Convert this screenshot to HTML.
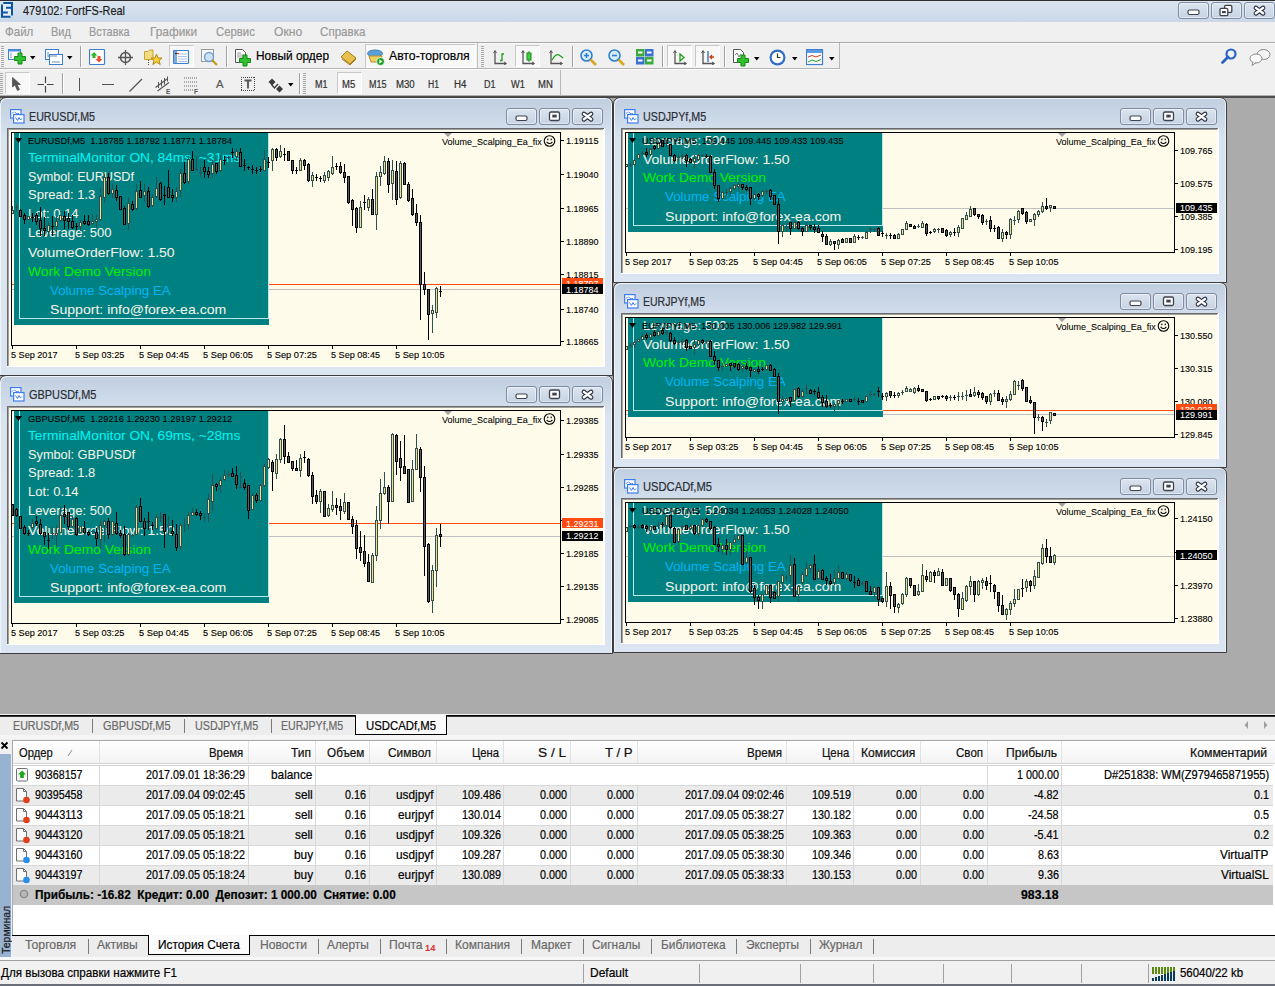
<!DOCTYPE html>
<html><head><meta charset="utf-8"><style>
html,body{margin:0;padding:0;}
body{width:1275px;height:986px;overflow:hidden;position:relative;background:#f0f0f0;font-family:"Liberation Sans",sans-serif;}
body div,body svg{position:absolute;}
.t{position:absolute;white-space:pre;-webkit-text-stroke:0.2px currentColor;}
</style></head><body>
<div style="left:0px;top:0px;width:1275px;height:1px;background:#2e2e2e;"></div>
<div style="left:0px;top:1px;width:1275px;height:21px;background:linear-gradient(#dbe5f0,#c9d7e7);"></div>
<svg style="left:0px;top:0px" width="16" height="20"><rect x="2" y="3" width="10" height="13.5" fill="#e4ecf6"/><path d="M2,4.5 V16.8 H10.5 M3.2,3 H12 V15.5 M6,7.8 H12 M3,12.5 H7.8" stroke="#0a56a4" stroke-width="2" fill="none"/></svg>
<span class="t" style="left:22.60px;top:4.13px;font-family:'Liberation Sans', sans-serif;font-size:13px;line-height:13px;color:#1c1c1c;font-weight:normal;transform:scaleX(0.8402);transform-origin:0 0;">479102: FortFS-Real</span>
<div style="left:1178px;top:2px;width:31px;height:17px;box-sizing:border-box;border:1px solid #7d8ba3;border-radius:3px;background:linear-gradient(#dbe4ef,#c7d3e2);box-shadow:inset 0 0 0 1px rgba(255,255,255,0.45);"></div>
<svg style="left:1178px;top:2px" width="31" height="17"><rect x="10.0" y="8.0" width="11" height="4.5" rx="1.5" fill="#fff" stroke="#3c4250" stroke-width="1.2"/></svg>
<div style="left:1211px;top:2px;width:31px;height:17px;box-sizing:border-box;border:1px solid #7d8ba3;border-radius:3px;background:linear-gradient(#dbe4ef,#c7d3e2);box-shadow:inset 0 0 0 1px rgba(255,255,255,0.45);"></div>
<svg style="left:1211px;top:2px" width="31" height="17"><rect x="13.6" y="3.4" width="7.2" height="7" rx="1.2" fill="#fff" stroke="#3c4250" stroke-width="1.3"/><rect x="9" y="6.4" width="7.8" height="7.2" rx="1.2" fill="#fff" stroke="#3c4250" stroke-width="1.3"/><rect x="11" y="9" width="3.8" height="2.2" fill="#3c4250"/></svg>
<div style="left:1244px;top:2px;width:31px;height:17px;box-sizing:border-box;border:1px solid #7d8ba3;border-radius:3px;background:linear-gradient(#dbe4ef,#c7d3e2);box-shadow:inset 0 0 0 1px rgba(255,255,255,0.45);"></div>
<svg style="left:1244px;top:2px" width="31" height="17"><path d="M11.9,5.9 L19.1,11.3 M19.1,5.9 L11.9,11.3" stroke="#2e3240" stroke-width="4.6" stroke-linecap="round"/><path d="M11.9,5.9 L19.1,11.3 M19.1,5.9 L11.9,11.3" stroke="#fff" stroke-width="2.4" stroke-linecap="round"/></svg>
<span class="t" style="left:4.70px;top:25.33px;font-family:'Liberation Sans', sans-serif;font-size:13px;line-height:13px;color:#9a9a9a;font-weight:normal;transform:scaleX(0.8852);transform-origin:0 0;">Файл</span>
<span class="t" style="left:51.00px;top:25.33px;font-family:'Liberation Sans', sans-serif;font-size:13px;line-height:13px;color:#9a9a9a;font-weight:normal;transform:scaleX(0.8499);transform-origin:0 0;">Вид</span>
<span class="t" style="left:89.40px;top:25.33px;font-family:'Liberation Sans', sans-serif;font-size:13px;line-height:13px;color:#9a9a9a;font-weight:normal;transform:scaleX(0.8401);transform-origin:0 0;">Вставка</span>
<span class="t" style="left:149.60px;top:25.33px;font-family:'Liberation Sans', sans-serif;font-size:13px;line-height:13px;color:#9a9a9a;font-weight:normal;transform:scaleX(0.9112);transform-origin:0 0;">Графики</span>
<span class="t" style="left:215.80px;top:25.33px;font-family:'Liberation Sans', sans-serif;font-size:13px;line-height:13px;color:#9a9a9a;font-weight:normal;transform:scaleX(0.8735);transform-origin:0 0;">Сервис</span>
<span class="t" style="left:273.60px;top:25.33px;font-family:'Liberation Sans', sans-serif;font-size:13px;line-height:13px;color:#9a9a9a;font-weight:normal;transform:scaleX(0.9332);transform-origin:0 0;">Окно</span>
<span class="t" style="left:320.00px;top:25.33px;font-family:'Liberation Sans', sans-serif;font-size:13px;line-height:13px;color:#9a9a9a;font-weight:normal;transform:scaleX(0.8922);transform-origin:0 0;">Справка</span>
<div style="left:0px;top:42px;width:1275px;height:1px;background:#a9a9a9;"></div>
<div style="left:0px;top:43px;width:1275px;height:1px;background:#fbfbfb;"></div>
<div style="left:0px;top:68px;width:840px;height:1px;background:#b4b4b4;"></div>
<div style="left:0px;top:69px;width:840px;height:1px;background:#fbfbfb;"></div>
<div style="left:0px;top:95px;width:1275px;height:1px;background:#b0b0b0;"></div>
<div style="left:0px;top:96px;width:1275px;height:2px;background:#4e4e4e;"></div>
<div style="left:839px;top:43px;width:1px;height:25px;background:#b8b8b8;"></div>
<div style="left:560px;top:70px;width:1px;height:25px;background:#b8b8b8;"></div>
<svg style="left:1px;top:46px" width="4" height="21"><rect x="0" y="0" width="3" height="1" fill="#a8a8a8"/><rect x="0" y="2" width="3" height="1" fill="#a8a8a8"/><rect x="0" y="4" width="3" height="1" fill="#a8a8a8"/><rect x="0" y="6" width="3" height="1" fill="#a8a8a8"/><rect x="0" y="8" width="3" height="1" fill="#a8a8a8"/><rect x="0" y="10" width="3" height="1" fill="#a8a8a8"/><rect x="0" y="12" width="3" height="1" fill="#a8a8a8"/><rect x="0" y="14" width="3" height="1" fill="#a8a8a8"/><rect x="0" y="16" width="3" height="1" fill="#a8a8a8"/><rect x="0" y="18" width="3" height="1" fill="#a8a8a8"/><rect x="0" y="20" width="3" height="1" fill="#a8a8a8"/></svg>
<svg style="left:8px;top:49px" width="18" height="16" viewBox="0 0 18 16"><rect x="0.5" y="0.5" width="12" height="10" fill="#fff" stroke="#3a7fd0"/><rect x="0.5" y="0.5" width="12" height="2" fill="#4d8fdc"/><path d="M3,3.5 V9" stroke="#7a9cc0"/><path d="M10,4 H14 V7.5 H17.5 V11.5 H14 V15 H10 V11.5 H6.5 V7.5 H10 Z" fill="#30c030" stroke="#138a13"/></svg>
<svg style="left:30px;top:56px" width="6" height="4" viewBox="0 0 6 4"><path d="M0,0 H5.5 L2.75,3.5 Z" fill="#000"/></svg>
<svg style="left:45px;top:49px" width="18" height="17" viewBox="0 0 18 17"><rect x="0.5" y="0.5" width="13" height="10" fill="#fff" stroke="#3a7fd0"/><rect x="4.5" y="5.5" width="13" height="10" fill="#fff" stroke="#3a7fd0"/><path d="M3,3 V8 M3,7 H12 M7,13 H15" stroke="#6a90b8"/></svg>
<svg style="left:67px;top:56px" width="6" height="4" viewBox="0 0 6 4"><path d="M0,0 H5.5 L2.75,3.5 Z" fill="#000"/></svg>
<div style="left:80px;top:46px;width:1px;height:21px;background:#a0a0a0;"></div>
<div style="left:81px;top:46px;width:1px;height:21px;background:#fff;"></div>
<svg style="left:89px;top:49px" width="17" height="17" viewBox="0 0 17 17"><rect x="0.5" y="0.5" width="15" height="15" rx="1" fill="#fff" stroke="#3a7fd0" stroke-width="1.2"/><path d="M5,3 L8.5,6.5 H6.5 V9 H3.5 V6.5 H1.5 Z" fill="#2fb52f"/><path d="M10,13.5 L13.5,10 H11.5 V7 H8.5 V10 H6.5 Z" fill="#e8502a"/></svg>
<svg style="left:117px;top:49px" width="17" height="17" viewBox="0 0 17 17"><circle cx="8.5" cy="8.5" r="5" fill="none" stroke="#555" stroke-width="1.5"/><path d="M8.5,1 V16 M1,8.5 H16" stroke="#555" stroke-width="1.3"/></svg>
<svg style="left:144px;top:49px" width="19" height="17" viewBox="0 0 19 17"><path d="M0.5,2.5 H4 L5.5,1 H9 V10.5 H0.5 Z" fill="#f2dc80" stroke="#c8a03a"/><path d="M12.5,5 L14,9 H18 L15,11.5 L16.2,15.5 L12.5,13 L8.8,15.5 L10,11.5 L7,9 H11 Z" fill="#f5d23a" stroke="#b8860b"/><path d="M4.5,11 V16" stroke="#555" stroke-dasharray="1,1"/></svg>
<div style="left:169px;top:45px;width:25px;height:22px;box-sizing:border-box;border:1px solid #c8c8c8;border-right-color:#fff;border-bottom-color:#fff;background:#f8f8f8;"></div>
<svg style="left:173px;top:50px" width="17" height="15" viewBox="0 0 17 15"><rect x="0.5" y="0.5" width="15" height="13" rx="1" fill="#fff" stroke="#3a7fd0" stroke-width="1.2"/><rect x="1" y="1" width="3" height="12" fill="#7fa8d8"/><path d="M5,4 H14 M5,6.5 H14 M5,9 H14 M5,11.5 H14" stroke="#a8c4e8"/><circle cx="3" cy="3.5" r="0.8" fill="#000"/><circle cx="5" cy="3.5" r="0.8" fill="#e00"/></svg>
<svg style="left:201px;top:49px" width="19" height="18" viewBox="0 0 19 18"><rect x="0.5" y="0.5" width="12" height="12" fill="#f8f8f8" stroke="#999"/><circle cx="8" cy="8" r="4.5" fill="#cfe2f5" stroke="#6a9ed6" stroke-width="1.4"/><path d="M11,11 L16,16" stroke="#c89a20" stroke-width="2.2"/></svg>
<div style="left:226px;top:46px;width:1px;height:21px;background:#a0a0a0;"></div>
<div style="left:227px;top:46px;width:1px;height:21px;background:#fff;"></div>
<svg style="left:235px;top:49px" width="19" height="18" viewBox="0 0 19 18"><path d="M0.5,0.5 H7.5 L10.5,3.5 V13.5 H0.5 Z" fill="#fff" stroke="#555"/><path d="M2,4 H6 M2,6 H8 M2,8 H8" stroke="#999"/><path d="M8,6 H12 V9.5 H15.5 V13.5 H12 V17 H8 V13.5 H4.5 V9.5 H8 Z" fill="#30c030" stroke="#138a13"/></svg>
<span class="t" style="left:255.60px;top:49.58px;font-family:'Liberation Sans', sans-serif;font-size:12.5px;line-height:12.5px;color:#000;font-weight:normal;transform:scaleX(0.9496);transform-origin:0 0;">Новый ордер</span>
<svg style="left:340px;top:50px" width="18" height="16" viewBox="0 0 18 16"><path d="M1,7 L7,1 L16,8 L10,14 Z" fill="#e8c050" stroke="#a87c18"/><path d="M2,9 L10,15 L16,9" fill="none" stroke="#a87c18"/></svg>
<div style="left:365px;top:44px;width:111px;height:24px;box-sizing:border-box;border:1px solid #c8c8c8;border-right-color:#fff;border-bottom-color:#fff;background:#f8f8f8;"></div>
<svg style="left:367px;top:49px" width="19" height="17" viewBox="0 0 19 17"><ellipse cx="8" cy="4.5" rx="7.5" ry="3.5" fill="#5aa0d8" stroke="#3f7fb8"/><path d="M2,7 L4,13 H13 L15,7 Z" fill="#f0d060" stroke="#b89028"/><circle cx="13.5" cy="12.5" r="4" fill="#20a020" stroke="#fff" stroke-width="0.8"/><path d="M12.3,10.5 V14.5 L15.5,12.5 Z" fill="#fff"/></svg>
<span class="t" style="left:389.20px;top:49.77px;font-family:'Liberation Sans', sans-serif;font-size:12.5px;line-height:12.5px;color:#000;font-weight:normal;transform:scaleX(0.9776);transform-origin:0 0;">Авто-торговля</span>
<div style="left:477px;top:43px;width:1px;height:25px;background:#c0c0c0;"></div>
<svg style="left:481px;top:46px" width="4" height="21"><rect x="0" y="0" width="3" height="1" fill="#a8a8a8"/><rect x="0" y="2" width="3" height="1" fill="#a8a8a8"/><rect x="0" y="4" width="3" height="1" fill="#a8a8a8"/><rect x="0" y="6" width="3" height="1" fill="#a8a8a8"/><rect x="0" y="8" width="3" height="1" fill="#a8a8a8"/><rect x="0" y="10" width="3" height="1" fill="#a8a8a8"/><rect x="0" y="12" width="3" height="1" fill="#a8a8a8"/><rect x="0" y="14" width="3" height="1" fill="#a8a8a8"/><rect x="0" y="16" width="3" height="1" fill="#a8a8a8"/><rect x="0" y="18" width="3" height="1" fill="#a8a8a8"/><rect x="0" y="20" width="3" height="1" fill="#a8a8a8"/></svg>
<svg style="left:492px;top:50px" width="16" height="15" viewBox="0 0 16 15"><path d="M3,1 V13.5 H14" fill="none" stroke="#555" stroke-width="1.3"/><path d="M1.5,3 L3,0.5 L4.5,3 M12,12 L14.5,13.5 L12,15" fill="none" stroke="#555"/><path d="M8,10.5 H10 V4 H12" fill="none" stroke="#1aa01a" stroke-width="1.3"/></svg>
<div style="left:515px;top:45px;width:25px;height:22px;box-sizing:border-box;border:1px solid #c8c8c8;border-right-color:#fff;border-bottom-color:#fff;background:#f8f8f8;"></div>
<svg style="left:520px;top:50px" width="16" height="15" viewBox="0 0 16 15"><path d="M3,1 V13.5 H14" fill="none" stroke="#555" stroke-width="1.3"/><path d="M1.5,3 L3,0.5 L4.5,3 M12,12 L14.5,13.5 L12,15" fill="none" stroke="#555"/><path d="M9,1 V12" stroke="#1a8a1a"/><rect x="7" y="3" width="4" height="7" fill="#3ad03a" stroke="#1a8a1a"/></svg>
<svg style="left:548px;top:50px" width="16" height="15" viewBox="0 0 16 15"><path d="M3,1 V13.5 H14" fill="none" stroke="#555" stroke-width="1.3"/><path d="M1.5,3 L3,0.5 L4.5,3 M12,12 L14.5,13.5 L12,15" fill="none" stroke="#555"/><path d="M4,10 Q8,3 11,5 T15,8" fill="none" stroke="#1aa01a" stroke-width="1.3"/></svg>
<div style="left:572px;top:46px;width:1px;height:21px;background:#a0a0a0;"></div>
<div style="left:573px;top:46px;width:1px;height:21px;background:#fff;"></div>
<svg style="left:580px;top:49px" width="18" height="17" viewBox="0 0 18 17"><circle cx="6.5" cy="6.5" r="5.5" fill="#d8ecfa" stroke="#2f7fd0" stroke-width="1.6"/><path d="M4,6.5 H9 M6.5,4 V9" stroke="#2f7fd0" stroke-width="1.6"/><path d="M10.5,10.5 L16,16" stroke="#d8a820" stroke-width="2.6"/></svg>
<svg style="left:608px;top:49px" width="18" height="17" viewBox="0 0 18 17"><circle cx="6.5" cy="6.5" r="5.5" fill="#d8ecfa" stroke="#2f7fd0" stroke-width="1.6"/><path d="M4,6.5 H9" stroke="#2f7fd0" stroke-width="1.6"/><path d="M10.5,10.5 L16,16" stroke="#d8a820" stroke-width="2.6"/></svg>
<svg style="left:636px;top:49px" width="18" height="16" viewBox="0 0 18 16"><rect x="0" y="0" width="8.5" height="7.5" fill="#3aaa3a"/><rect x="9" y="0" width="8.5" height="7.5" fill="#3a70d0"/><rect x="0" y="8" width="8.5" height="7.5" fill="#3a70d0"/><rect x="9" y="8" width="8.5" height="7.5" fill="#3aaa3a"/><path d="M2,3.5 H6.5 M11,3.5 H15.5 M2,11.5 H6.5 M11,11.5 H15.5" stroke="#fff" stroke-width="2"/></svg>
<div style="left:662px;top:46px;width:1px;height:21px;background:#a0a0a0;"></div>
<div style="left:663px;top:46px;width:1px;height:21px;background:#fff;"></div>
<div style="left:667px;top:45px;width:25px;height:22px;box-sizing:border-box;border:1px solid #c8c8c8;border-right-color:#fff;border-bottom-color:#fff;background:#f8f8f8;"></div>
<svg style="left:672px;top:50px" width="16" height="15" viewBox="0 0 16 15"><path d="M3,1 V13.5 H14" fill="none" stroke="#555" stroke-width="1.3"/><path d="M1.5,3 L3,0.5 L4.5,3 M12,12 L14.5,13.5 L12,15" fill="none" stroke="#555"/><path d="M8,4 V11 L12,7.5 Z" fill="none" stroke="#1aa01a" stroke-width="1.3"/></svg>
<div style="left:695px;top:45px;width:25px;height:22px;box-sizing:border-box;border:1px solid #c8c8c8;border-right-color:#fff;border-bottom-color:#fff;background:#f8f8f8;"></div>
<svg style="left:700px;top:50px" width="16" height="15" viewBox="0 0 16 15"><path d="M3,1 V13.5 H14" fill="none" stroke="#555" stroke-width="1.3"/><path d="M1.5,3 L3,0.5 L4.5,3 M12,12 L14.5,13.5 L12,15" fill="none" stroke="#555"/><path d="M8,1 V12" stroke="#2a6ab8" stroke-width="1.3"/><path d="M14,7 H10 M12,5 L10,7 L12,9" fill="none" stroke="#d04010" stroke-width="1.3"/></svg>
<div style="left:724px;top:46px;width:1px;height:21px;background:#a0a0a0;"></div>
<div style="left:725px;top:46px;width:1px;height:21px;background:#fff;"></div>
<svg style="left:733px;top:49px" width="18" height="18" viewBox="0 0 18 18"><path d="M0.5,0.5 H7.5 L10.5,3.5 V13.5 H0.5 Z" fill="#fff" stroke="#555"/><path d="M2,6 L4,4 L6,8 L8,5" fill="none" stroke="#777"/><path d="M8,6 H12 V9.5 H15.5 V13.5 H12 V17 H8 V13.5 H4.5 V9.5 H8 Z" fill="#30c030" stroke="#138a13"/></svg>
<svg style="left:754px;top:57px" width="6" height="4" viewBox="0 0 6 4"><path d="M0,0 H5.5 L2.75,3.5 Z" fill="#000"/></svg>
<svg style="left:769px;top:49px" width="18" height="18" viewBox="0 0 18 18"><circle cx="8.5" cy="8.5" r="8" fill="#2f6fc8"/><circle cx="8.5" cy="8.5" r="5.8" fill="#fff"/><path d="M8.5,4.5 V8.5 H11.5" stroke="#333" stroke-width="1.2" fill="none"/></svg>
<svg style="left:792px;top:57px" width="6" height="4" viewBox="0 0 6 4"><path d="M0,0 H5.5 L2.75,3.5 Z" fill="#000"/></svg>
<svg style="left:806px;top:49px" width="18" height="17" viewBox="0 0 18 17"><rect x="0.5" y="0.5" width="16" height="15" fill="#fff" stroke="#3a7fd0" stroke-width="1.2"/><rect x="1" y="1" width="15" height="3" fill="#5a9ae0"/><path d="M2,8 L6,6.5 L10,8 L15,6" stroke="#d04010" fill="none"/><path d="M2,13 L6,11 L10,12.5 L15,10.5" stroke="#1aa01a" fill="none"/></svg>
<svg style="left:829px;top:57px" width="6" height="4" viewBox="0 0 6 4"><path d="M0,0 H5.5 L2.75,3.5 Z" fill="#000"/></svg>
<svg style="left:1220px;top:48px" width="18" height="18" viewBox="0 0 18 18"><circle cx="11" cy="6" r="4.5" fill="none" stroke="#2a62c8" stroke-width="2.2"/><path d="M8,9 L2.5,14.5" stroke="#2a62c8" stroke-width="2.8" stroke-linecap="round"/></svg>
<svg style="left:1248px;top:47px" width="24" height="20" viewBox="0 0 24 20"><ellipse cx="15.5" cy="7.5" rx="6.5" ry="5" fill="#f4f4f4" stroke="#8a8a8a"/><ellipse cx="8" cy="11.5" rx="6" ry="4.5" fill="#fafafa" stroke="#8a8a8a"/><path d="M5,15 L4,18.5 L8,15.5" fill="#fafafa" stroke="#8a8a8a"/></svg>
<svg style="left:0px;top:73px" width="4" height="21"><rect x="0" y="0" width="3" height="1" fill="#a8a8a8"/><rect x="0" y="2" width="3" height="1" fill="#a8a8a8"/><rect x="0" y="4" width="3" height="1" fill="#a8a8a8"/><rect x="0" y="6" width="3" height="1" fill="#a8a8a8"/><rect x="0" y="8" width="3" height="1" fill="#a8a8a8"/><rect x="0" y="10" width="3" height="1" fill="#a8a8a8"/><rect x="0" y="12" width="3" height="1" fill="#a8a8a8"/><rect x="0" y="14" width="3" height="1" fill="#a8a8a8"/><rect x="0" y="16" width="3" height="1" fill="#a8a8a8"/><rect x="0" y="18" width="3" height="1" fill="#a8a8a8"/><rect x="0" y="20" width="3" height="1" fill="#a8a8a8"/></svg>
<div style="left:5px;top:72px;width:25px;height:22px;box-sizing:border-box;border:1px solid #c8c8c8;border-right-color:#fff;border-bottom-color:#fff;background:#f8f8f8;"></div>
<svg style="left:11px;top:76px" width="12" height="16" viewBox="0 0 12 16"><path d="M1.5,1.5 L1.5,11 L4,9 L6.5,14.5 L8.5,13.5 L6,8.5 L9.5,8.5 Z" fill="#555" stroke="#555" stroke-width="0.8"/></svg>
<svg style="left:37px;top:76px" width="17" height="17" viewBox="0 0 17 17"><path d="M8.5,0.5 V7 M8.5,10 V16.5 M0.5,8.5 H7 M10,8.5 H16.5" stroke="#444" stroke-width="1.2"/></svg>
<div style="left:62px;top:73px;width:1px;height:21px;background:#a0a0a0;"></div>
<div style="left:63px;top:73px;width:1px;height:21px;background:#fff;"></div>
<div style="left:79px;top:78px;width:1px;height:13px;background:#555;"></div>
<div style="left:102px;top:84px;width:12px;height:1px;background:#555;"></div>
<svg style="left:129px;top:78px" width="14" height="14" viewBox="0 0 14 14"><path d="M0.5,13.5 L13,1" stroke="#555" stroke-width="1.2"/></svg>
<svg style="left:155px;top:76px" width="18" height="18" viewBox="0 0 18 18"><path d="M0.5,11.5 L12,3 M2.5,15 L14,6.5" stroke="#555" stroke-width="1.1"/><path d="M3.5,6 V12 M6.5,4 V10.5 M9.5,2 V8.5 M12.5,0.5 V5.5" stroke="#555" stroke-width="1"/><text x="11" y="17.5" font-size="6.5" font-family="Liberation Sans" font-weight="bold" fill="#555">E</text></svg>
<svg style="left:184px;top:76px" width="16" height="18" viewBox="0 0 16 18"><path d="M0,2 H14 M0,6 H14 M0,10 H14 M0,14 H10" stroke="#666" stroke-dasharray="1,1"/><text x="10" y="17.5" font-size="6.5" font-family="Liberation Sans" font-weight="bold" fill="#555">F</text></svg>
<span class="t" style="left:215.80px;top:79.30px;font-family:'Liberation Sans', sans-serif;font-size:11px;line-height:11px;color:#5a5a5a;font-weight:normal;transform:scaleX(1.0349);transform-origin:0 0;">A</span>
<svg style="left:241px;top:77px" width="15" height="15" viewBox="0 0 15 15"><rect x="0" y="0" width="1" height="1" fill="#444"/><rect x="0" y="13" width="1" height="1" fill="#444"/><rect x="2" y="0" width="1" height="1" fill="#444"/><rect x="2" y="13" width="1" height="1" fill="#444"/><rect x="4" y="0" width="1" height="1" fill="#444"/><rect x="4" y="13" width="1" height="1" fill="#444"/><rect x="6" y="0" width="1" height="1" fill="#444"/><rect x="6" y="13" width="1" height="1" fill="#444"/><rect x="8" y="0" width="1" height="1" fill="#444"/><rect x="8" y="13" width="1" height="1" fill="#444"/><rect x="10" y="0" width="1" height="1" fill="#444"/><rect x="10" y="13" width="1" height="1" fill="#444"/><rect x="12" y="0" width="1" height="1" fill="#444"/><rect x="12" y="13" width="1" height="1" fill="#444"/><rect x="0" y="0" width="1" height="1" fill="#444"/><rect x="13" y="0" width="1" height="1" fill="#444"/><rect x="0" y="2" width="1" height="1" fill="#444"/><rect x="13" y="2" width="1" height="1" fill="#444"/><rect x="0" y="4" width="1" height="1" fill="#444"/><rect x="13" y="4" width="1" height="1" fill="#444"/><rect x="0" y="6" width="1" height="1" fill="#444"/><rect x="13" y="6" width="1" height="1" fill="#444"/><rect x="0" y="8" width="1" height="1" fill="#444"/><rect x="13" y="8" width="1" height="1" fill="#444"/><rect x="0" y="10" width="1" height="1" fill="#444"/><rect x="13" y="10" width="1" height="1" fill="#444"/><rect x="0" y="12" width="1" height="1" fill="#444"/><rect x="13" y="12" width="1" height="1" fill="#444"/><path d="M3.5,3.5 H10.5 M7,3.5 V11.5" stroke="#555" stroke-width="1.8"/></svg>
<svg style="left:268px;top:78px" width="16" height="15" viewBox="0 0 16 15"><path d="M4,0.5 L7.5,4 L4,7.5 L0.5,4 Z M11.5,7.5 L15,11 L11.5,14.5 L8,11 Z" fill="#3a3a3a"/><path d="M3.5,6.5 L6.5,10 L10,6" fill="none" stroke="#3a3a3a" stroke-width="1.4"/></svg>
<svg style="left:288px;top:83px" width="6" height="4" viewBox="0 0 6 4"><path d="M0,0 H5.5 L2.75,3.5 Z" fill="#000"/></svg>
<div style="left:299px;top:73px;width:1px;height:21px;background:#a0a0a0;"></div>
<div style="left:300px;top:73px;width:1px;height:21px;background:#fff;"></div>
<svg style="left:303px;top:73px" width="4" height="21"><rect x="0" y="0" width="3" height="1" fill="#a8a8a8"/><rect x="0" y="2" width="3" height="1" fill="#a8a8a8"/><rect x="0" y="4" width="3" height="1" fill="#a8a8a8"/><rect x="0" y="6" width="3" height="1" fill="#a8a8a8"/><rect x="0" y="8" width="3" height="1" fill="#a8a8a8"/><rect x="0" y="10" width="3" height="1" fill="#a8a8a8"/><rect x="0" y="12" width="3" height="1" fill="#a8a8a8"/><rect x="0" y="14" width="3" height="1" fill="#a8a8a8"/><rect x="0" y="16" width="3" height="1" fill="#a8a8a8"/><rect x="0" y="18" width="3" height="1" fill="#a8a8a8"/><rect x="0" y="20" width="3" height="1" fill="#a8a8a8"/></svg>
<div style="left:337px;top:72px;width:25px;height:22px;box-sizing:border-box;border:1px solid #c8c8c8;border-right-color:#fff;border-bottom-color:#fff;background:#f8f8f8;"></div>
<span class="t" style="left:314.80px;top:79.58px;font-family:'Liberation Sans', sans-serif;font-size:10px;line-height:10px;color:#303030;font-weight:normal;transform:scaleX(0.8989);transform-origin:0 0;">M1</span>
<span class="t" style="left:342.20px;top:79.58px;font-family:'Liberation Sans', sans-serif;font-size:10px;line-height:10px;color:#303030;font-weight:normal;transform:scaleX(0.9492);transform-origin:0 0;">M5</span>
<span class="t" style="left:368.60px;top:79.58px;font-family:'Liberation Sans', sans-serif;font-size:10px;line-height:10px;color:#303030;font-weight:normal;transform:scaleX(0.8996);transform-origin:0 0;">M15</span>
<span class="t" style="left:396.00px;top:79.58px;font-family:'Liberation Sans', sans-serif;font-size:10px;line-height:10px;color:#303030;font-weight:normal;transform:scaleX(0.9613);transform-origin:0 0;">M30</span>
<span class="t" style="left:427.80px;top:79.58px;font-family:'Liberation Sans', sans-serif;font-size:10px;line-height:10px;color:#303030;font-weight:normal;transform:scaleX(0.8596);transform-origin:0 0;">H1</span>
<span class="t" style="left:454.20px;top:79.58px;font-family:'Liberation Sans', sans-serif;font-size:10px;line-height:10px;color:#303030;font-weight:normal;transform:scaleX(0.9768);transform-origin:0 0;">H4</span>
<span class="t" style="left:483.80px;top:79.58px;font-family:'Liberation Sans', sans-serif;font-size:10px;line-height:10px;color:#303030;font-weight:normal;transform:scaleX(0.8987);transform-origin:0 0;">D1</span>
<span class="t" style="left:511.30px;top:79.58px;font-family:'Liberation Sans', sans-serif;font-size:10px;line-height:10px;color:#303030;font-weight:normal;transform:scaleX(0.9200);transform-origin:0 0;">W1</span>
<span class="t" style="left:537.60px;top:79.58px;font-family:'Liberation Sans', sans-serif;font-size:10px;line-height:10px;color:#303030;font-weight:normal;transform:scaleX(0.9510);transform-origin:0 0;">MN</span>
<div style="left:0px;top:98px;width:1275px;height:617px;background:#ababab;"></div>
<div style="left:-1px;top:97px;width:614px;height:279px;box-sizing:border-box;border:1px solid #3e3e3e;background:linear-gradient(#c0cee0 0px,#d0dcea 28px,#d9e4f0 40px,#dae5f1 100%);border-radius:7px 7px 0 0;box-shadow:inset 1px 1px 0 #eef4fa, inset -1px 0 0 #eef4fa;"></div>
<svg style="left:10px;top:109px" width="15" height="15"><rect x="0.6" y="0.6" width="10.4" height="8.4" fill="#fff" stroke="#3c7cf4" stroke-width="1.2"/><path d="M2.2,4.5 L3.5,3 M4.5,3 L7,5 L9,4.5" fill="none" stroke="#3c7cf4" stroke-width="1"/><rect x="3.6" y="5.6" width="10.4" height="8.4" fill="#fff" stroke="#3c7cf4" stroke-width="1.2"/><path d="M5.5,8.5 L7.5,11.5 L9,8.5 L10.5,11 L12,9.5" fill="none" stroke="#3c7cf4" stroke-width="1"/></svg>
<span class="t" style="left:29.20px;top:110.98px;font-family:'Liberation Sans', sans-serif;font-size:12.5px;line-height:12.5px;color:#2a2e36;font-weight:normal;transform:scaleX(0.8561);transform-origin:0 0;">EURUSDf,M5</span>
<div style="left:506px;top:108px;width:31px;height:17px;box-sizing:border-box;border:1px solid #7d8ba3;border-radius:3px;background:linear-gradient(#dbe4ef,#c7d3e2);box-shadow:inset 0 0 0 1px rgba(255,255,255,0.45);"></div>
<svg style="left:506px;top:108px" width="31" height="17"><rect x="10.0" y="8.0" width="11" height="4.5" rx="1.5" fill="#fff" stroke="#3c4250" stroke-width="1.2"/></svg>
<div style="left:539px;top:108px;width:31px;height:17px;box-sizing:border-box;border:1px solid #7d8ba3;border-radius:3px;background:linear-gradient(#dbe4ef,#c7d3e2);box-shadow:inset 0 0 0 1px rgba(255,255,255,0.45);"></div>
<svg style="left:539px;top:108px" width="31" height="17"><rect x="10.5" y="4.0" width="10" height="8.5" rx="1.5" fill="#fff" stroke="#3c4250" stroke-width="1.3"/><rect x="13.3" y="6.7" width="4.4" height="2.8" fill="#3c4250"/></svg>
<div style="left:572px;top:108px;width:31px;height:17px;box-sizing:border-box;border:1px solid #7d8ba3;border-radius:3px;background:linear-gradient(#dbe4ef,#c7d3e2);box-shadow:inset 0 0 0 1px rgba(255,255,255,0.45);"></div>
<svg style="left:572px;top:108px" width="31" height="17"><path d="M11.9,5.9 L19.1,11.3 M19.1,5.9 L11.9,11.3" stroke="#2e3240" stroke-width="4.6" stroke-linecap="round"/><path d="M11.9,5.9 L19.1,11.3 M19.1,5.9 L11.9,11.3" stroke="#fff" stroke-width="2.4" stroke-linecap="round"/></svg>
<div style="left:7px;top:128px;width:598px;height:239px;background:#fff;"></div>
<div style="left:7px;top:128px;width:597px;height:1px;background:#6a6a6a;"></div>
<div style="left:7px;top:129px;width:596px;height:1px;background:#a0a0a0;"></div>
<div style="left:7px;top:128px;width:1px;height:238px;background:#6a6a6a;"></div>
<div style="left:8px;top:129px;width:1px;height:237px;background:#a0a0a0;"></div>
<div style="left:9px;top:130px;width:594px;height:236px;background:#fffbea;"></div>
<div style="left:12px;top:284px;width:548px;height:1px;background:#ff4a10;"></div>
<div style="left:12px;top:289px;width:548px;height:1px;background:#c0c0c0;"></div>
<div style="left:14px;top:133px;width:255px;height:192px;background:#008080;"></div>
<div style="left:19px;top:133px;width:1px;height:185px;background:#b8e8e8;"></div>
<div style="left:19px;top:318px;width:250px;height:1px;background:#b8e8e8;"></div>
<div style="left:268px;top:133px;width:1px;height:185px;background:#b8e8e8;"></div>
<span class="t" style="left:28.40px;top:151.63px;font-family:'Liberation Sans', sans-serif;font-size:12.6px;line-height:12.6px;color:#00f4f4;font-weight:normal;transform:scaleX(1.0892);transform-origin:0 0;-webkit-text-stroke:0.05px currentColor;">TerminalMonitor ON, 84ms, ~31ms</span>
<span class="t" style="left:28.40px;top:170.53px;font-family:'Liberation Sans', sans-serif;font-size:12.6px;line-height:12.6px;color:#f2f2e8;font-weight:normal;transform:scaleX(1.0031);transform-origin:0 0;-webkit-text-stroke:0.05px currentColor;">Symbol: EURUSDf</span>
<span class="t" style="left:28.40px;top:189.33px;font-family:'Liberation Sans', sans-serif;font-size:12.6px;line-height:12.6px;color:#f2f2e8;font-weight:normal;transform:scaleX(1.0334);transform-origin:0 0;-webkit-text-stroke:0.05px currentColor;">Spread: 1.3</span>
<span class="t" style="left:28.40px;top:208.23px;font-family:'Liberation Sans', sans-serif;font-size:12.6px;line-height:12.6px;color:#f2f2e8;font-weight:normal;transform:scaleX(1.0320);transform-origin:0 0;-webkit-text-stroke:0.05px currentColor;">Lot: 0.14</span>
<span class="t" style="left:28.40px;top:227.33px;font-family:'Liberation Sans', sans-serif;font-size:12.6px;line-height:12.6px;color:#f2f2e8;font-weight:normal;transform:scaleX(1.0356);transform-origin:0 0;-webkit-text-stroke:0.05px currentColor;">Leverage: 500</span>
<span class="t" style="left:28.40px;top:246.93px;font-family:'Liberation Sans', sans-serif;font-size:12.6px;line-height:12.6px;color:#f2f2e8;font-weight:normal;transform:scaleX(1.1081);transform-origin:0 0;-webkit-text-stroke:0.05px currentColor;">VolumeOrderFlow: 1.50</span>
<span class="t" style="left:28.40px;top:266.33px;font-family:'Liberation Sans', sans-serif;font-size:12.6px;line-height:12.6px;color:#00f000;font-weight:normal;transform:scaleX(1.1005);transform-origin:0 0;-webkit-text-stroke:0.05px currentColor;">Work Demo Version</span>
<span class="t" style="left:50.30px;top:285.13px;font-family:'Liberation Sans', sans-serif;font-size:12.6px;line-height:12.6px;color:#00b4f4;font-weight:normal;transform:scaleX(1.0576);transform-origin:0 0;-webkit-text-stroke:0.05px currentColor;">Volume Scalping EA</span>
<span class="t" style="left:50.30px;top:303.93px;font-family:'Liberation Sans', sans-serif;font-size:12.6px;line-height:12.6px;color:#f2f2e8;font-weight:normal;transform:scaleX(1.1180);transform-origin:0 0;-webkit-text-stroke:0.05px currentColor;">Support: info@forex-ea.com</span>
<svg style="left:0px;top:0px" width="1275" height="986" shape-rendering="crispEdges"><rect x="12" y="206" width="1" height="8" fill="#2f4f4f"/><rect x="11" y="210" width="3" height="4" fill="#2f4f4f"/><rect x="12" y="211" width="1" height="2" fill="#f0e088"/><rect x="16" y="204" width="1" height="7" fill="#2f4f4f"/><rect x="15" y="207" width="3" height="1" fill="#2f4f4f"/><rect x="20" y="209" width="1" height="8" fill="#000000"/><rect x="19" y="210" width="3" height="7" fill="#000000"/><rect x="20" y="211" width="1" height="5" fill="#5a5a5a"/><rect x="24" y="213" width="1" height="11" fill="#000000"/><rect x="23" y="215" width="3" height="5" fill="#000000"/><rect x="24" y="216" width="1" height="3" fill="#5a5a5a"/><rect x="28" y="216" width="1" height="4" fill="#2f4f4f"/><rect x="27" y="216" width="3" height="4" fill="#2f4f4f"/><rect x="28" y="217" width="1" height="2" fill="#f0e088"/><rect x="32" y="213" width="1" height="9" fill="#000000"/><rect x="31" y="217" width="3" height="1" fill="#000000"/><rect x="36" y="213" width="1" height="12" fill="#000000"/><rect x="35" y="215" width="3" height="7" fill="#000000"/><rect x="36" y="216" width="1" height="5" fill="#5a5a5a"/><rect x="40" y="207" width="1" height="29" fill="#000000"/><rect x="39" y="220" width="3" height="9" fill="#000000"/><rect x="40" y="221" width="1" height="7" fill="#5a5a5a"/><rect x="44" y="217" width="1" height="19" fill="#000000"/><rect x="43" y="228" width="3" height="3" fill="#000000"/><rect x="44" y="229" width="1" height="1" fill="#5a5a5a"/><rect x="48" y="222" width="1" height="14" fill="#2f4f4f"/><rect x="47" y="225" width="3" height="7" fill="#2f4f4f"/><rect x="48" y="226" width="1" height="5" fill="#f0e088"/><rect x="52" y="216" width="1" height="20" fill="#000000"/><rect x="51" y="226" width="3" height="1" fill="#000000"/><rect x="56" y="216" width="1" height="16" fill="#2f4f4f"/><rect x="55" y="221" width="3" height="6" fill="#2f4f4f"/><rect x="56" y="222" width="1" height="4" fill="#f0e088"/><rect x="60" y="215" width="1" height="6" fill="#2f4f4f"/><rect x="59" y="215" width="3" height="6" fill="#2f4f4f"/><rect x="60" y="216" width="1" height="4" fill="#f0e088"/><rect x="64" y="211" width="1" height="18" fill="#000000"/><rect x="63" y="216" width="3" height="5" fill="#000000"/><rect x="64" y="217" width="1" height="3" fill="#5a5a5a"/><rect x="68" y="213" width="1" height="16" fill="#000000"/><rect x="67" y="218" width="3" height="4" fill="#000000"/><rect x="68" y="219" width="1" height="2" fill="#5a5a5a"/><rect x="72" y="215" width="1" height="14" fill="#000000"/><rect x="71" y="221" width="3" height="7" fill="#000000"/><rect x="72" y="222" width="1" height="5" fill="#5a5a5a"/><rect x="76" y="223" width="1" height="7" fill="#000000"/><rect x="75" y="226" width="3" height="1" fill="#000000"/><rect x="80" y="220" width="1" height="11" fill="#2f4f4f"/><rect x="79" y="222" width="3" height="5" fill="#2f4f4f"/><rect x="80" y="223" width="1" height="3" fill="#f0e088"/><rect x="84" y="215" width="1" height="10" fill="#000000"/><rect x="83" y="221" width="3" height="3" fill="#000000"/><rect x="84" y="222" width="1" height="1" fill="#5a5a5a"/><rect x="88" y="215" width="1" height="11" fill="#000000"/><rect x="87" y="221" width="3" height="4" fill="#000000"/><rect x="88" y="222" width="1" height="2" fill="#5a5a5a"/><rect x="92" y="214" width="1" height="11" fill="#2f4f4f"/><rect x="91" y="221" width="3" height="3" fill="#2f4f4f"/><rect x="92" y="222" width="1" height="1" fill="#f0e088"/><rect x="96" y="215" width="1" height="13" fill="#2f4f4f"/><rect x="95" y="219" width="3" height="3" fill="#2f4f4f"/><rect x="96" y="220" width="1" height="1" fill="#f0e088"/><rect x="100" y="188" width="1" height="33" fill="#2f4f4f"/><rect x="99" y="196" width="3" height="24" fill="#2f4f4f"/><rect x="100" y="197" width="1" height="22" fill="#f0e088"/><rect x="104" y="174" width="1" height="29" fill="#2f4f4f"/><rect x="103" y="177" width="3" height="21" fill="#2f4f4f"/><rect x="104" y="178" width="1" height="19" fill="#f0e088"/><rect x="108" y="173" width="1" height="22" fill="#000000"/><rect x="107" y="177" width="3" height="17" fill="#000000"/><rect x="108" y="178" width="1" height="15" fill="#5a5a5a"/><rect x="112" y="183" width="1" height="15" fill="#2f4f4f"/><rect x="111" y="189" width="3" height="5" fill="#2f4f4f"/><rect x="112" y="190" width="1" height="3" fill="#f0e088"/><rect x="116" y="185" width="1" height="16" fill="#000000"/><rect x="115" y="190" width="3" height="8" fill="#000000"/><rect x="116" y="191" width="1" height="6" fill="#5a5a5a"/><rect x="120" y="196" width="1" height="14" fill="#000000"/><rect x="119" y="196" width="3" height="14" fill="#000000"/><rect x="120" y="197" width="1" height="12" fill="#5a5a5a"/><rect x="124" y="206" width="1" height="19" fill="#000000"/><rect x="123" y="208" width="3" height="17" fill="#000000"/><rect x="124" y="209" width="1" height="15" fill="#5a5a5a"/><rect x="128" y="197" width="1" height="33" fill="#2f4f4f"/><rect x="127" y="203" width="3" height="21" fill="#2f4f4f"/><rect x="128" y="204" width="1" height="19" fill="#f0e088"/><rect x="132" y="201" width="1" height="10" fill="#000000"/><rect x="131" y="204" width="3" height="6" fill="#000000"/><rect x="132" y="205" width="1" height="4" fill="#5a5a5a"/><rect x="136" y="184" width="1" height="26" fill="#2f4f4f"/><rect x="135" y="191" width="3" height="18" fill="#2f4f4f"/><rect x="136" y="192" width="1" height="16" fill="#f0e088"/><rect x="140" y="181" width="1" height="17" fill="#000000"/><rect x="139" y="190" width="3" height="8" fill="#000000"/><rect x="140" y="191" width="1" height="6" fill="#5a5a5a"/><rect x="144" y="184" width="1" height="18" fill="#2f4f4f"/><rect x="143" y="191" width="3" height="5" fill="#2f4f4f"/><rect x="144" y="192" width="1" height="3" fill="#f0e088"/><rect x="148" y="187" width="1" height="21" fill="#000000"/><rect x="147" y="191" width="3" height="16" fill="#000000"/><rect x="148" y="192" width="1" height="14" fill="#5a5a5a"/><rect x="152" y="194" width="1" height="13" fill="#2f4f4f"/><rect x="151" y="197" width="3" height="9" fill="#2f4f4f"/><rect x="152" y="198" width="1" height="7" fill="#f0e088"/><rect x="156" y="177" width="1" height="21" fill="#2f4f4f"/><rect x="155" y="188" width="3" height="9" fill="#2f4f4f"/><rect x="156" y="189" width="1" height="7" fill="#f0e088"/><rect x="160" y="182" width="1" height="19" fill="#000000"/><rect x="159" y="183" width="3" height="17" fill="#000000"/><rect x="160" y="184" width="1" height="15" fill="#5a5a5a"/><rect x="164" y="186" width="1" height="19" fill="#000000"/><rect x="163" y="195" width="3" height="1" fill="#000000"/><rect x="168" y="170" width="1" height="28" fill="#000000"/><rect x="167" y="187" width="3" height="11" fill="#000000"/><rect x="168" y="188" width="1" height="9" fill="#5a5a5a"/><rect x="172" y="189" width="1" height="13" fill="#000000"/><rect x="171" y="195" width="3" height="3" fill="#000000"/><rect x="172" y="196" width="1" height="1" fill="#5a5a5a"/><rect x="176" y="187" width="1" height="15" fill="#2f4f4f"/><rect x="175" y="191" width="3" height="7" fill="#2f4f4f"/><rect x="176" y="192" width="1" height="5" fill="#f0e088"/><rect x="180" y="169" width="1" height="28" fill="#2f4f4f"/><rect x="179" y="173" width="3" height="18" fill="#2f4f4f"/><rect x="180" y="174" width="1" height="16" fill="#f0e088"/><rect x="184" y="162" width="1" height="22" fill="#000000"/><rect x="183" y="173" width="3" height="10" fill="#000000"/><rect x="184" y="174" width="1" height="8" fill="#5a5a5a"/><rect x="188" y="158" width="1" height="26" fill="#2f4f4f"/><rect x="187" y="159" width="3" height="23" fill="#2f4f4f"/><rect x="188" y="160" width="1" height="21" fill="#f0e088"/><rect x="192" y="151" width="1" height="20" fill="#000000"/><rect x="191" y="159" width="3" height="12" fill="#000000"/><rect x="192" y="160" width="1" height="10" fill="#5a5a5a"/><rect x="196" y="156" width="1" height="15" fill="#2f4f4f"/><rect x="195" y="169" width="3" height="1" fill="#2f4f4f"/><rect x="200" y="167" width="1" height="10" fill="#2f4f4f"/><rect x="199" y="172" width="3" height="1" fill="#2f4f4f"/><rect x="204" y="160" width="1" height="18" fill="#000000"/><rect x="203" y="167" width="3" height="5" fill="#000000"/><rect x="204" y="168" width="1" height="3" fill="#5a5a5a"/><rect x="208" y="167" width="1" height="11" fill="#000000"/><rect x="207" y="171" width="3" height="4" fill="#000000"/><rect x="208" y="172" width="1" height="2" fill="#5a5a5a"/><rect x="212" y="160" width="1" height="18" fill="#2f4f4f"/><rect x="211" y="164" width="3" height="10" fill="#2f4f4f"/><rect x="212" y="165" width="1" height="8" fill="#f0e088"/><rect x="216" y="163" width="1" height="11" fill="#000000"/><rect x="215" y="163" width="3" height="9" fill="#000000"/><rect x="216" y="164" width="1" height="7" fill="#5a5a5a"/><rect x="220" y="155" width="1" height="17" fill="#2f4f4f"/><rect x="219" y="159" width="3" height="12" fill="#2f4f4f"/><rect x="220" y="160" width="1" height="10" fill="#f0e088"/><rect x="224" y="156" width="1" height="9" fill="#000000"/><rect x="223" y="160" width="3" height="1" fill="#000000"/><rect x="228" y="156" width="1" height="3" fill="#2f4f4f"/><rect x="227" y="157" width="3" height="1" fill="#2f4f4f"/><rect x="232" y="148" width="1" height="10" fill="#000000"/><rect x="231" y="152" width="3" height="1" fill="#000000"/><rect x="236" y="149" width="1" height="12" fill="#2f4f4f"/><rect x="235" y="151" width="3" height="6" fill="#2f4f4f"/><rect x="236" y="152" width="1" height="4" fill="#f0e088"/><rect x="240" y="148" width="1" height="19" fill="#000000"/><rect x="239" y="152" width="3" height="15" fill="#000000"/><rect x="240" y="153" width="1" height="13" fill="#5a5a5a"/><rect x="244" y="159" width="1" height="12" fill="#000000"/><rect x="243" y="165" width="3" height="1" fill="#000000"/><rect x="248" y="166" width="1" height="4" fill="#000000"/><rect x="247" y="167" width="3" height="1" fill="#000000"/><rect x="252" y="165" width="1" height="9" fill="#000000"/><rect x="251" y="169" width="3" height="1" fill="#000000"/><rect x="256" y="167" width="1" height="7" fill="#000000"/><rect x="255" y="170" width="3" height="1" fill="#000000"/><rect x="260" y="166" width="1" height="6" fill="#000000"/><rect x="259" y="169" width="3" height="1" fill="#000000"/><rect x="264" y="150" width="1" height="21" fill="#2f4f4f"/><rect x="263" y="159" width="3" height="12" fill="#2f4f4f"/><rect x="264" y="160" width="1" height="10" fill="#f0e088"/><rect x="268" y="157" width="1" height="11" fill="#000000"/><rect x="267" y="162" width="3" height="1" fill="#000000"/><rect x="272" y="148" width="1" height="23" fill="#2f4f4f"/><rect x="271" y="149" width="3" height="12" fill="#2f4f4f"/><rect x="272" y="150" width="1" height="10" fill="#f0e088"/><rect x="276" y="148" width="1" height="13" fill="#000000"/><rect x="275" y="149" width="3" height="9" fill="#000000"/><rect x="276" y="150" width="1" height="7" fill="#5a5a5a"/><rect x="280" y="145" width="1" height="13" fill="#2f4f4f"/><rect x="279" y="151" width="3" height="6" fill="#2f4f4f"/><rect x="280" y="152" width="1" height="4" fill="#f0e088"/><rect x="284" y="148" width="1" height="13" fill="#000000"/><rect x="283" y="154" width="3" height="1" fill="#000000"/><rect x="288" y="151" width="1" height="10" fill="#000000"/><rect x="287" y="151" width="3" height="10" fill="#000000"/><rect x="288" y="152" width="1" height="8" fill="#5a5a5a"/><rect x="292" y="160" width="1" height="14" fill="#000000"/><rect x="291" y="160" width="3" height="11" fill="#000000"/><rect x="292" y="161" width="1" height="9" fill="#5a5a5a"/><rect x="296" y="167" width="1" height="7" fill="#000000"/><rect x="295" y="170" width="3" height="1" fill="#000000"/><rect x="300" y="158" width="1" height="13" fill="#2f4f4f"/><rect x="299" y="160" width="3" height="11" fill="#2f4f4f"/><rect x="300" y="161" width="1" height="9" fill="#f0e088"/><rect x="304" y="159" width="1" height="11" fill="#000000"/><rect x="303" y="160" width="3" height="6" fill="#000000"/><rect x="304" y="161" width="1" height="4" fill="#5a5a5a"/><rect x="308" y="163" width="1" height="19" fill="#000000"/><rect x="307" y="164" width="3" height="17" fill="#000000"/><rect x="308" y="165" width="1" height="15" fill="#5a5a5a"/><rect x="312" y="172" width="1" height="15" fill="#2f4f4f"/><rect x="311" y="175" width="3" height="6" fill="#2f4f4f"/><rect x="312" y="176" width="1" height="4" fill="#f0e088"/><rect x="316" y="174" width="1" height="7" fill="#000000"/><rect x="315" y="177" width="3" height="1" fill="#000000"/><rect x="320" y="176" width="1" height="6" fill="#000000"/><rect x="319" y="178" width="3" height="1" fill="#000000"/><rect x="324" y="172" width="1" height="11" fill="#2f4f4f"/><rect x="323" y="175" width="3" height="6" fill="#2f4f4f"/><rect x="324" y="176" width="1" height="4" fill="#f0e088"/><rect x="328" y="170" width="1" height="11" fill="#2f4f4f"/><rect x="327" y="171" width="3" height="7" fill="#2f4f4f"/><rect x="328" y="172" width="1" height="5" fill="#f0e088"/><rect x="332" y="156" width="1" height="19" fill="#2f4f4f"/><rect x="331" y="167" width="3" height="7" fill="#2f4f4f"/><rect x="332" y="168" width="1" height="5" fill="#f0e088"/><rect x="336" y="163" width="1" height="7" fill="#000000"/><rect x="335" y="166" width="3" height="1" fill="#000000"/><rect x="340" y="162" width="1" height="12" fill="#000000"/><rect x="339" y="166" width="3" height="7" fill="#000000"/><rect x="340" y="167" width="1" height="5" fill="#5a5a5a"/><rect x="344" y="164" width="1" height="19" fill="#000000"/><rect x="343" y="172" width="3" height="6" fill="#000000"/><rect x="344" y="173" width="1" height="4" fill="#5a5a5a"/><rect x="348" y="176" width="1" height="28" fill="#000000"/><rect x="347" y="176" width="3" height="27" fill="#000000"/><rect x="348" y="177" width="1" height="25" fill="#5a5a5a"/><rect x="352" y="199" width="1" height="27" fill="#000000"/><rect x="351" y="200" width="3" height="10" fill="#000000"/><rect x="352" y="201" width="1" height="8" fill="#5a5a5a"/><rect x="356" y="207" width="1" height="26" fill="#000000"/><rect x="355" y="208" width="3" height="20" fill="#000000"/><rect x="356" y="209" width="1" height="18" fill="#5a5a5a"/><rect x="360" y="201" width="1" height="27" fill="#2f4f4f"/><rect x="359" y="207" width="3" height="21" fill="#2f4f4f"/><rect x="360" y="208" width="1" height="19" fill="#f0e088"/><rect x="364" y="195" width="1" height="15" fill="#000000"/><rect x="363" y="202" width="3" height="1" fill="#000000"/><rect x="368" y="197" width="1" height="14" fill="#2f4f4f"/><rect x="367" y="199" width="3" height="9" fill="#2f4f4f"/><rect x="368" y="200" width="1" height="7" fill="#f0e088"/><rect x="372" y="189" width="1" height="26" fill="#000000"/><rect x="371" y="199" width="3" height="16" fill="#000000"/><rect x="372" y="200" width="1" height="14" fill="#5a5a5a"/><rect x="376" y="172" width="1" height="58" fill="#2f4f4f"/><rect x="375" y="176" width="3" height="39" fill="#2f4f4f"/><rect x="376" y="177" width="1" height="37" fill="#f0e088"/><rect x="380" y="166" width="1" height="20" fill="#2f4f4f"/><rect x="379" y="172" width="3" height="5" fill="#2f4f4f"/><rect x="380" y="173" width="1" height="3" fill="#f0e088"/><rect x="384" y="156" width="1" height="19" fill="#2f4f4f"/><rect x="383" y="161" width="3" height="13" fill="#2f4f4f"/><rect x="384" y="162" width="1" height="11" fill="#f0e088"/><rect x="388" y="158" width="1" height="35" fill="#000000"/><rect x="387" y="161" width="3" height="24" fill="#000000"/><rect x="388" y="162" width="1" height="22" fill="#5a5a5a"/><rect x="392" y="160" width="1" height="40" fill="#2f4f4f"/><rect x="391" y="170" width="3" height="14" fill="#2f4f4f"/><rect x="392" y="171" width="1" height="12" fill="#f0e088"/><rect x="396" y="161" width="1" height="44" fill="#000000"/><rect x="395" y="171" width="3" height="29" fill="#000000"/><rect x="396" y="172" width="1" height="27" fill="#5a5a5a"/><rect x="400" y="161" width="1" height="38" fill="#2f4f4f"/><rect x="399" y="163" width="3" height="35" fill="#2f4f4f"/><rect x="400" y="164" width="1" height="33" fill="#f0e088"/><rect x="404" y="162" width="1" height="23" fill="#000000"/><rect x="403" y="163" width="3" height="22" fill="#000000"/><rect x="404" y="164" width="1" height="20" fill="#5a5a5a"/><rect x="408" y="182" width="1" height="20" fill="#000000"/><rect x="407" y="184" width="3" height="17" fill="#000000"/><rect x="408" y="185" width="1" height="15" fill="#5a5a5a"/><rect x="412" y="189" width="1" height="27" fill="#000000"/><rect x="411" y="198" width="3" height="17" fill="#000000"/><rect x="412" y="199" width="1" height="15" fill="#5a5a5a"/><rect x="416" y="204" width="1" height="22" fill="#000000"/><rect x="415" y="213" width="3" height="10" fill="#000000"/><rect x="416" y="214" width="1" height="8" fill="#5a5a5a"/><rect x="420" y="215" width="1" height="105" fill="#000000"/><rect x="419" y="222" width="3" height="63" fill="#000000"/><rect x="420" y="223" width="1" height="61" fill="#5a5a5a"/><rect x="424" y="272" width="1" height="23" fill="#000000"/><rect x="423" y="284" width="3" height="6" fill="#000000"/><rect x="424" y="285" width="1" height="4" fill="#5a5a5a"/><rect x="428" y="289" width="1" height="51" fill="#000000"/><rect x="427" y="289" width="3" height="26" fill="#000000"/><rect x="428" y="290" width="1" height="24" fill="#5a5a5a"/><rect x="432" y="305" width="1" height="28" fill="#2f4f4f"/><rect x="431" y="310" width="3" height="4" fill="#2f4f4f"/><rect x="432" y="311" width="1" height="2" fill="#f0e088"/><rect x="436" y="287" width="1" height="31" fill="#2f4f4f"/><rect x="435" y="288" width="3" height="25" fill="#2f4f4f"/><rect x="436" y="289" width="1" height="23" fill="#f0e088"/><rect x="440" y="286" width="1" height="11" fill="#000000"/><rect x="439" y="291" width="3" height="1" fill="#000000"/></svg>
<div style="left:11px;top:132px;width:550px;height:1px;background:#000;"></div>
<div style="left:11px;top:345px;width:550px;height:1px;background:#000;"></div>
<div style="left:11px;top:132px;width:1px;height:213px;background:#000;"></div>
<div style="left:560px;top:132px;width:1px;height:213px;background:#000;"></div>
<svg style="left:15px;top:138px" width="8" height="6"><path d="M0,0 H7 L3.5,5 Z" fill="#000"/></svg>
<span class="t" style="left:27.50px;top:136.08px;font-family:'Liberation Sans', sans-serif;font-size:9.8px;line-height:9.8px;color:#000;font-weight:normal;transform:scaleX(0.9467);transform-origin:0 0;-webkit-text-stroke:0.08px currentColor;">EURUSDf,M5  1.18785 1.18792 1.18771 1.18784</span>
<svg style="left:444px;top:133px" width="9" height="5"><path d="M0,0 H8 L4,4 Z" fill="#a0a0a0"/></svg>
<span class="t" style="left:441.80px;top:137.08px;font-family:'Liberation Sans', sans-serif;font-size:9.8px;line-height:9.8px;color:#000;font-weight:normal;transform:scaleX(0.9207);transform-origin:0 0;-webkit-text-stroke:0.08px currentColor;">Volume_Scalping_Ea_fix</span>
<svg style="left:542px;top:134px" width="14" height="14"><circle cx="7.5" cy="7" r="5.3" fill="none" stroke="#000" stroke-width="1.1"/><rect x="5.2" y="4.6" width="1.2" height="1.6" fill="#000"/><rect x="8.6" y="4.6" width="1.2" height="1.6" fill="#000"/><path d="M4.6,7.8 Q7.5,11.2 10.4,7.8" fill="none" stroke="#000" stroke-width="1.1"/></svg>
<div style="left:561px;top:140px;width:3px;height:1px;background:#000;"></div>
<span class="t" style="left:566.40px;top:136.28px;font-family:'Liberation Sans', sans-serif;font-size:9.8px;line-height:9.8px;color:#000;font-weight:normal;transform:scaleX(0.9398);transform-origin:0 0;-webkit-text-stroke:0.12px currentColor;">1.19115</span>
<div style="left:561px;top:174px;width:3px;height:1px;background:#000;"></div>
<span class="t" style="left:566.40px;top:170.18px;font-family:'Liberation Sans', sans-serif;font-size:9.8px;line-height:9.8px;color:#000;font-weight:normal;transform:scaleX(0.9203);transform-origin:0 0;-webkit-text-stroke:0.12px currentColor;">1.19040</span>
<div style="left:561px;top:208px;width:3px;height:1px;background:#000;"></div>
<span class="t" style="left:566.40px;top:204.28px;font-family:'Liberation Sans', sans-serif;font-size:9.8px;line-height:9.8px;color:#000;font-weight:normal;transform:scaleX(0.9203);transform-origin:0 0;-webkit-text-stroke:0.12px currentColor;">1.18965</span>
<div style="left:561px;top:241px;width:3px;height:1px;background:#000;"></div>
<span class="t" style="left:566.40px;top:237.08px;font-family:'Liberation Sans', sans-serif;font-size:9.8px;line-height:9.8px;color:#000;font-weight:normal;transform:scaleX(0.9203);transform-origin:0 0;-webkit-text-stroke:0.12px currentColor;">1.18890</span>
<div style="left:561px;top:274px;width:3px;height:1px;background:#000;"></div>
<span class="t" style="left:566.40px;top:270.48px;font-family:'Liberation Sans', sans-serif;font-size:9.8px;line-height:9.8px;color:#000;font-weight:normal;transform:scaleX(0.9203);transform-origin:0 0;-webkit-text-stroke:0.12px currentColor;">1.18815</span>
<div style="left:561px;top:309px;width:3px;height:1px;background:#000;"></div>
<span class="t" style="left:566.40px;top:304.98px;font-family:'Liberation Sans', sans-serif;font-size:9.8px;line-height:9.8px;color:#000;font-weight:normal;transform:scaleX(0.9203);transform-origin:0 0;-webkit-text-stroke:0.12px currentColor;">1.18740</span>
<div style="left:561px;top:341px;width:3px;height:1px;background:#000;"></div>
<span class="t" style="left:566.40px;top:337.38px;font-family:'Liberation Sans', sans-serif;font-size:9.8px;line-height:9.8px;color:#000;font-weight:normal;transform:scaleX(0.9203);transform-origin:0 0;-webkit-text-stroke:0.12px currentColor;">1.18665</span>
<div style="left:562px;top:278px;width:41px;height:10px;background:#ff4a10;"></div>
<span class="t" style="left:566.40px;top:279.08px;font-family:'Liberation Sans', sans-serif;font-size:9.8px;line-height:9.8px;color:#fff;font-weight:normal;transform:scaleX(0.9203);transform-origin:0 0;-webkit-text-stroke:0.05px currentColor;">1.18797</span>
<div style="left:562px;top:284px;width:41px;height:10px;background:#000;"></div>
<span class="t" style="left:566.40px;top:284.98px;font-family:'Liberation Sans', sans-serif;font-size:9.8px;line-height:9.8px;color:#fff;font-weight:normal;transform:scaleX(0.9203);transform-origin:0 0;-webkit-text-stroke:0.05px currentColor;">1.18784</span>
<div style="left:12px;top:345px;width:1px;height:4px;background:#000;"></div>
<span class="t" style="left:11.20px;top:350.22px;font-family:'Liberation Sans', sans-serif;font-size:9.5px;line-height:9.5px;color:#000;font-weight:normal;transform:scaleX(0.9566);transform-origin:0 0;-webkit-text-stroke:0.12px currentColor;">5 Sep 2017</span>
<div style="left:76px;top:345px;width:1px;height:4px;background:#000;"></div>
<span class="t" style="left:75.20px;top:350.22px;font-family:'Liberation Sans', sans-serif;font-size:9.5px;line-height:9.5px;color:#000;font-weight:normal;transform:scaleX(0.9620);transform-origin:0 0;-webkit-text-stroke:0.12px currentColor;">5 Sep 03:25</span>
<div style="left:140px;top:345px;width:1px;height:4px;background:#000;"></div>
<span class="t" style="left:139.20px;top:350.22px;font-family:'Liberation Sans', sans-serif;font-size:9.5px;line-height:9.5px;color:#000;font-weight:normal;transform:scaleX(0.9756);transform-origin:0 0;-webkit-text-stroke:0.12px currentColor;">5 Sep 04:45</span>
<div style="left:204px;top:345px;width:1px;height:4px;background:#000;"></div>
<span class="t" style="left:203.20px;top:350.22px;font-family:'Liberation Sans', sans-serif;font-size:9.5px;line-height:9.5px;color:#000;font-weight:normal;transform:scaleX(0.9756);transform-origin:0 0;-webkit-text-stroke:0.12px currentColor;">5 Sep 06:05</span>
<div style="left:268px;top:345px;width:1px;height:4px;background:#000;"></div>
<span class="t" style="left:267.20px;top:350.22px;font-family:'Liberation Sans', sans-serif;font-size:9.5px;line-height:9.5px;color:#000;font-weight:normal;transform:scaleX(0.9756);transform-origin:0 0;-webkit-text-stroke:0.12px currentColor;">5 Sep 07:25</span>
<div style="left:332px;top:345px;width:1px;height:4px;background:#000;"></div>
<span class="t" style="left:331.20px;top:350.22px;font-family:'Liberation Sans', sans-serif;font-size:9.5px;line-height:9.5px;color:#000;font-weight:normal;transform:scaleX(0.9561);transform-origin:0 0;-webkit-text-stroke:0.12px currentColor;">5 Sep 08:45</span>
<div style="left:396px;top:345px;width:1px;height:4px;background:#000;"></div>
<span class="t" style="left:395.20px;top:350.22px;font-family:'Liberation Sans', sans-serif;font-size:9.5px;line-height:9.5px;color:#000;font-weight:normal;transform:scaleX(0.9659);transform-origin:0 0;-webkit-text-stroke:0.12px currentColor;">5 Sep 10:05</span>
<div style="left:-1px;top:375px;width:614px;height:279px;box-sizing:border-box;border:1px solid #3e3e3e;background:linear-gradient(#c0cee0 0px,#d0dcea 28px,#d9e4f0 40px,#dae5f1 100%);border-radius:7px 7px 0 0;box-shadow:inset 1px 1px 0 #eef4fa, inset -1px 0 0 #eef4fa;"></div>
<svg style="left:10px;top:387px" width="15" height="15"><rect x="0.6" y="0.6" width="10.4" height="8.4" fill="#fff" stroke="#3c7cf4" stroke-width="1.2"/><path d="M2.2,4.5 L3.5,3 M4.5,3 L7,5 L9,4.5" fill="none" stroke="#3c7cf4" stroke-width="1"/><rect x="3.6" y="5.6" width="10.4" height="8.4" fill="#fff" stroke="#3c7cf4" stroke-width="1.2"/><path d="M5.5,8.5 L7.5,11.5 L9,8.5 L10.5,11 L12,9.5" fill="none" stroke="#3c7cf4" stroke-width="1"/></svg>
<span class="t" style="left:29.20px;top:388.97px;font-family:'Liberation Sans', sans-serif;font-size:12.5px;line-height:12.5px;color:#2a2e36;font-weight:normal;transform:scaleX(0.8728);transform-origin:0 0;">GBPUSDf,M5</span>
<div style="left:506px;top:386px;width:31px;height:17px;box-sizing:border-box;border:1px solid #7d8ba3;border-radius:3px;background:linear-gradient(#dbe4ef,#c7d3e2);box-shadow:inset 0 0 0 1px rgba(255,255,255,0.45);"></div>
<svg style="left:506px;top:386px" width="31" height="17"><rect x="10.0" y="8.0" width="11" height="4.5" rx="1.5" fill="#fff" stroke="#3c4250" stroke-width="1.2"/></svg>
<div style="left:539px;top:386px;width:31px;height:17px;box-sizing:border-box;border:1px solid #7d8ba3;border-radius:3px;background:linear-gradient(#dbe4ef,#c7d3e2);box-shadow:inset 0 0 0 1px rgba(255,255,255,0.45);"></div>
<svg style="left:539px;top:386px" width="31" height="17"><rect x="10.5" y="4.0" width="10" height="8.5" rx="1.5" fill="#fff" stroke="#3c4250" stroke-width="1.3"/><rect x="13.3" y="6.7" width="4.4" height="2.8" fill="#3c4250"/></svg>
<div style="left:572px;top:386px;width:31px;height:17px;box-sizing:border-box;border:1px solid #7d8ba3;border-radius:3px;background:linear-gradient(#dbe4ef,#c7d3e2);box-shadow:inset 0 0 0 1px rgba(255,255,255,0.45);"></div>
<svg style="left:572px;top:386px" width="31" height="17"><path d="M11.9,5.9 L19.1,11.3 M19.1,5.9 L11.9,11.3" stroke="#2e3240" stroke-width="4.6" stroke-linecap="round"/><path d="M11.9,5.9 L19.1,11.3 M19.1,5.9 L11.9,11.3" stroke="#fff" stroke-width="2.4" stroke-linecap="round"/></svg>
<div style="left:7px;top:406px;width:598px;height:239px;background:#fff;"></div>
<div style="left:7px;top:406px;width:597px;height:1px;background:#6a6a6a;"></div>
<div style="left:7px;top:407px;width:596px;height:1px;background:#a0a0a0;"></div>
<div style="left:7px;top:406px;width:1px;height:238px;background:#6a6a6a;"></div>
<div style="left:8px;top:407px;width:1px;height:237px;background:#a0a0a0;"></div>
<div style="left:9px;top:408px;width:594px;height:236px;background:#fffbea;"></div>
<div style="left:12px;top:523px;width:548px;height:1px;background:#ff4a10;"></div>
<div style="left:12px;top:536px;width:548px;height:1px;background:#c0c0c0;"></div>
<div style="left:14px;top:411px;width:255px;height:192px;background:#008080;"></div>
<div style="left:19px;top:411px;width:1px;height:185px;background:#b8e8e8;"></div>
<div style="left:19px;top:596px;width:250px;height:1px;background:#b8e8e8;"></div>
<div style="left:268px;top:411px;width:1px;height:185px;background:#b8e8e8;"></div>
<span class="t" style="left:28.40px;top:429.63px;font-family:'Liberation Sans', sans-serif;font-size:12.6px;line-height:12.6px;color:#00f4f4;font-weight:normal;transform:scaleX(1.0892);transform-origin:0 0;-webkit-text-stroke:0.05px currentColor;">TerminalMonitor ON, 69ms, ~28ms</span>
<span class="t" style="left:28.40px;top:448.53px;font-family:'Liberation Sans', sans-serif;font-size:12.6px;line-height:12.6px;color:#f2f2e8;font-weight:normal;transform:scaleX(1.0124);transform-origin:0 0;-webkit-text-stroke:0.05px currentColor;">Symbol: GBPUSDf</span>
<span class="t" style="left:28.40px;top:467.33px;font-family:'Liberation Sans', sans-serif;font-size:12.6px;line-height:12.6px;color:#f2f2e8;font-weight:normal;transform:scaleX(1.0334);transform-origin:0 0;-webkit-text-stroke:0.05px currentColor;">Spread: 1.8</span>
<span class="t" style="left:28.40px;top:486.23px;font-family:'Liberation Sans', sans-serif;font-size:12.6px;line-height:12.6px;color:#f2f2e8;font-weight:normal;transform:scaleX(1.0320);transform-origin:0 0;-webkit-text-stroke:0.05px currentColor;">Lot: 0.14</span>
<span class="t" style="left:28.40px;top:505.33px;font-family:'Liberation Sans', sans-serif;font-size:12.6px;line-height:12.6px;color:#f2f2e8;font-weight:normal;transform:scaleX(1.0356);transform-origin:0 0;-webkit-text-stroke:0.05px currentColor;">Leverage: 500</span>
<span class="t" style="left:28.40px;top:524.93px;font-family:'Liberation Sans', sans-serif;font-size:12.6px;line-height:12.6px;color:#f2f2e8;font-weight:normal;transform:scaleX(1.1081);transform-origin:0 0;-webkit-text-stroke:0.05px currentColor;">VolumeOrderFlow: 1.50</span>
<span class="t" style="left:28.40px;top:544.33px;font-family:'Liberation Sans', sans-serif;font-size:12.6px;line-height:12.6px;color:#00f000;font-weight:normal;transform:scaleX(1.1005);transform-origin:0 0;-webkit-text-stroke:0.05px currentColor;">Work Demo Version</span>
<span class="t" style="left:50.30px;top:563.13px;font-family:'Liberation Sans', sans-serif;font-size:12.6px;line-height:12.6px;color:#00b4f4;font-weight:normal;transform:scaleX(1.0576);transform-origin:0 0;-webkit-text-stroke:0.05px currentColor;">Volume Scalping EA</span>
<span class="t" style="left:50.30px;top:581.93px;font-family:'Liberation Sans', sans-serif;font-size:12.6px;line-height:12.6px;color:#f2f2e8;font-weight:normal;transform:scaleX(1.1180);transform-origin:0 0;-webkit-text-stroke:0.05px currentColor;">Support: info@forex-ea.com</span>
<svg style="left:0px;top:0px" width="1275" height="986" shape-rendering="crispEdges"><rect x="12" y="504" width="1" height="12" fill="#000000"/><rect x="11" y="504" width="3" height="12" fill="#000000"/><rect x="12" y="505" width="1" height="10" fill="#5a5a5a"/><rect x="16" y="508" width="1" height="9" fill="#000000"/><rect x="15" y="509" width="3" height="7" fill="#000000"/><rect x="16" y="510" width="1" height="5" fill="#5a5a5a"/><rect x="20" y="516" width="1" height="13" fill="#000000"/><rect x="19" y="516" width="3" height="13" fill="#000000"/><rect x="20" y="517" width="1" height="11" fill="#5a5a5a"/><rect x="24" y="525" width="1" height="10" fill="#000000"/><rect x="23" y="527" width="3" height="7" fill="#000000"/><rect x="24" y="528" width="1" height="5" fill="#5a5a5a"/><rect x="28" y="530" width="1" height="6" fill="#000000"/><rect x="27" y="533" width="3" height="1" fill="#000000"/><rect x="32" y="519" width="1" height="10" fill="#2f4f4f"/><rect x="31" y="523" width="3" height="5" fill="#2f4f4f"/><rect x="32" y="524" width="1" height="3" fill="#f0e088"/><rect x="36" y="516" width="1" height="10" fill="#000000"/><rect x="35" y="521" width="3" height="3" fill="#000000"/><rect x="36" y="522" width="1" height="1" fill="#5a5a5a"/><rect x="40" y="519" width="1" height="16" fill="#000000"/><rect x="39" y="524" width="3" height="10" fill="#000000"/><rect x="40" y="525" width="1" height="8" fill="#5a5a5a"/><rect x="44" y="532" width="1" height="13" fill="#000000"/><rect x="43" y="532" width="3" height="5" fill="#000000"/><rect x="44" y="533" width="1" height="3" fill="#5a5a5a"/><rect x="48" y="533" width="1" height="16" fill="#000000"/><rect x="47" y="540" width="3" height="1" fill="#000000"/><rect x="52" y="527" width="1" height="12" fill="#2f4f4f"/><rect x="51" y="533" width="3" height="1" fill="#2f4f4f"/><rect x="56" y="525" width="1" height="21" fill="#2f4f4f"/><rect x="55" y="533" width="3" height="3" fill="#2f4f4f"/><rect x="56" y="534" width="1" height="1" fill="#f0e088"/><rect x="60" y="506" width="1" height="27" fill="#2f4f4f"/><rect x="59" y="515" width="3" height="18" fill="#2f4f4f"/><rect x="60" y="516" width="1" height="16" fill="#f0e088"/><rect x="64" y="505" width="1" height="19" fill="#000000"/><rect x="63" y="514" width="3" height="3" fill="#000000"/><rect x="64" y="515" width="1" height="1" fill="#5a5a5a"/><rect x="68" y="512" width="1" height="18" fill="#000000"/><rect x="67" y="512" width="3" height="15" fill="#000000"/><rect x="68" y="513" width="1" height="13" fill="#5a5a5a"/><rect x="72" y="516" width="1" height="11" fill="#2f4f4f"/><rect x="71" y="519" width="3" height="8" fill="#2f4f4f"/><rect x="72" y="520" width="1" height="6" fill="#f0e088"/><rect x="76" y="517" width="1" height="19" fill="#000000"/><rect x="75" y="518" width="3" height="17" fill="#000000"/><rect x="76" y="519" width="1" height="15" fill="#5a5a5a"/><rect x="80" y="526" width="1" height="7" fill="#2f4f4f"/><rect x="79" y="526" width="3" height="7" fill="#2f4f4f"/><rect x="80" y="527" width="1" height="5" fill="#f0e088"/><rect x="84" y="521" width="1" height="13" fill="#000000"/><rect x="83" y="528" width="3" height="5" fill="#000000"/><rect x="84" y="529" width="1" height="3" fill="#5a5a5a"/><rect x="88" y="531" width="1" height="5" fill="#000000"/><rect x="87" y="532" width="3" height="3" fill="#000000"/><rect x="88" y="533" width="1" height="1" fill="#5a5a5a"/><rect x="92" y="530" width="1" height="4" fill="#2f4f4f"/><rect x="91" y="531" width="3" height="1" fill="#2f4f4f"/><rect x="96" y="528" width="1" height="18" fill="#000000"/><rect x="95" y="532" width="3" height="7" fill="#000000"/><rect x="96" y="533" width="1" height="5" fill="#5a5a5a"/><rect x="100" y="520" width="1" height="29" fill="#2f4f4f"/><rect x="99" y="525" width="3" height="15" fill="#2f4f4f"/><rect x="100" y="526" width="1" height="13" fill="#f0e088"/><rect x="104" y="520" width="1" height="22" fill="#2f4f4f"/><rect x="103" y="521" width="3" height="5" fill="#2f4f4f"/><rect x="104" y="522" width="1" height="3" fill="#f0e088"/><rect x="108" y="518" width="1" height="21" fill="#000000"/><rect x="107" y="521" width="3" height="14" fill="#000000"/><rect x="108" y="522" width="1" height="12" fill="#5a5a5a"/><rect x="112" y="521" width="1" height="15" fill="#2f4f4f"/><rect x="111" y="521" width="3" height="14" fill="#2f4f4f"/><rect x="112" y="522" width="1" height="12" fill="#f0e088"/><rect x="116" y="512" width="1" height="23" fill="#000000"/><rect x="115" y="523" width="3" height="11" fill="#000000"/><rect x="116" y="524" width="1" height="9" fill="#5a5a5a"/><rect x="120" y="530" width="1" height="8" fill="#000000"/><rect x="119" y="533" width="3" height="3" fill="#000000"/><rect x="120" y="534" width="1" height="1" fill="#5a5a5a"/><rect x="124" y="526" width="1" height="30" fill="#000000"/><rect x="123" y="534" width="3" height="21" fill="#000000"/><rect x="124" y="535" width="1" height="19" fill="#5a5a5a"/><rect x="128" y="533" width="1" height="23" fill="#2f4f4f"/><rect x="127" y="534" width="3" height="21" fill="#2f4f4f"/><rect x="128" y="535" width="1" height="19" fill="#f0e088"/><rect x="132" y="534" width="1" height="3" fill="#2f4f4f"/><rect x="131" y="535" width="3" height="1" fill="#2f4f4f"/><rect x="136" y="505" width="1" height="30" fill="#2f4f4f"/><rect x="135" y="507" width="3" height="28" fill="#2f4f4f"/><rect x="136" y="508" width="1" height="26" fill="#f0e088"/><rect x="140" y="498" width="1" height="24" fill="#000000"/><rect x="139" y="506" width="3" height="16" fill="#000000"/><rect x="140" y="507" width="1" height="14" fill="#5a5a5a"/><rect x="144" y="518" width="1" height="18" fill="#000000"/><rect x="143" y="521" width="3" height="8" fill="#000000"/><rect x="144" y="522" width="1" height="6" fill="#5a5a5a"/><rect x="148" y="512" width="1" height="18" fill="#000000"/><rect x="147" y="521" width="3" height="1" fill="#000000"/><rect x="152" y="522" width="1" height="8" fill="#000000"/><rect x="151" y="525" width="3" height="1" fill="#000000"/><rect x="156" y="514" width="1" height="16" fill="#2f4f4f"/><rect x="155" y="517" width="3" height="12" fill="#2f4f4f"/><rect x="156" y="518" width="1" height="10" fill="#f0e088"/><rect x="160" y="512" width="1" height="10" fill="#2f4f4f"/><rect x="159" y="517" width="3" height="1" fill="#2f4f4f"/><rect x="164" y="514" width="1" height="34" fill="#000000"/><rect x="163" y="514" width="3" height="18" fill="#000000"/><rect x="164" y="515" width="1" height="16" fill="#5a5a5a"/><rect x="168" y="516" width="1" height="20" fill="#2f4f4f"/><rect x="167" y="525" width="3" height="1" fill="#2f4f4f"/><rect x="172" y="520" width="1" height="16" fill="#000000"/><rect x="171" y="531" width="3" height="3" fill="#000000"/><rect x="172" y="532" width="1" height="1" fill="#5a5a5a"/><rect x="176" y="524" width="1" height="27" fill="#000000"/><rect x="175" y="534" width="3" height="14" fill="#000000"/><rect x="176" y="535" width="1" height="12" fill="#5a5a5a"/><rect x="180" y="523" width="1" height="27" fill="#2f4f4f"/><rect x="179" y="525" width="3" height="22" fill="#2f4f4f"/><rect x="180" y="526" width="1" height="20" fill="#f0e088"/><rect x="184" y="518" width="1" height="14" fill="#2f4f4f"/><rect x="183" y="525" width="3" height="1" fill="#2f4f4f"/><rect x="188" y="512" width="1" height="18" fill="#2f4f4f"/><rect x="187" y="515" width="3" height="10" fill="#2f4f4f"/><rect x="188" y="516" width="1" height="8" fill="#f0e088"/><rect x="192" y="508" width="1" height="8" fill="#2f4f4f"/><rect x="191" y="512" width="3" height="4" fill="#2f4f4f"/><rect x="192" y="513" width="1" height="2" fill="#f0e088"/><rect x="196" y="509" width="1" height="7" fill="#000000"/><rect x="195" y="512" width="3" height="3" fill="#000000"/><rect x="196" y="513" width="1" height="1" fill="#5a5a5a"/><rect x="200" y="511" width="1" height="9" fill="#000000"/><rect x="199" y="513" width="3" height="3" fill="#000000"/><rect x="200" y="514" width="1" height="1" fill="#5a5a5a"/><rect x="204" y="513" width="1" height="9" fill="#2f4f4f"/><rect x="203" y="517" width="3" height="1" fill="#2f4f4f"/><rect x="208" y="494" width="1" height="28" fill="#2f4f4f"/><rect x="207" y="499" width="3" height="15" fill="#2f4f4f"/><rect x="208" y="500" width="1" height="13" fill="#f0e088"/><rect x="212" y="474" width="1" height="37" fill="#2f4f4f"/><rect x="211" y="485" width="3" height="17" fill="#2f4f4f"/><rect x="212" y="486" width="1" height="15" fill="#f0e088"/><rect x="216" y="483" width="1" height="8" fill="#000000"/><rect x="215" y="484" width="3" height="3" fill="#000000"/><rect x="216" y="485" width="1" height="1" fill="#5a5a5a"/><rect x="220" y="477" width="1" height="16" fill="#2f4f4f"/><rect x="219" y="480" width="3" height="6" fill="#2f4f4f"/><rect x="220" y="481" width="1" height="4" fill="#f0e088"/><rect x="224" y="470" width="1" height="11" fill="#2f4f4f"/><rect x="223" y="475" width="3" height="5" fill="#2f4f4f"/><rect x="224" y="476" width="1" height="3" fill="#f0e088"/><rect x="228" y="471" width="1" height="6" fill="#2f4f4f"/><rect x="227" y="474" width="3" height="1" fill="#2f4f4f"/><rect x="232" y="468" width="1" height="9" fill="#000000"/><rect x="231" y="473" width="3" height="4" fill="#000000"/><rect x="232" y="474" width="1" height="2" fill="#5a5a5a"/><rect x="236" y="466" width="1" height="23" fill="#000000"/><rect x="235" y="475" width="3" height="10" fill="#000000"/><rect x="236" y="476" width="1" height="8" fill="#5a5a5a"/><rect x="240" y="472" width="1" height="16" fill="#2f4f4f"/><rect x="239" y="487" width="3" height="1" fill="#2f4f4f"/><rect x="244" y="479" width="1" height="11" fill="#000000"/><rect x="243" y="483" width="3" height="5" fill="#000000"/><rect x="244" y="484" width="1" height="3" fill="#5a5a5a"/><rect x="248" y="485" width="1" height="34" fill="#000000"/><rect x="247" y="485" width="3" height="26" fill="#000000"/><rect x="248" y="486" width="1" height="24" fill="#5a5a5a"/><rect x="252" y="493" width="1" height="17" fill="#2f4f4f"/><rect x="251" y="495" width="3" height="15" fill="#2f4f4f"/><rect x="252" y="496" width="1" height="13" fill="#f0e088"/><rect x="256" y="493" width="1" height="10" fill="#000000"/><rect x="255" y="495" width="3" height="6" fill="#000000"/><rect x="256" y="496" width="1" height="4" fill="#5a5a5a"/><rect x="260" y="484" width="1" height="18" fill="#2f4f4f"/><rect x="259" y="485" width="3" height="16" fill="#2f4f4f"/><rect x="260" y="486" width="1" height="14" fill="#f0e088"/><rect x="264" y="464" width="1" height="23" fill="#2f4f4f"/><rect x="263" y="466" width="3" height="20" fill="#2f4f4f"/><rect x="264" y="467" width="1" height="18" fill="#f0e088"/><rect x="268" y="458" width="1" height="11" fill="#2f4f4f"/><rect x="267" y="459" width="3" height="9" fill="#2f4f4f"/><rect x="268" y="460" width="1" height="7" fill="#f0e088"/><rect x="272" y="460" width="1" height="31" fill="#000000"/><rect x="271" y="462" width="3" height="10" fill="#000000"/><rect x="272" y="463" width="1" height="8" fill="#5a5a5a"/><rect x="276" y="454" width="1" height="25" fill="#2f4f4f"/><rect x="275" y="459" width="3" height="15" fill="#2f4f4f"/><rect x="276" y="460" width="1" height="13" fill="#f0e088"/><rect x="280" y="438" width="1" height="25" fill="#2f4f4f"/><rect x="279" y="439" width="3" height="21" fill="#2f4f4f"/><rect x="280" y="440" width="1" height="19" fill="#f0e088"/><rect x="284" y="425" width="1" height="39" fill="#000000"/><rect x="283" y="439" width="3" height="18" fill="#000000"/><rect x="284" y="440" width="1" height="16" fill="#5a5a5a"/><rect x="288" y="452" width="1" height="11" fill="#000000"/><rect x="287" y="456" width="3" height="7" fill="#000000"/><rect x="288" y="457" width="1" height="5" fill="#5a5a5a"/><rect x="292" y="461" width="1" height="10" fill="#000000"/><rect x="291" y="461" width="3" height="8" fill="#000000"/><rect x="292" y="462" width="1" height="6" fill="#5a5a5a"/><rect x="296" y="460" width="1" height="11" fill="#000000"/><rect x="295" y="468" width="3" height="3" fill="#000000"/><rect x="296" y="469" width="1" height="1" fill="#5a5a5a"/><rect x="300" y="454" width="1" height="23" fill="#2f4f4f"/><rect x="299" y="458" width="3" height="13" fill="#2f4f4f"/><rect x="300" y="459" width="1" height="11" fill="#f0e088"/><rect x="304" y="451" width="1" height="12" fill="#000000"/><rect x="303" y="457" width="3" height="1" fill="#000000"/><rect x="308" y="458" width="1" height="19" fill="#000000"/><rect x="307" y="459" width="3" height="17" fill="#000000"/><rect x="308" y="460" width="1" height="15" fill="#5a5a5a"/><rect x="312" y="472" width="1" height="32" fill="#000000"/><rect x="311" y="475" width="3" height="22" fill="#000000"/><rect x="312" y="476" width="1" height="20" fill="#5a5a5a"/><rect x="316" y="490" width="1" height="14" fill="#000000"/><rect x="315" y="495" width="3" height="7" fill="#000000"/><rect x="316" y="496" width="1" height="5" fill="#5a5a5a"/><rect x="320" y="489" width="1" height="24" fill="#2f4f4f"/><rect x="319" y="491" width="3" height="11" fill="#2f4f4f"/><rect x="320" y="492" width="1" height="9" fill="#f0e088"/><rect x="324" y="491" width="1" height="26" fill="#000000"/><rect x="323" y="491" width="3" height="26" fill="#000000"/><rect x="324" y="492" width="1" height="24" fill="#5a5a5a"/><rect x="328" y="504" width="1" height="13" fill="#2f4f4f"/><rect x="327" y="508" width="3" height="8" fill="#2f4f4f"/><rect x="328" y="509" width="1" height="6" fill="#f0e088"/><rect x="332" y="491" width="1" height="21" fill="#2f4f4f"/><rect x="331" y="505" width="3" height="5" fill="#2f4f4f"/><rect x="332" y="506" width="1" height="3" fill="#f0e088"/><rect x="336" y="498" width="1" height="17" fill="#000000"/><rect x="335" y="505" width="3" height="3" fill="#000000"/><rect x="336" y="506" width="1" height="1" fill="#5a5a5a"/><rect x="340" y="499" width="1" height="21" fill="#000000"/><rect x="339" y="506" width="3" height="5" fill="#000000"/><rect x="340" y="507" width="1" height="3" fill="#5a5a5a"/><rect x="344" y="493" width="1" height="21" fill="#2f4f4f"/><rect x="343" y="502" width="3" height="10" fill="#2f4f4f"/><rect x="344" y="503" width="1" height="8" fill="#f0e088"/><rect x="348" y="502" width="1" height="18" fill="#000000"/><rect x="347" y="502" width="3" height="18" fill="#000000"/><rect x="348" y="503" width="1" height="16" fill="#5a5a5a"/><rect x="352" y="516" width="1" height="18" fill="#000000"/><rect x="351" y="519" width="3" height="8" fill="#000000"/><rect x="352" y="520" width="1" height="6" fill="#5a5a5a"/><rect x="356" y="520" width="1" height="39" fill="#000000"/><rect x="355" y="525" width="3" height="24" fill="#000000"/><rect x="356" y="526" width="1" height="22" fill="#5a5a5a"/><rect x="360" y="531" width="1" height="30" fill="#000000"/><rect x="359" y="547" width="3" height="6" fill="#000000"/><rect x="360" y="548" width="1" height="4" fill="#5a5a5a"/><rect x="364" y="535" width="1" height="32" fill="#000000"/><rect x="363" y="551" width="3" height="13" fill="#000000"/><rect x="364" y="552" width="1" height="11" fill="#5a5a5a"/><rect x="368" y="554" width="1" height="28" fill="#000000"/><rect x="367" y="562" width="3" height="20" fill="#000000"/><rect x="368" y="563" width="1" height="18" fill="#5a5a5a"/><rect x="372" y="553" width="1" height="30" fill="#2f4f4f"/><rect x="371" y="555" width="3" height="28" fill="#2f4f4f"/><rect x="372" y="556" width="1" height="26" fill="#f0e088"/><rect x="376" y="506" width="1" height="55" fill="#2f4f4f"/><rect x="375" y="520" width="3" height="36" fill="#2f4f4f"/><rect x="376" y="521" width="1" height="34" fill="#f0e088"/><rect x="380" y="479" width="1" height="50" fill="#2f4f4f"/><rect x="379" y="493" width="3" height="28" fill="#2f4f4f"/><rect x="380" y="494" width="1" height="26" fill="#f0e088"/><rect x="384" y="472" width="1" height="23" fill="#2f4f4f"/><rect x="383" y="487" width="3" height="7" fill="#2f4f4f"/><rect x="384" y="488" width="1" height="5" fill="#f0e088"/><rect x="388" y="485" width="1" height="39" fill="#000000"/><rect x="387" y="487" width="3" height="15" fill="#000000"/><rect x="388" y="488" width="1" height="13" fill="#5a5a5a"/><rect x="392" y="433" width="1" height="69" fill="#2f4f4f"/><rect x="391" y="434" width="3" height="68" fill="#2f4f4f"/><rect x="392" y="435" width="1" height="66" fill="#f0e088"/><rect x="396" y="434" width="1" height="41" fill="#000000"/><rect x="395" y="435" width="3" height="27" fill="#000000"/><rect x="396" y="436" width="1" height="25" fill="#5a5a5a"/><rect x="400" y="441" width="1" height="40" fill="#000000"/><rect x="399" y="458" width="3" height="10" fill="#000000"/><rect x="400" y="459" width="1" height="8" fill="#5a5a5a"/><rect x="404" y="435" width="1" height="39" fill="#000000"/><rect x="403" y="466" width="3" height="8" fill="#000000"/><rect x="404" y="467" width="1" height="6" fill="#5a5a5a"/><rect x="408" y="469" width="1" height="34" fill="#000000"/><rect x="407" y="469" width="3" height="34" fill="#000000"/><rect x="408" y="470" width="1" height="32" fill="#5a5a5a"/><rect x="412" y="460" width="1" height="42" fill="#2f4f4f"/><rect x="411" y="469" width="3" height="33" fill="#2f4f4f"/><rect x="412" y="470" width="1" height="31" fill="#f0e088"/><rect x="416" y="434" width="1" height="36" fill="#2f4f4f"/><rect x="415" y="448" width="3" height="22" fill="#2f4f4f"/><rect x="416" y="449" width="1" height="20" fill="#f0e088"/><rect x="420" y="447" width="1" height="45" fill="#000000"/><rect x="419" y="449" width="3" height="29" fill="#000000"/><rect x="420" y="450" width="1" height="27" fill="#5a5a5a"/><rect x="424" y="466" width="1" height="110" fill="#000000"/><rect x="423" y="477" width="3" height="70" fill="#000000"/><rect x="424" y="478" width="1" height="68" fill="#5a5a5a"/><rect x="428" y="543" width="1" height="60" fill="#000000"/><rect x="427" y="544" width="3" height="58" fill="#000000"/><rect x="428" y="545" width="1" height="56" fill="#5a5a5a"/><rect x="432" y="565" width="1" height="48" fill="#2f4f4f"/><rect x="431" y="570" width="3" height="31" fill="#2f4f4f"/><rect x="432" y="571" width="1" height="29" fill="#f0e088"/><rect x="436" y="528" width="1" height="59" fill="#2f4f4f"/><rect x="435" y="535" width="3" height="36" fill="#2f4f4f"/><rect x="436" y="536" width="1" height="34" fill="#f0e088"/><rect x="440" y="524" width="1" height="23" fill="#000000"/><rect x="439" y="534" width="3" height="3" fill="#000000"/><rect x="440" y="535" width="1" height="1" fill="#5a5a5a"/></svg>
<div style="left:11px;top:410px;width:550px;height:1px;background:#000;"></div>
<div style="left:11px;top:623px;width:550px;height:1px;background:#000;"></div>
<div style="left:11px;top:410px;width:1px;height:213px;background:#000;"></div>
<div style="left:560px;top:410px;width:1px;height:213px;background:#000;"></div>
<svg style="left:15px;top:416px" width="8" height="6"><path d="M0,0 H7 L3.5,5 Z" fill="#000"/></svg>
<span class="t" style="left:27.50px;top:414.08px;font-family:'Liberation Sans', sans-serif;font-size:9.8px;line-height:9.8px;color:#000;font-weight:normal;transform:scaleX(0.9467);transform-origin:0 0;-webkit-text-stroke:0.08px currentColor;">GBPUSDf,M5  1.29216 1.29230 1.29197 1.29212</span>
<svg style="left:444px;top:411px" width="9" height="5"><path d="M0,0 H8 L4,4 Z" fill="#a0a0a0"/></svg>
<span class="t" style="left:441.80px;top:415.08px;font-family:'Liberation Sans', sans-serif;font-size:9.8px;line-height:9.8px;color:#000;font-weight:normal;transform:scaleX(0.9207);transform-origin:0 0;-webkit-text-stroke:0.08px currentColor;">Volume_Scalping_Ea_fix</span>
<svg style="left:542px;top:412px" width="14" height="14"><circle cx="7.5" cy="7" r="5.3" fill="none" stroke="#000" stroke-width="1.1"/><rect x="5.2" y="4.6" width="1.2" height="1.6" fill="#000"/><rect x="8.6" y="4.6" width="1.2" height="1.6" fill="#000"/><path d="M4.6,7.8 Q7.5,11.2 10.4,7.8" fill="none" stroke="#000" stroke-width="1.1"/></svg>
<div style="left:561px;top:420px;width:3px;height:1px;background:#000;"></div>
<span class="t" style="left:566.40px;top:416.28px;font-family:'Liberation Sans', sans-serif;font-size:9.8px;line-height:9.8px;color:#000;font-weight:normal;transform:scaleX(0.9203);transform-origin:0 0;-webkit-text-stroke:0.12px currentColor;">1.29385</span>
<div style="left:561px;top:454px;width:3px;height:1px;background:#000;"></div>
<span class="t" style="left:566.40px;top:450.18px;font-family:'Liberation Sans', sans-serif;font-size:9.8px;line-height:9.8px;color:#000;font-weight:normal;transform:scaleX(0.9203);transform-origin:0 0;-webkit-text-stroke:0.12px currentColor;">1.29335</span>
<div style="left:561px;top:487px;width:3px;height:1px;background:#000;"></div>
<span class="t" style="left:566.40px;top:482.98px;font-family:'Liberation Sans', sans-serif;font-size:9.8px;line-height:9.8px;color:#000;font-weight:normal;transform:scaleX(0.9203);transform-origin:0 0;-webkit-text-stroke:0.12px currentColor;">1.29285</span>
<div style="left:561px;top:520px;width:3px;height:1px;background:#000;"></div>
<span class="t" style="left:566.40px;top:516.18px;font-family:'Liberation Sans', sans-serif;font-size:9.8px;line-height:9.8px;color:#000;font-weight:normal;transform:scaleX(0.9203);transform-origin:0 0;-webkit-text-stroke:0.12px currentColor;">1.29235</span>
<div style="left:561px;top:553px;width:3px;height:1px;background:#000;"></div>
<span class="t" style="left:566.40px;top:548.68px;font-family:'Liberation Sans', sans-serif;font-size:9.8px;line-height:9.8px;color:#000;font-weight:normal;transform:scaleX(0.9203);transform-origin:0 0;-webkit-text-stroke:0.12px currentColor;">1.29185</span>
<div style="left:561px;top:586px;width:3px;height:1px;background:#000;"></div>
<span class="t" style="left:566.40px;top:582.08px;font-family:'Liberation Sans', sans-serif;font-size:9.8px;line-height:9.8px;color:#000;font-weight:normal;transform:scaleX(0.9203);transform-origin:0 0;-webkit-text-stroke:0.12px currentColor;">1.29135</span>
<div style="left:561px;top:619px;width:3px;height:1px;background:#000;"></div>
<span class="t" style="left:566.40px;top:615.38px;font-family:'Liberation Sans', sans-serif;font-size:9.8px;line-height:9.8px;color:#000;font-weight:normal;transform:scaleX(0.9203);transform-origin:0 0;-webkit-text-stroke:0.12px currentColor;">1.29085</span>
<div style="left:562px;top:518px;width:41px;height:10px;background:#ff4a10;"></div>
<span class="t" style="left:566.40px;top:518.98px;font-family:'Liberation Sans', sans-serif;font-size:9.8px;line-height:9.8px;color:#fff;font-weight:normal;transform:scaleX(0.9203);transform-origin:0 0;-webkit-text-stroke:0.05px currentColor;">1.29231</span>
<div style="left:562px;top:531px;width:41px;height:10px;background:#000;"></div>
<span class="t" style="left:566.40px;top:531.18px;font-family:'Liberation Sans', sans-serif;font-size:9.8px;line-height:9.8px;color:#fff;font-weight:normal;transform:scaleX(0.9203);transform-origin:0 0;-webkit-text-stroke:0.05px currentColor;">1.29212</span>
<div style="left:12px;top:623px;width:1px;height:4px;background:#000;"></div>
<span class="t" style="left:11.20px;top:628.22px;font-family:'Liberation Sans', sans-serif;font-size:9.5px;line-height:9.5px;color:#000;font-weight:normal;transform:scaleX(0.9566);transform-origin:0 0;-webkit-text-stroke:0.12px currentColor;">5 Sep 2017</span>
<div style="left:76px;top:623px;width:1px;height:4px;background:#000;"></div>
<span class="t" style="left:75.20px;top:628.22px;font-family:'Liberation Sans', sans-serif;font-size:9.5px;line-height:9.5px;color:#000;font-weight:normal;transform:scaleX(0.9620);transform-origin:0 0;-webkit-text-stroke:0.12px currentColor;">5 Sep 03:25</span>
<div style="left:140px;top:623px;width:1px;height:4px;background:#000;"></div>
<span class="t" style="left:139.20px;top:628.22px;font-family:'Liberation Sans', sans-serif;font-size:9.5px;line-height:9.5px;color:#000;font-weight:normal;transform:scaleX(0.9756);transform-origin:0 0;-webkit-text-stroke:0.12px currentColor;">5 Sep 04:45</span>
<div style="left:204px;top:623px;width:1px;height:4px;background:#000;"></div>
<span class="t" style="left:203.20px;top:628.22px;font-family:'Liberation Sans', sans-serif;font-size:9.5px;line-height:9.5px;color:#000;font-weight:normal;transform:scaleX(0.9756);transform-origin:0 0;-webkit-text-stroke:0.12px currentColor;">5 Sep 06:05</span>
<div style="left:268px;top:623px;width:1px;height:4px;background:#000;"></div>
<span class="t" style="left:267.20px;top:628.22px;font-family:'Liberation Sans', sans-serif;font-size:9.5px;line-height:9.5px;color:#000;font-weight:normal;transform:scaleX(0.9756);transform-origin:0 0;-webkit-text-stroke:0.12px currentColor;">5 Sep 07:25</span>
<div style="left:332px;top:623px;width:1px;height:4px;background:#000;"></div>
<span class="t" style="left:331.20px;top:628.22px;font-family:'Liberation Sans', sans-serif;font-size:9.5px;line-height:9.5px;color:#000;font-weight:normal;transform:scaleX(0.9561);transform-origin:0 0;-webkit-text-stroke:0.12px currentColor;">5 Sep 08:45</span>
<div style="left:396px;top:623px;width:1px;height:4px;background:#000;"></div>
<span class="t" style="left:395.20px;top:628.22px;font-family:'Liberation Sans', sans-serif;font-size:9.5px;line-height:9.5px;color:#000;font-weight:normal;transform:scaleX(0.9659);transform-origin:0 0;-webkit-text-stroke:0.12px currentColor;">5 Sep 10:05</span>
<div style="left:613px;top:97px;width:614px;height:186px;box-sizing:border-box;border:1px solid #3e3e3e;background:linear-gradient(#c0cee0 0px,#d0dcea 28px,#d9e4f0 40px,#dae5f1 100%);border-radius:7px 7px 0 0;box-shadow:inset 1px 1px 0 #eef4fa, inset -1px 0 0 #eef4fa;"></div>
<svg style="left:624px;top:109px" width="15" height="15"><rect x="0.6" y="0.6" width="10.4" height="8.4" fill="#fff" stroke="#3c7cf4" stroke-width="1.2"/><path d="M2.2,4.5 L3.5,3 M4.5,3 L7,5 L9,4.5" fill="none" stroke="#3c7cf4" stroke-width="1"/><rect x="3.6" y="5.6" width="10.4" height="8.4" fill="#fff" stroke="#3c7cf4" stroke-width="1.2"/><path d="M5.5,8.5 L7.5,11.5 L9,8.5 L10.5,11 L12,9.5" fill="none" stroke="#3c7cf4" stroke-width="1"/></svg>
<span class="t" style="left:643.20px;top:110.98px;font-family:'Liberation Sans', sans-serif;font-size:12.5px;line-height:12.5px;color:#2a2e36;font-weight:normal;transform:scaleX(0.8582);transform-origin:0 0;">USDJPYf,M5</span>
<div style="left:1120px;top:108px;width:31px;height:17px;box-sizing:border-box;border:1px solid #7d8ba3;border-radius:3px;background:linear-gradient(#dbe4ef,#c7d3e2);box-shadow:inset 0 0 0 1px rgba(255,255,255,0.45);"></div>
<svg style="left:1120px;top:108px" width="31" height="17"><rect x="10.0" y="8.0" width="11" height="4.5" rx="1.5" fill="#fff" stroke="#3c4250" stroke-width="1.2"/></svg>
<div style="left:1153px;top:108px;width:31px;height:17px;box-sizing:border-box;border:1px solid #7d8ba3;border-radius:3px;background:linear-gradient(#dbe4ef,#c7d3e2);box-shadow:inset 0 0 0 1px rgba(255,255,255,0.45);"></div>
<svg style="left:1153px;top:108px" width="31" height="17"><rect x="10.5" y="4.0" width="10" height="8.5" rx="1.5" fill="#fff" stroke="#3c4250" stroke-width="1.3"/><rect x="13.3" y="6.7" width="4.4" height="2.8" fill="#3c4250"/></svg>
<div style="left:1186px;top:108px;width:31px;height:17px;box-sizing:border-box;border:1px solid #7d8ba3;border-radius:3px;background:linear-gradient(#dbe4ef,#c7d3e2);box-shadow:inset 0 0 0 1px rgba(255,255,255,0.45);"></div>
<svg style="left:1186px;top:108px" width="31" height="17"><path d="M11.9,5.9 L19.1,11.3 M19.1,5.9 L11.9,11.3" stroke="#2e3240" stroke-width="4.6" stroke-linecap="round"/><path d="M11.9,5.9 L19.1,11.3 M19.1,5.9 L11.9,11.3" stroke="#fff" stroke-width="2.4" stroke-linecap="round"/></svg>
<div style="left:621px;top:128px;width:598px;height:146px;background:#fff;"></div>
<div style="left:621px;top:128px;width:597px;height:1px;background:#6a6a6a;"></div>
<div style="left:621px;top:129px;width:596px;height:1px;background:#a0a0a0;"></div>
<div style="left:621px;top:128px;width:1px;height:145px;background:#6a6a6a;"></div>
<div style="left:622px;top:129px;width:1px;height:144px;background:#a0a0a0;"></div>
<div style="left:623px;top:130px;width:594px;height:143px;background:#fffbea;"></div>
<div style="left:626px;top:208px;width:548px;height:1px;background:#c0c0c0;"></div>
<div style="left:628px;top:133px;width:255px;height:99px;background:#008080;"></div>
<div style="left:633px;top:133px;width:1px;height:92px;background:#b8e8e8;"></div>
<div style="left:633px;top:225px;width:250px;height:1px;background:#b8e8e8;"></div>
<div style="left:882px;top:133px;width:1px;height:92px;background:#b8e8e8;"></div>
<span class="t" style="left:642.60px;top:135.33px;font-family:'Liberation Sans', sans-serif;font-size:12.6px;line-height:12.6px;color:#f2f2e8;font-weight:normal;transform:scaleX(1.0356);transform-origin:0 0;-webkit-text-stroke:0.05px currentColor;">Leverage: 500</span>
<span class="t" style="left:642.60px;top:153.83px;font-family:'Liberation Sans', sans-serif;font-size:12.6px;line-height:12.6px;color:#f2f2e8;font-weight:normal;transform:scaleX(1.1081);transform-origin:0 0;-webkit-text-stroke:0.05px currentColor;">VolumeOrderFlow: 1.50</span>
<span class="t" style="left:642.60px;top:172.33px;font-family:'Liberation Sans', sans-serif;font-size:12.6px;line-height:12.6px;color:#00f000;font-weight:normal;transform:scaleX(1.1005);transform-origin:0 0;-webkit-text-stroke:0.05px currentColor;">Work Demo Version</span>
<span class="t" style="left:664.50px;top:191.33px;font-family:'Liberation Sans', sans-serif;font-size:12.6px;line-height:12.6px;color:#00b4f4;font-weight:normal;transform:scaleX(1.0576);transform-origin:0 0;-webkit-text-stroke:0.05px currentColor;">Volume Scalping EA</span>
<span class="t" style="left:664.50px;top:210.63px;font-family:'Liberation Sans', sans-serif;font-size:12.6px;line-height:12.6px;color:#f2f2e8;font-weight:normal;transform:scaleX(1.1180);transform-origin:0 0;-webkit-text-stroke:0.05px currentColor;">Support: info@forex-ea.com</span>
<svg style="left:0px;top:0px" width="1275" height="986" shape-rendering="crispEdges"><rect x="626" y="164" width="1" height="3" fill="#2f4f4f"/><rect x="625" y="164" width="3" height="3" fill="#2f4f4f"/><rect x="626" y="165" width="1" height="1" fill="#f0e088"/><rect x="630" y="163" width="1" height="4" fill="#2f4f4f"/><rect x="629" y="165" width="3" height="1" fill="#2f4f4f"/><rect x="634" y="159" width="1" height="7" fill="#2f4f4f"/><rect x="633" y="160" width="3" height="5" fill="#2f4f4f"/><rect x="634" y="161" width="1" height="3" fill="#f0e088"/><rect x="638" y="154" width="1" height="5" fill="#2f4f4f"/><rect x="637" y="154" width="3" height="5" fill="#2f4f4f"/><rect x="638" y="155" width="1" height="3" fill="#f0e088"/><rect x="642" y="151" width="1" height="5" fill="#2f4f4f"/><rect x="641" y="153" width="3" height="1" fill="#2f4f4f"/><rect x="646" y="148" width="1" height="9" fill="#000000"/><rect x="645" y="152" width="3" height="3" fill="#000000"/><rect x="646" y="153" width="1" height="1" fill="#5a5a5a"/><rect x="650" y="148" width="1" height="8" fill="#2f4f4f"/><rect x="649" y="149" width="3" height="6" fill="#2f4f4f"/><rect x="650" y="150" width="1" height="4" fill="#f0e088"/><rect x="654" y="145" width="1" height="5" fill="#000000"/><rect x="653" y="146" width="3" height="3" fill="#000000"/><rect x="654" y="147" width="1" height="1" fill="#5a5a5a"/><rect x="658" y="142" width="1" height="7" fill="#2f4f4f"/><rect x="657" y="142" width="3" height="7" fill="#2f4f4f"/><rect x="658" y="143" width="1" height="5" fill="#f0e088"/><rect x="662" y="140" width="1" height="7" fill="#000000"/><rect x="661" y="140" width="3" height="7" fill="#000000"/><rect x="662" y="141" width="1" height="5" fill="#5a5a5a"/><rect x="666" y="140" width="1" height="7" fill="#2f4f4f"/><rect x="665" y="143" width="3" height="1" fill="#2f4f4f"/><rect x="670" y="144" width="1" height="12" fill="#000000"/><rect x="669" y="144" width="3" height="12" fill="#000000"/><rect x="670" y="145" width="1" height="10" fill="#5a5a5a"/><rect x="674" y="154" width="1" height="8" fill="#000000"/><rect x="673" y="155" width="3" height="6" fill="#000000"/><rect x="674" y="156" width="1" height="4" fill="#5a5a5a"/><rect x="678" y="155" width="1" height="5" fill="#2f4f4f"/><rect x="677" y="157" width="3" height="1" fill="#2f4f4f"/><rect x="682" y="154" width="1" height="5" fill="#2f4f4f"/><rect x="681" y="156" width="3" height="1" fill="#2f4f4f"/><rect x="686" y="154" width="1" height="13" fill="#000000"/><rect x="685" y="155" width="3" height="6" fill="#000000"/><rect x="686" y="156" width="1" height="4" fill="#5a5a5a"/><rect x="690" y="158" width="1" height="5" fill="#000000"/><rect x="689" y="159" width="3" height="4" fill="#000000"/><rect x="690" y="160" width="1" height="2" fill="#5a5a5a"/><rect x="694" y="155" width="1" height="14" fill="#2f4f4f"/><rect x="693" y="158" width="3" height="4" fill="#2f4f4f"/><rect x="694" y="159" width="1" height="2" fill="#f0e088"/><rect x="698" y="154" width="1" height="7" fill="#2f4f4f"/><rect x="697" y="155" width="3" height="5" fill="#2f4f4f"/><rect x="698" y="156" width="1" height="3" fill="#f0e088"/><rect x="702" y="154" width="1" height="3" fill="#2f4f4f"/><rect x="701" y="155" width="3" height="1" fill="#2f4f4f"/><rect x="706" y="154" width="1" height="4" fill="#000000"/><rect x="705" y="156" width="3" height="1" fill="#000000"/><rect x="710" y="155" width="1" height="18" fill="#000000"/><rect x="709" y="156" width="3" height="17" fill="#000000"/><rect x="710" y="157" width="1" height="15" fill="#5a5a5a"/><rect x="714" y="169" width="1" height="20" fill="#000000"/><rect x="713" y="172" width="3" height="14" fill="#000000"/><rect x="714" y="173" width="1" height="12" fill="#5a5a5a"/><rect x="718" y="185" width="1" height="17" fill="#000000"/><rect x="717" y="185" width="3" height="14" fill="#000000"/><rect x="718" y="186" width="1" height="12" fill="#5a5a5a"/><rect x="722" y="191" width="1" height="9" fill="#2f4f4f"/><rect x="721" y="192" width="3" height="7" fill="#2f4f4f"/><rect x="722" y="193" width="1" height="5" fill="#f0e088"/><rect x="726" y="189" width="1" height="7" fill="#2f4f4f"/><rect x="725" y="192" width="3" height="1" fill="#2f4f4f"/><rect x="730" y="187" width="1" height="9" fill="#2f4f4f"/><rect x="729" y="188" width="3" height="4" fill="#2f4f4f"/><rect x="730" y="189" width="1" height="2" fill="#f0e088"/><rect x="734" y="184" width="1" height="6" fill="#2f4f4f"/><rect x="733" y="185" width="3" height="4" fill="#2f4f4f"/><rect x="734" y="186" width="1" height="2" fill="#f0e088"/><rect x="738" y="182" width="1" height="8" fill="#2f4f4f"/><rect x="737" y="184" width="3" height="3" fill="#2f4f4f"/><rect x="738" y="185" width="1" height="1" fill="#f0e088"/><rect x="742" y="184" width="1" height="6" fill="#000000"/><rect x="741" y="184" width="3" height="4" fill="#000000"/><rect x="742" y="185" width="1" height="2" fill="#5a5a5a"/><rect x="746" y="185" width="1" height="6" fill="#000000"/><rect x="745" y="187" width="3" height="3" fill="#000000"/><rect x="746" y="188" width="1" height="1" fill="#5a5a5a"/><rect x="750" y="187" width="1" height="18" fill="#000000"/><rect x="749" y="187" width="3" height="12" fill="#000000"/><rect x="750" y="188" width="1" height="10" fill="#5a5a5a"/><rect x="754" y="191" width="1" height="9" fill="#2f4f4f"/><rect x="753" y="194" width="3" height="5" fill="#2f4f4f"/><rect x="754" y="195" width="1" height="3" fill="#f0e088"/><rect x="758" y="193" width="1" height="7" fill="#000000"/><rect x="757" y="194" width="3" height="3" fill="#000000"/><rect x="758" y="195" width="1" height="1" fill="#5a5a5a"/><rect x="762" y="190" width="1" height="7" fill="#2f4f4f"/><rect x="761" y="191" width="3" height="5" fill="#2f4f4f"/><rect x="762" y="192" width="1" height="3" fill="#f0e088"/><rect x="766" y="189" width="1" height="5" fill="#2f4f4f"/><rect x="765" y="191" width="3" height="1" fill="#2f4f4f"/><rect x="770" y="189" width="1" height="11" fill="#000000"/><rect x="769" y="190" width="3" height="7" fill="#000000"/><rect x="770" y="191" width="1" height="5" fill="#5a5a5a"/><rect x="774" y="195" width="1" height="10" fill="#000000"/><rect x="773" y="195" width="3" height="10" fill="#000000"/><rect x="774" y="196" width="1" height="8" fill="#5a5a5a"/><rect x="778" y="198" width="1" height="46" fill="#000000"/><rect x="777" y="204" width="3" height="28" fill="#000000"/><rect x="778" y="205" width="1" height="26" fill="#5a5a5a"/><rect x="782" y="224" width="1" height="13" fill="#2f4f4f"/><rect x="781" y="225" width="3" height="7" fill="#2f4f4f"/><rect x="782" y="226" width="1" height="5" fill="#f0e088"/><rect x="786" y="223" width="1" height="9" fill="#2f4f4f"/><rect x="785" y="227" width="3" height="1" fill="#2f4f4f"/><rect x="790" y="222" width="1" height="13" fill="#000000"/><rect x="789" y="222" width="3" height="7" fill="#000000"/><rect x="790" y="223" width="1" height="5" fill="#5a5a5a"/><rect x="794" y="221" width="1" height="8" fill="#2f4f4f"/><rect x="793" y="222" width="3" height="7" fill="#2f4f4f"/><rect x="794" y="223" width="1" height="5" fill="#f0e088"/><rect x="798" y="221" width="1" height="9" fill="#000000"/><rect x="797" y="222" width="3" height="7" fill="#000000"/><rect x="798" y="223" width="1" height="5" fill="#5a5a5a"/><rect x="802" y="227" width="1" height="9" fill="#000000"/><rect x="801" y="228" width="3" height="4" fill="#000000"/><rect x="802" y="229" width="1" height="2" fill="#5a5a5a"/><rect x="806" y="222" width="1" height="10" fill="#2f4f4f"/><rect x="805" y="225" width="3" height="7" fill="#2f4f4f"/><rect x="806" y="226" width="1" height="5" fill="#f0e088"/><rect x="810" y="225" width="1" height="5" fill="#000000"/><rect x="809" y="225" width="3" height="3" fill="#000000"/><rect x="810" y="226" width="1" height="1" fill="#5a5a5a"/><rect x="814" y="224" width="1" height="9" fill="#000000"/><rect x="813" y="227" width="3" height="3" fill="#000000"/><rect x="814" y="228" width="1" height="1" fill="#5a5a5a"/><rect x="818" y="225" width="1" height="8" fill="#000000"/><rect x="817" y="228" width="3" height="5" fill="#000000"/><rect x="818" y="229" width="1" height="3" fill="#5a5a5a"/><rect x="822" y="231" width="1" height="11" fill="#000000"/><rect x="821" y="234" width="3" height="3" fill="#000000"/><rect x="822" y="235" width="1" height="1" fill="#5a5a5a"/><rect x="826" y="234" width="1" height="11" fill="#000000"/><rect x="825" y="236" width="3" height="9" fill="#000000"/><rect x="826" y="237" width="1" height="7" fill="#5a5a5a"/><rect x="830" y="239" width="1" height="7" fill="#2f4f4f"/><rect x="829" y="241" width="3" height="4" fill="#2f4f4f"/><rect x="830" y="242" width="1" height="2" fill="#f0e088"/><rect x="834" y="241" width="1" height="9" fill="#000000"/><rect x="833" y="241" width="3" height="3" fill="#000000"/><rect x="834" y="242" width="1" height="1" fill="#5a5a5a"/><rect x="838" y="239" width="1" height="10" fill="#2f4f4f"/><rect x="837" y="240" width="3" height="5" fill="#2f4f4f"/><rect x="838" y="241" width="1" height="3" fill="#f0e088"/><rect x="842" y="238" width="1" height="5" fill="#000000"/><rect x="841" y="239" width="3" height="4" fill="#000000"/><rect x="842" y="240" width="1" height="2" fill="#5a5a5a"/><rect x="846" y="238" width="1" height="5" fill="#2f4f4f"/><rect x="845" y="238" width="3" height="5" fill="#2f4f4f"/><rect x="846" y="239" width="1" height="3" fill="#f0e088"/><rect x="850" y="238" width="1" height="5" fill="#000000"/><rect x="849" y="238" width="3" height="5" fill="#000000"/><rect x="850" y="239" width="1" height="3" fill="#5a5a5a"/><rect x="854" y="234" width="1" height="9" fill="#2f4f4f"/><rect x="853" y="236" width="3" height="7" fill="#2f4f4f"/><rect x="854" y="237" width="1" height="5" fill="#f0e088"/><rect x="858" y="235" width="1" height="5" fill="#000000"/><rect x="857" y="237" width="3" height="1" fill="#000000"/><rect x="862" y="236" width="1" height="3" fill="#2f4f4f"/><rect x="861" y="237" width="3" height="1" fill="#2f4f4f"/><rect x="866" y="231" width="1" height="8" fill="#2f4f4f"/><rect x="865" y="232" width="3" height="7" fill="#2f4f4f"/><rect x="866" y="233" width="1" height="5" fill="#f0e088"/><rect x="870" y="227" width="1" height="6" fill="#2f4f4f"/><rect x="869" y="229" width="3" height="1" fill="#2f4f4f"/><rect x="874" y="228" width="1" height="4" fill="#2f4f4f"/><rect x="873" y="229" width="3" height="1" fill="#2f4f4f"/><rect x="878" y="227" width="1" height="9" fill="#000000"/><rect x="877" y="228" width="3" height="8" fill="#000000"/><rect x="878" y="229" width="1" height="6" fill="#5a5a5a"/><rect x="882" y="231" width="1" height="6" fill="#000000"/><rect x="881" y="233" width="3" height="1" fill="#000000"/><rect x="886" y="233" width="1" height="6" fill="#2f4f4f"/><rect x="885" y="235" width="3" height="1" fill="#2f4f4f"/><rect x="890" y="233" width="1" height="6" fill="#000000"/><rect x="889" y="235" width="3" height="1" fill="#000000"/><rect x="894" y="234" width="1" height="5" fill="#000000"/><rect x="893" y="235" width="3" height="4" fill="#000000"/><rect x="894" y="236" width="1" height="2" fill="#5a5a5a"/><rect x="898" y="233" width="1" height="6" fill="#2f4f4f"/><rect x="897" y="234" width="3" height="5" fill="#2f4f4f"/><rect x="898" y="235" width="1" height="3" fill="#f0e088"/><rect x="902" y="229" width="1" height="6" fill="#2f4f4f"/><rect x="901" y="229" width="3" height="6" fill="#2f4f4f"/><rect x="902" y="230" width="1" height="4" fill="#f0e088"/><rect x="906" y="221" width="1" height="9" fill="#2f4f4f"/><rect x="905" y="223" width="3" height="7" fill="#2f4f4f"/><rect x="906" y="224" width="1" height="5" fill="#f0e088"/><rect x="910" y="224" width="1" height="3" fill="#000000"/><rect x="909" y="224" width="3" height="3" fill="#000000"/><rect x="910" y="225" width="1" height="1" fill="#5a5a5a"/><rect x="914" y="225" width="1" height="4" fill="#000000"/><rect x="913" y="226" width="3" height="3" fill="#000000"/><rect x="914" y="227" width="1" height="1" fill="#5a5a5a"/><rect x="918" y="224" width="1" height="4" fill="#2f4f4f"/><rect x="917" y="226" width="3" height="1" fill="#2f4f4f"/><rect x="922" y="221" width="1" height="7" fill="#2f4f4f"/><rect x="921" y="223" width="3" height="5" fill="#2f4f4f"/><rect x="922" y="224" width="1" height="3" fill="#f0e088"/><rect x="926" y="223" width="1" height="13" fill="#000000"/><rect x="925" y="224" width="3" height="10" fill="#000000"/><rect x="926" y="225" width="1" height="8" fill="#5a5a5a"/><rect x="930" y="231" width="1" height="3" fill="#000000"/><rect x="929" y="232" width="3" height="1" fill="#000000"/><rect x="934" y="228" width="1" height="5" fill="#2f4f4f"/><rect x="933" y="229" width="3" height="3" fill="#2f4f4f"/><rect x="934" y="230" width="1" height="1" fill="#f0e088"/><rect x="938" y="228" width="1" height="5" fill="#2f4f4f"/><rect x="937" y="229" width="3" height="1" fill="#2f4f4f"/><rect x="942" y="228" width="1" height="5" fill="#000000"/><rect x="941" y="228" width="3" height="5" fill="#000000"/><rect x="942" y="229" width="1" height="3" fill="#5a5a5a"/><rect x="946" y="229" width="1" height="8" fill="#000000"/><rect x="945" y="230" width="3" height="6" fill="#000000"/><rect x="946" y="231" width="1" height="4" fill="#5a5a5a"/><rect x="950" y="231" width="1" height="6" fill="#2f4f4f"/><rect x="949" y="232" width="3" height="3" fill="#2f4f4f"/><rect x="950" y="233" width="1" height="1" fill="#f0e088"/><rect x="954" y="228" width="1" height="8" fill="#000000"/><rect x="953" y="232" width="3" height="1" fill="#000000"/><rect x="958" y="225" width="1" height="12" fill="#2f4f4f"/><rect x="957" y="227" width="3" height="6" fill="#2f4f4f"/><rect x="958" y="228" width="1" height="4" fill="#f0e088"/><rect x="962" y="218" width="1" height="11" fill="#2f4f4f"/><rect x="961" y="218" width="3" height="11" fill="#2f4f4f"/><rect x="962" y="219" width="1" height="9" fill="#f0e088"/><rect x="966" y="212" width="1" height="8" fill="#2f4f4f"/><rect x="965" y="215" width="3" height="5" fill="#2f4f4f"/><rect x="966" y="216" width="1" height="3" fill="#f0e088"/><rect x="970" y="206" width="1" height="11" fill="#2f4f4f"/><rect x="969" y="209" width="3" height="8" fill="#2f4f4f"/><rect x="970" y="210" width="1" height="6" fill="#f0e088"/><rect x="974" y="208" width="1" height="8" fill="#000000"/><rect x="973" y="208" width="3" height="7" fill="#000000"/><rect x="974" y="209" width="1" height="5" fill="#5a5a5a"/><rect x="978" y="214" width="1" height="5" fill="#000000"/><rect x="977" y="214" width="3" height="3" fill="#000000"/><rect x="978" y="215" width="1" height="1" fill="#5a5a5a"/><rect x="982" y="214" width="1" height="11" fill="#000000"/><rect x="981" y="215" width="3" height="8" fill="#000000"/><rect x="982" y="216" width="1" height="6" fill="#5a5a5a"/><rect x="986" y="219" width="1" height="6" fill="#2f4f4f"/><rect x="985" y="221" width="3" height="1" fill="#2f4f4f"/><rect x="990" y="216" width="1" height="16" fill="#000000"/><rect x="989" y="220" width="3" height="9" fill="#000000"/><rect x="990" y="221" width="1" height="7" fill="#5a5a5a"/><rect x="994" y="225" width="1" height="7" fill="#000000"/><rect x="993" y="228" width="3" height="1" fill="#000000"/><rect x="998" y="226" width="1" height="13" fill="#000000"/><rect x="997" y="227" width="3" height="12" fill="#000000"/><rect x="998" y="228" width="1" height="10" fill="#5a5a5a"/><rect x="1002" y="229" width="1" height="13" fill="#2f4f4f"/><rect x="1001" y="232" width="3" height="7" fill="#2f4f4f"/><rect x="1002" y="233" width="1" height="5" fill="#f0e088"/><rect x="1006" y="231" width="1" height="8" fill="#000000"/><rect x="1005" y="232" width="3" height="3" fill="#000000"/><rect x="1006" y="233" width="1" height="1" fill="#5a5a5a"/><rect x="1010" y="218" width="1" height="21" fill="#2f4f4f"/><rect x="1009" y="219" width="3" height="16" fill="#2f4f4f"/><rect x="1010" y="220" width="1" height="14" fill="#f0e088"/><rect x="1014" y="216" width="1" height="9" fill="#2f4f4f"/><rect x="1013" y="220" width="3" height="1" fill="#2f4f4f"/><rect x="1018" y="210" width="1" height="13" fill="#2f4f4f"/><rect x="1017" y="211" width="3" height="9" fill="#2f4f4f"/><rect x="1018" y="212" width="1" height="7" fill="#f0e088"/><rect x="1022" y="208" width="1" height="7" fill="#000000"/><rect x="1021" y="208" width="3" height="6" fill="#000000"/><rect x="1022" y="209" width="1" height="4" fill="#5a5a5a"/><rect x="1026" y="211" width="1" height="13" fill="#000000"/><rect x="1025" y="212" width="3" height="10" fill="#000000"/><rect x="1026" y="213" width="1" height="8" fill="#5a5a5a"/><rect x="1030" y="219" width="1" height="3" fill="#2f4f4f"/><rect x="1029" y="219" width="3" height="3" fill="#2f4f4f"/><rect x="1030" y="220" width="1" height="1" fill="#f0e088"/><rect x="1034" y="213" width="1" height="13" fill="#2f4f4f"/><rect x="1033" y="214" width="3" height="6" fill="#2f4f4f"/><rect x="1034" y="215" width="1" height="4" fill="#f0e088"/><rect x="1038" y="210" width="1" height="7" fill="#2f4f4f"/><rect x="1037" y="211" width="3" height="4" fill="#2f4f4f"/><rect x="1038" y="212" width="1" height="2" fill="#f0e088"/><rect x="1042" y="202" width="1" height="11" fill="#2f4f4f"/><rect x="1041" y="206" width="3" height="6" fill="#2f4f4f"/><rect x="1042" y="207" width="1" height="4" fill="#f0e088"/><rect x="1046" y="198" width="1" height="12" fill="#000000"/><rect x="1045" y="206" width="3" height="3" fill="#000000"/><rect x="1046" y="207" width="1" height="1" fill="#5a5a5a"/><rect x="1050" y="205" width="1" height="7" fill="#2f4f4f"/><rect x="1049" y="205" width="3" height="3" fill="#2f4f4f"/><rect x="1050" y="206" width="1" height="1" fill="#f0e088"/><rect x="1054" y="206" width="1" height="3" fill="#000000"/><rect x="1053" y="206" width="3" height="3" fill="#000000"/><rect x="1054" y="207" width="1" height="1" fill="#5a5a5a"/></svg>
<div style="left:625px;top:132px;width:550px;height:1px;background:#000;"></div>
<div style="left:625px;top:252px;width:550px;height:1px;background:#000;"></div>
<div style="left:625px;top:132px;width:1px;height:120px;background:#000;"></div>
<div style="left:1174px;top:132px;width:1px;height:120px;background:#000;"></div>
<svg style="left:629px;top:138px" width="8" height="6"><path d="M0,0 H7 L3.5,5 Z" fill="#000"/></svg>
<span class="t" style="left:641.50px;top:136.08px;font-family:'Liberation Sans', sans-serif;font-size:9.8px;line-height:9.8px;color:#000;font-weight:normal;transform:scaleX(0.9466);transform-origin:0 0;-webkit-text-stroke:0.08px currentColor;">USDJPYf,M5  109.445 109.445 109.433 109.435</span>
<svg style="left:1058px;top:133px" width="9" height="5"><path d="M0,0 H8 L4,4 Z" fill="#a0a0a0"/></svg>
<span class="t" style="left:1055.80px;top:137.08px;font-family:'Liberation Sans', sans-serif;font-size:9.8px;line-height:9.8px;color:#000;font-weight:normal;transform:scaleX(0.9207);transform-origin:0 0;-webkit-text-stroke:0.08px currentColor;">Volume_Scalping_Ea_fix</span>
<svg style="left:1156px;top:134px" width="14" height="14"><circle cx="7.5" cy="7" r="5.3" fill="none" stroke="#000" stroke-width="1.1"/><rect x="5.2" y="4.6" width="1.2" height="1.6" fill="#000"/><rect x="8.6" y="4.6" width="1.2" height="1.6" fill="#000"/><path d="M4.6,7.8 Q7.5,11.2 10.4,7.8" fill="none" stroke="#000" stroke-width="1.1"/></svg>
<div style="left:1175px;top:150px;width:3px;height:1px;background:#000;"></div>
<span class="t" style="left:1180.40px;top:146.28px;font-family:'Liberation Sans', sans-serif;font-size:9.8px;line-height:9.8px;color:#000;font-weight:normal;transform:scaleX(0.9203);transform-origin:0 0;-webkit-text-stroke:0.12px currentColor;">109.765</span>
<div style="left:1175px;top:183px;width:3px;height:1px;background:#000;"></div>
<span class="t" style="left:1180.40px;top:179.18px;font-family:'Liberation Sans', sans-serif;font-size:9.8px;line-height:9.8px;color:#000;font-weight:normal;transform:scaleX(0.9203);transform-origin:0 0;-webkit-text-stroke:0.12px currentColor;">109.575</span>
<div style="left:1175px;top:216px;width:3px;height:1px;background:#000;"></div>
<span class="t" style="left:1180.40px;top:211.78px;font-family:'Liberation Sans', sans-serif;font-size:9.8px;line-height:9.8px;color:#000;font-weight:normal;transform:scaleX(0.9203);transform-origin:0 0;-webkit-text-stroke:0.12px currentColor;">109.385</span>
<div style="left:1175px;top:249px;width:3px;height:1px;background:#000;"></div>
<span class="t" style="left:1180.40px;top:244.58px;font-family:'Liberation Sans', sans-serif;font-size:9.8px;line-height:9.8px;color:#000;font-weight:normal;transform:scaleX(0.9203);transform-origin:0 0;-webkit-text-stroke:0.12px currentColor;">109.195</span>
<div style="left:1176px;top:203px;width:41px;height:10px;background:#000;"></div>
<span class="t" style="left:1180.40px;top:203.48px;font-family:'Liberation Sans', sans-serif;font-size:9.8px;line-height:9.8px;color:#fff;font-weight:normal;transform:scaleX(0.9203);transform-origin:0 0;-webkit-text-stroke:0.05px currentColor;">109.435</span>
<div style="left:626px;top:252px;width:1px;height:4px;background:#000;"></div>
<span class="t" style="left:625.20px;top:257.22px;font-family:'Liberation Sans', sans-serif;font-size:9.5px;line-height:9.5px;color:#000;font-weight:normal;transform:scaleX(0.9566);transform-origin:0 0;-webkit-text-stroke:0.12px currentColor;">5 Sep 2017</span>
<div style="left:690px;top:252px;width:1px;height:4px;background:#000;"></div>
<span class="t" style="left:689.20px;top:257.22px;font-family:'Liberation Sans', sans-serif;font-size:9.5px;line-height:9.5px;color:#000;font-weight:normal;transform:scaleX(0.9620);transform-origin:0 0;-webkit-text-stroke:0.12px currentColor;">5 Sep 03:25</span>
<div style="left:754px;top:252px;width:1px;height:4px;background:#000;"></div>
<span class="t" style="left:753.20px;top:257.22px;font-family:'Liberation Sans', sans-serif;font-size:9.5px;line-height:9.5px;color:#000;font-weight:normal;transform:scaleX(0.9756);transform-origin:0 0;-webkit-text-stroke:0.12px currentColor;">5 Sep 04:45</span>
<div style="left:818px;top:252px;width:1px;height:4px;background:#000;"></div>
<span class="t" style="left:817.20px;top:257.22px;font-family:'Liberation Sans', sans-serif;font-size:9.5px;line-height:9.5px;color:#000;font-weight:normal;transform:scaleX(0.9756);transform-origin:0 0;-webkit-text-stroke:0.12px currentColor;">5 Sep 06:05</span>
<div style="left:882px;top:252px;width:1px;height:4px;background:#000;"></div>
<span class="t" style="left:881.20px;top:257.22px;font-family:'Liberation Sans', sans-serif;font-size:9.5px;line-height:9.5px;color:#000;font-weight:normal;transform:scaleX(0.9756);transform-origin:0 0;-webkit-text-stroke:0.12px currentColor;">5 Sep 07:25</span>
<div style="left:946px;top:252px;width:1px;height:4px;background:#000;"></div>
<span class="t" style="left:945.20px;top:257.22px;font-family:'Liberation Sans', sans-serif;font-size:9.5px;line-height:9.5px;color:#000;font-weight:normal;transform:scaleX(0.9561);transform-origin:0 0;-webkit-text-stroke:0.12px currentColor;">5 Sep 08:45</span>
<div style="left:1010px;top:252px;width:1px;height:4px;background:#000;"></div>
<span class="t" style="left:1009.20px;top:257.22px;font-family:'Liberation Sans', sans-serif;font-size:9.5px;line-height:9.5px;color:#000;font-weight:normal;transform:scaleX(0.9659);transform-origin:0 0;-webkit-text-stroke:0.12px currentColor;">5 Sep 10:05</span>
<div style="left:613px;top:282px;width:614px;height:186px;box-sizing:border-box;border:1px solid #3e3e3e;background:linear-gradient(#c0cee0 0px,#d0dcea 28px,#d9e4f0 40px,#dae5f1 100%);border-radius:7px 7px 0 0;box-shadow:inset 1px 1px 0 #eef4fa, inset -1px 0 0 #eef4fa;"></div>
<svg style="left:624px;top:294px" width="15" height="15"><rect x="0.6" y="0.6" width="10.4" height="8.4" fill="#fff" stroke="#3c7cf4" stroke-width="1.2"/><path d="M2.2,4.5 L3.5,3 M4.5,3 L7,5 L9,4.5" fill="none" stroke="#3c7cf4" stroke-width="1"/><rect x="3.6" y="5.6" width="10.4" height="8.4" fill="#fff" stroke="#3c7cf4" stroke-width="1.2"/><path d="M5.5,8.5 L7.5,11.5 L9,8.5 L10.5,11 L12,9.5" fill="none" stroke="#3c7cf4" stroke-width="1"/></svg>
<span class="t" style="left:643.20px;top:295.97px;font-family:'Liberation Sans', sans-serif;font-size:12.5px;line-height:12.5px;color:#2a2e36;font-weight:normal;transform:scaleX(0.8419);transform-origin:0 0;">EURJPYf,M5</span>
<div style="left:1120px;top:293px;width:31px;height:17px;box-sizing:border-box;border:1px solid #7d8ba3;border-radius:3px;background:linear-gradient(#dbe4ef,#c7d3e2);box-shadow:inset 0 0 0 1px rgba(255,255,255,0.45);"></div>
<svg style="left:1120px;top:293px" width="31" height="17"><rect x="10.0" y="8.0" width="11" height="4.5" rx="1.5" fill="#fff" stroke="#3c4250" stroke-width="1.2"/></svg>
<div style="left:1153px;top:293px;width:31px;height:17px;box-sizing:border-box;border:1px solid #7d8ba3;border-radius:3px;background:linear-gradient(#dbe4ef,#c7d3e2);box-shadow:inset 0 0 0 1px rgba(255,255,255,0.45);"></div>
<svg style="left:1153px;top:293px" width="31" height="17"><rect x="10.5" y="4.0" width="10" height="8.5" rx="1.5" fill="#fff" stroke="#3c4250" stroke-width="1.3"/><rect x="13.3" y="6.7" width="4.4" height="2.8" fill="#3c4250"/></svg>
<div style="left:1186px;top:293px;width:31px;height:17px;box-sizing:border-box;border:1px solid #7d8ba3;border-radius:3px;background:linear-gradient(#dbe4ef,#c7d3e2);box-shadow:inset 0 0 0 1px rgba(255,255,255,0.45);"></div>
<svg style="left:1186px;top:293px" width="31" height="17"><path d="M11.9,5.9 L19.1,11.3 M19.1,5.9 L11.9,11.3" stroke="#2e3240" stroke-width="4.6" stroke-linecap="round"/><path d="M11.9,5.9 L19.1,11.3 M19.1,5.9 L11.9,11.3" stroke="#fff" stroke-width="2.4" stroke-linecap="round"/></svg>
<div style="left:621px;top:313px;width:598px;height:146px;background:#fff;"></div>
<div style="left:621px;top:313px;width:597px;height:1px;background:#6a6a6a;"></div>
<div style="left:621px;top:314px;width:596px;height:1px;background:#a0a0a0;"></div>
<div style="left:621px;top:313px;width:1px;height:145px;background:#6a6a6a;"></div>
<div style="left:622px;top:314px;width:1px;height:144px;background:#a0a0a0;"></div>
<div style="left:623px;top:315px;width:594px;height:143px;background:#fffbea;"></div>
<div style="left:626px;top:410px;width:548px;height:1px;background:#ff4a10;"></div>
<div style="left:626px;top:414px;width:548px;height:1px;background:#c0c0c0;"></div>
<div style="left:628px;top:318px;width:255px;height:99px;background:#008080;"></div>
<div style="left:633px;top:318px;width:1px;height:92px;background:#b8e8e8;"></div>
<div style="left:633px;top:410px;width:250px;height:1px;background:#b8e8e8;"></div>
<div style="left:882px;top:318px;width:1px;height:92px;background:#b8e8e8;"></div>
<span class="t" style="left:642.60px;top:320.33px;font-family:'Liberation Sans', sans-serif;font-size:12.6px;line-height:12.6px;color:#f2f2e8;font-weight:normal;transform:scaleX(1.0356);transform-origin:0 0;-webkit-text-stroke:0.05px currentColor;">Leverage: 500</span>
<span class="t" style="left:642.60px;top:338.83px;font-family:'Liberation Sans', sans-serif;font-size:12.6px;line-height:12.6px;color:#f2f2e8;font-weight:normal;transform:scaleX(1.1081);transform-origin:0 0;-webkit-text-stroke:0.05px currentColor;">VolumeOrderFlow: 1.50</span>
<span class="t" style="left:642.60px;top:357.33px;font-family:'Liberation Sans', sans-serif;font-size:12.6px;line-height:12.6px;color:#00f000;font-weight:normal;transform:scaleX(1.1005);transform-origin:0 0;-webkit-text-stroke:0.05px currentColor;">Work Demo Version</span>
<span class="t" style="left:664.50px;top:376.33px;font-family:'Liberation Sans', sans-serif;font-size:12.6px;line-height:12.6px;color:#00b4f4;font-weight:normal;transform:scaleX(1.0576);transform-origin:0 0;-webkit-text-stroke:0.05px currentColor;">Volume Scalping EA</span>
<span class="t" style="left:664.50px;top:395.63px;font-family:'Liberation Sans', sans-serif;font-size:12.6px;line-height:12.6px;color:#f2f2e8;font-weight:normal;transform:scaleX(1.1180);transform-origin:0 0;-webkit-text-stroke:0.05px currentColor;">Support: info@forex-ea.com</span>
<svg style="left:0px;top:0px" width="1275" height="986" shape-rendering="crispEdges"><rect x="626" y="346" width="1" height="4" fill="#2f4f4f"/><rect x="625" y="346" width="3" height="4" fill="#2f4f4f"/><rect x="626" y="347" width="1" height="2" fill="#f0e088"/><rect x="630" y="343" width="1" height="5" fill="#2f4f4f"/><rect x="629" y="345" width="3" height="1" fill="#2f4f4f"/><rect x="634" y="341" width="1" height="7" fill="#2f4f4f"/><rect x="633" y="342" width="3" height="3" fill="#2f4f4f"/><rect x="634" y="343" width="1" height="1" fill="#f0e088"/><rect x="638" y="339" width="1" height="3" fill="#2f4f4f"/><rect x="637" y="339" width="3" height="3" fill="#2f4f4f"/><rect x="638" y="340" width="1" height="1" fill="#f0e088"/><rect x="642" y="334" width="1" height="6" fill="#2f4f4f"/><rect x="641" y="336" width="3" height="4" fill="#2f4f4f"/><rect x="642" y="337" width="1" height="2" fill="#f0e088"/><rect x="646" y="333" width="1" height="7" fill="#000000"/><rect x="645" y="335" width="3" height="3" fill="#000000"/><rect x="646" y="336" width="1" height="1" fill="#5a5a5a"/><rect x="650" y="333" width="1" height="7" fill="#2f4f4f"/><rect x="649" y="334" width="3" height="4" fill="#2f4f4f"/><rect x="650" y="335" width="1" height="2" fill="#f0e088"/><rect x="654" y="330" width="1" height="7" fill="#000000"/><rect x="653" y="332" width="3" height="4" fill="#000000"/><rect x="654" y="333" width="1" height="2" fill="#5a5a5a"/><rect x="658" y="330" width="1" height="7" fill="#2f4f4f"/><rect x="657" y="331" width="3" height="5" fill="#2f4f4f"/><rect x="658" y="332" width="1" height="3" fill="#f0e088"/><rect x="662" y="329" width="1" height="6" fill="#000000"/><rect x="661" y="330" width="3" height="4" fill="#000000"/><rect x="662" y="331" width="1" height="2" fill="#5a5a5a"/><rect x="666" y="330" width="1" height="5" fill="#2f4f4f"/><rect x="665" y="332" width="3" height="1" fill="#2f4f4f"/><rect x="670" y="332" width="1" height="10" fill="#000000"/><rect x="669" y="333" width="3" height="8" fill="#000000"/><rect x="670" y="334" width="1" height="6" fill="#5a5a5a"/><rect x="674" y="337" width="1" height="8" fill="#000000"/><rect x="673" y="340" width="3" height="4" fill="#000000"/><rect x="674" y="341" width="1" height="2" fill="#5a5a5a"/><rect x="678" y="340" width="1" height="5" fill="#2f4f4f"/><rect x="677" y="342" width="3" height="1" fill="#2f4f4f"/><rect x="682" y="339" width="1" height="6" fill="#2f4f4f"/><rect x="681" y="341" width="3" height="1" fill="#2f4f4f"/><rect x="686" y="339" width="1" height="12" fill="#000000"/><rect x="685" y="340" width="3" height="8" fill="#000000"/><rect x="686" y="341" width="1" height="6" fill="#5a5a5a"/><rect x="690" y="346" width="1" height="3" fill="#000000"/><rect x="689" y="346" width="3" height="3" fill="#000000"/><rect x="690" y="347" width="1" height="1" fill="#5a5a5a"/><rect x="694" y="340" width="1" height="15" fill="#2f4f4f"/><rect x="693" y="344" width="3" height="4" fill="#2f4f4f"/><rect x="694" y="345" width="1" height="2" fill="#f0e088"/><rect x="698" y="340" width="1" height="6" fill="#2f4f4f"/><rect x="697" y="340" width="3" height="5" fill="#2f4f4f"/><rect x="698" y="341" width="1" height="3" fill="#f0e088"/><rect x="702" y="339" width="1" height="5" fill="#000000"/><rect x="701" y="340" width="3" height="3" fill="#000000"/><rect x="702" y="341" width="1" height="1" fill="#5a5a5a"/><rect x="706" y="340" width="1" height="4" fill="#2f4f4f"/><rect x="705" y="341" width="3" height="1" fill="#2f4f4f"/><rect x="710" y="340" width="1" height="17" fill="#000000"/><rect x="709" y="341" width="3" height="16" fill="#000000"/><rect x="710" y="342" width="1" height="14" fill="#5a5a5a"/><rect x="714" y="351" width="1" height="14" fill="#000000"/><rect x="713" y="356" width="3" height="5" fill="#000000"/><rect x="714" y="357" width="1" height="3" fill="#5a5a5a"/><rect x="718" y="360" width="1" height="11" fill="#000000"/><rect x="717" y="360" width="3" height="8" fill="#000000"/><rect x="718" y="361" width="1" height="6" fill="#5a5a5a"/><rect x="722" y="363" width="1" height="8" fill="#2f4f4f"/><rect x="721" y="366" width="3" height="1" fill="#2f4f4f"/><rect x="726" y="364" width="1" height="3" fill="#2f4f4f"/><rect x="725" y="364" width="3" height="3" fill="#2f4f4f"/><rect x="726" y="365" width="1" height="1" fill="#f0e088"/><rect x="730" y="363" width="1" height="8" fill="#000000"/><rect x="729" y="363" width="3" height="3" fill="#000000"/><rect x="730" y="364" width="1" height="1" fill="#5a5a5a"/><rect x="734" y="363" width="1" height="5" fill="#000000"/><rect x="733" y="363" width="3" height="4" fill="#000000"/><rect x="734" y="364" width="1" height="2" fill="#5a5a5a"/><rect x="738" y="363" width="1" height="8" fill="#000000"/><rect x="737" y="364" width="3" height="6" fill="#000000"/><rect x="738" y="365" width="1" height="4" fill="#5a5a5a"/><rect x="742" y="365" width="1" height="7" fill="#2f4f4f"/><rect x="741" y="366" width="3" height="3" fill="#2f4f4f"/><rect x="742" y="367" width="1" height="1" fill="#f0e088"/><rect x="746" y="363" width="1" height="7" fill="#000000"/><rect x="745" y="366" width="3" height="3" fill="#000000"/><rect x="746" y="367" width="1" height="1" fill="#5a5a5a"/><rect x="750" y="367" width="1" height="10" fill="#000000"/><rect x="749" y="367" width="3" height="4" fill="#000000"/><rect x="750" y="368" width="1" height="2" fill="#5a5a5a"/><rect x="754" y="369" width="1" height="3" fill="#2f4f4f"/><rect x="753" y="369" width="3" height="3" fill="#2f4f4f"/><rect x="754" y="370" width="1" height="1" fill="#f0e088"/><rect x="758" y="366" width="1" height="8" fill="#000000"/><rect x="757" y="369" width="3" height="3" fill="#000000"/><rect x="758" y="370" width="1" height="1" fill="#5a5a5a"/><rect x="762" y="367" width="1" height="4" fill="#000000"/><rect x="761" y="369" width="3" height="1" fill="#000000"/><rect x="766" y="365" width="1" height="5" fill="#2f4f4f"/><rect x="765" y="365" width="3" height="5" fill="#2f4f4f"/><rect x="766" y="366" width="1" height="3" fill="#f0e088"/><rect x="770" y="364" width="1" height="7" fill="#000000"/><rect x="769" y="365" width="3" height="6" fill="#000000"/><rect x="770" y="366" width="1" height="4" fill="#5a5a5a"/><rect x="774" y="368" width="1" height="9" fill="#000000"/><rect x="773" y="369" width="3" height="8" fill="#000000"/><rect x="774" y="370" width="1" height="6" fill="#5a5a5a"/><rect x="778" y="373" width="1" height="41" fill="#000000"/><rect x="777" y="376" width="3" height="26" fill="#000000"/><rect x="778" y="377" width="1" height="24" fill="#5a5a5a"/><rect x="782" y="396" width="1" height="10" fill="#2f4f4f"/><rect x="781" y="399" width="3" height="3" fill="#2f4f4f"/><rect x="782" y="400" width="1" height="1" fill="#f0e088"/><rect x="786" y="398" width="1" height="3" fill="#2f4f4f"/><rect x="785" y="398" width="3" height="3" fill="#2f4f4f"/><rect x="786" y="399" width="1" height="1" fill="#f0e088"/><rect x="790" y="397" width="1" height="10" fill="#000000"/><rect x="789" y="397" width="3" height="5" fill="#000000"/><rect x="790" y="398" width="1" height="3" fill="#5a5a5a"/><rect x="794" y="389" width="1" height="12" fill="#2f4f4f"/><rect x="793" y="389" width="3" height="12" fill="#2f4f4f"/><rect x="794" y="390" width="1" height="10" fill="#f0e088"/><rect x="798" y="387" width="1" height="11" fill="#000000"/><rect x="797" y="388" width="3" height="9" fill="#000000"/><rect x="798" y="389" width="1" height="7" fill="#5a5a5a"/><rect x="802" y="389" width="1" height="9" fill="#2f4f4f"/><rect x="801" y="391" width="3" height="6" fill="#2f4f4f"/><rect x="802" y="392" width="1" height="4" fill="#f0e088"/><rect x="806" y="384" width="1" height="10" fill="#2f4f4f"/><rect x="805" y="388" width="3" height="1" fill="#2f4f4f"/><rect x="810" y="389" width="1" height="5" fill="#000000"/><rect x="809" y="390" width="3" height="4" fill="#000000"/><rect x="810" y="391" width="1" height="2" fill="#5a5a5a"/><rect x="814" y="389" width="1" height="6" fill="#000000"/><rect x="813" y="391" width="3" height="1" fill="#000000"/><rect x="818" y="387" width="1" height="12" fill="#000000"/><rect x="817" y="392" width="3" height="6" fill="#000000"/><rect x="818" y="393" width="1" height="4" fill="#5a5a5a"/><rect x="822" y="395" width="1" height="12" fill="#000000"/><rect x="821" y="397" width="3" height="6" fill="#000000"/><rect x="822" y="398" width="1" height="4" fill="#5a5a5a"/><rect x="826" y="395" width="1" height="13" fill="#000000"/><rect x="825" y="401" width="3" height="6" fill="#000000"/><rect x="826" y="402" width="1" height="4" fill="#5a5a5a"/><rect x="830" y="403" width="1" height="5" fill="#000000"/><rect x="829" y="405" width="3" height="1" fill="#000000"/><rect x="834" y="403" width="1" height="9" fill="#2f4f4f"/><rect x="833" y="404" width="3" height="3" fill="#2f4f4f"/><rect x="834" y="405" width="1" height="1" fill="#f0e088"/><rect x="838" y="400" width="1" height="10" fill="#2f4f4f"/><rect x="837" y="400" width="3" height="4" fill="#2f4f4f"/><rect x="838" y="401" width="1" height="2" fill="#f0e088"/><rect x="842" y="399" width="1" height="5" fill="#000000"/><rect x="841" y="401" width="3" height="1" fill="#000000"/><rect x="846" y="399" width="1" height="3" fill="#2f4f4f"/><rect x="845" y="399" width="3" height="3" fill="#2f4f4f"/><rect x="846" y="400" width="1" height="1" fill="#f0e088"/><rect x="850" y="399" width="1" height="2" fill="#000000"/><rect x="849" y="399" width="3" height="3" fill="#000000"/><rect x="850" y="400" width="1" height="1" fill="#5a5a5a"/><rect x="854" y="396" width="1" height="6" fill="#2f4f4f"/><rect x="853" y="399" width="3" height="1" fill="#2f4f4f"/><rect x="858" y="398" width="1" height="7" fill="#000000"/><rect x="857" y="401" width="3" height="1" fill="#000000"/><rect x="862" y="400" width="1" height="2" fill="#000000"/><rect x="861" y="400" width="3" height="3" fill="#000000"/><rect x="862" y="401" width="1" height="1" fill="#5a5a5a"/><rect x="866" y="396" width="1" height="6" fill="#2f4f4f"/><rect x="865" y="396" width="3" height="6" fill="#2f4f4f"/><rect x="866" y="397" width="1" height="4" fill="#f0e088"/><rect x="870" y="391" width="1" height="7" fill="#2f4f4f"/><rect x="869" y="394" width="3" height="1" fill="#2f4f4f"/><rect x="874" y="393" width="1" height="3" fill="#2f4f4f"/><rect x="873" y="394" width="3" height="1" fill="#2f4f4f"/><rect x="878" y="387" width="1" height="10" fill="#000000"/><rect x="877" y="391" width="3" height="1" fill="#000000"/><rect x="882" y="393" width="1" height="7" fill="#000000"/><rect x="881" y="396" width="3" height="1" fill="#000000"/><rect x="886" y="392" width="1" height="9" fill="#2f4f4f"/><rect x="885" y="393" width="3" height="4" fill="#2f4f4f"/><rect x="886" y="394" width="1" height="2" fill="#f0e088"/><rect x="890" y="391" width="1" height="7" fill="#000000"/><rect x="889" y="391" width="3" height="5" fill="#000000"/><rect x="890" y="392" width="1" height="3" fill="#5a5a5a"/><rect x="894" y="392" width="1" height="6" fill="#000000"/><rect x="893" y="395" width="3" height="1" fill="#000000"/><rect x="898" y="392" width="1" height="6" fill="#2f4f4f"/><rect x="897" y="393" width="3" height="3" fill="#2f4f4f"/><rect x="898" y="394" width="1" height="1" fill="#f0e088"/><rect x="902" y="390" width="1" height="5" fill="#2f4f4f"/><rect x="901" y="392" width="3" height="1" fill="#2f4f4f"/><rect x="906" y="386" width="1" height="6" fill="#2f4f4f"/><rect x="905" y="388" width="3" height="4" fill="#2f4f4f"/><rect x="906" y="389" width="1" height="2" fill="#f0e088"/><rect x="910" y="388" width="1" height="4" fill="#2f4f4f"/><rect x="909" y="389" width="3" height="3" fill="#2f4f4f"/><rect x="910" y="390" width="1" height="1" fill="#f0e088"/><rect x="914" y="387" width="1" height="7" fill="#2f4f4f"/><rect x="913" y="388" width="3" height="5" fill="#2f4f4f"/><rect x="914" y="389" width="1" height="3" fill="#f0e088"/><rect x="918" y="385" width="1" height="7" fill="#000000"/><rect x="917" y="388" width="3" height="3" fill="#000000"/><rect x="918" y="389" width="1" height="1" fill="#5a5a5a"/><rect x="922" y="389" width="1" height="3" fill="#000000"/><rect x="921" y="389" width="3" height="3" fill="#000000"/><rect x="922" y="390" width="1" height="1" fill="#5a5a5a"/><rect x="926" y="391" width="1" height="11" fill="#000000"/><rect x="925" y="391" width="3" height="10" fill="#000000"/><rect x="926" y="392" width="1" height="8" fill="#5a5a5a"/><rect x="930" y="398" width="1" height="3" fill="#000000"/><rect x="929" y="399" width="3" height="1" fill="#000000"/><rect x="934" y="396" width="1" height="4" fill="#2f4f4f"/><rect x="933" y="396" width="3" height="4" fill="#2f4f4f"/><rect x="934" y="397" width="1" height="2" fill="#f0e088"/><rect x="938" y="396" width="1" height="4" fill="#000000"/><rect x="937" y="396" width="3" height="3" fill="#000000"/><rect x="938" y="397" width="1" height="1" fill="#5a5a5a"/><rect x="942" y="395" width="1" height="3" fill="#000000"/><rect x="941" y="396" width="3" height="1" fill="#000000"/><rect x="946" y="395" width="1" height="6" fill="#000000"/><rect x="945" y="396" width="3" height="3" fill="#000000"/><rect x="946" y="397" width="1" height="1" fill="#5a5a5a"/><rect x="950" y="395" width="1" height="6" fill="#2f4f4f"/><rect x="949" y="397" width="3" height="1" fill="#2f4f4f"/><rect x="954" y="395" width="1" height="5" fill="#000000"/><rect x="953" y="397" width="3" height="1" fill="#000000"/><rect x="958" y="392" width="1" height="9" fill="#2f4f4f"/><rect x="957" y="396" width="3" height="1" fill="#2f4f4f"/><rect x="962" y="392" width="1" height="8" fill="#2f4f4f"/><rect x="961" y="396" width="3" height="1" fill="#2f4f4f"/><rect x="966" y="390" width="1" height="11" fill="#2f4f4f"/><rect x="965" y="395" width="3" height="1" fill="#2f4f4f"/><rect x="970" y="389" width="1" height="8" fill="#000000"/><rect x="969" y="394" width="3" height="3" fill="#000000"/><rect x="970" y="395" width="1" height="1" fill="#5a5a5a"/><rect x="974" y="387" width="1" height="10" fill="#2f4f4f"/><rect x="973" y="392" width="3" height="4" fill="#2f4f4f"/><rect x="974" y="393" width="1" height="2" fill="#f0e088"/><rect x="978" y="390" width="1" height="8" fill="#000000"/><rect x="977" y="392" width="3" height="3" fill="#000000"/><rect x="978" y="393" width="1" height="1" fill="#5a5a5a"/><rect x="982" y="392" width="1" height="8" fill="#000000"/><rect x="981" y="393" width="3" height="5" fill="#000000"/><rect x="982" y="394" width="1" height="3" fill="#5a5a5a"/><rect x="986" y="396" width="1" height="8" fill="#000000"/><rect x="985" y="396" width="3" height="6" fill="#000000"/><rect x="986" y="397" width="1" height="4" fill="#5a5a5a"/><rect x="990" y="393" width="1" height="12" fill="#2f4f4f"/><rect x="989" y="394" width="3" height="8" fill="#2f4f4f"/><rect x="990" y="395" width="1" height="6" fill="#f0e088"/><rect x="994" y="390" width="1" height="7" fill="#2f4f4f"/><rect x="993" y="393" width="3" height="1" fill="#2f4f4f"/><rect x="998" y="390" width="1" height="11" fill="#000000"/><rect x="997" y="393" width="3" height="8" fill="#000000"/><rect x="998" y="394" width="1" height="6" fill="#5a5a5a"/><rect x="1002" y="397" width="1" height="8" fill="#000000"/><rect x="1001" y="399" width="3" height="3" fill="#000000"/><rect x="1002" y="400" width="1" height="1" fill="#5a5a5a"/><rect x="1006" y="396" width="1" height="12" fill="#2f4f4f"/><rect x="1005" y="399" width="3" height="3" fill="#2f4f4f"/><rect x="1006" y="400" width="1" height="1" fill="#f0e088"/><rect x="1010" y="391" width="1" height="10" fill="#2f4f4f"/><rect x="1009" y="394" width="3" height="6" fill="#2f4f4f"/><rect x="1010" y="395" width="1" height="4" fill="#f0e088"/><rect x="1014" y="380" width="1" height="15" fill="#2f4f4f"/><rect x="1013" y="381" width="3" height="14" fill="#2f4f4f"/><rect x="1014" y="382" width="1" height="12" fill="#f0e088"/><rect x="1018" y="381" width="1" height="9" fill="#2f4f4f"/><rect x="1017" y="385" width="3" height="1" fill="#2f4f4f"/><rect x="1022" y="379" width="1" height="12" fill="#000000"/><rect x="1021" y="380" width="3" height="9" fill="#000000"/><rect x="1022" y="381" width="1" height="7" fill="#5a5a5a"/><rect x="1026" y="387" width="1" height="15" fill="#000000"/><rect x="1025" y="387" width="3" height="15" fill="#000000"/><rect x="1026" y="388" width="1" height="13" fill="#5a5a5a"/><rect x="1030" y="396" width="1" height="8" fill="#000000"/><rect x="1029" y="400" width="3" height="3" fill="#000000"/><rect x="1030" y="401" width="1" height="1" fill="#5a5a5a"/><rect x="1034" y="402" width="1" height="32" fill="#000000"/><rect x="1033" y="402" width="3" height="16" fill="#000000"/><rect x="1034" y="403" width="1" height="14" fill="#5a5a5a"/><rect x="1038" y="414" width="1" height="7" fill="#2f4f4f"/><rect x="1037" y="417" width="3" height="1" fill="#2f4f4f"/><rect x="1042" y="416" width="1" height="15" fill="#000000"/><rect x="1041" y="417" width="3" height="5" fill="#000000"/><rect x="1042" y="418" width="1" height="3" fill="#5a5a5a"/><rect x="1046" y="419" width="1" height="8" fill="#2f4f4f"/><rect x="1045" y="422" width="3" height="1" fill="#2f4f4f"/><rect x="1050" y="412" width="1" height="12" fill="#2f4f4f"/><rect x="1049" y="412" width="3" height="9" fill="#2f4f4f"/><rect x="1050" y="413" width="1" height="7" fill="#f0e088"/><rect x="1054" y="413" width="1" height="2" fill="#000000"/><rect x="1053" y="413" width="3" height="3" fill="#000000"/><rect x="1054" y="414" width="1" height="1" fill="#5a5a5a"/></svg>
<div style="left:625px;top:317px;width:550px;height:1px;background:#000;"></div>
<div style="left:625px;top:437px;width:550px;height:1px;background:#000;"></div>
<div style="left:625px;top:317px;width:1px;height:120px;background:#000;"></div>
<div style="left:1174px;top:317px;width:1px;height:120px;background:#000;"></div>
<svg style="left:629px;top:323px" width="8" height="6"><path d="M0,0 H7 L3.5,5 Z" fill="#000"/></svg>
<span class="t" style="left:641.50px;top:321.08px;font-family:'Liberation Sans', sans-serif;font-size:9.8px;line-height:9.8px;color:#000;font-weight:normal;transform:scaleX(0.9391);transform-origin:0 0;-webkit-text-stroke:0.08px currentColor;">EURJPYf,M5  130.005 130.006 129.982 129.991</span>
<svg style="left:1058px;top:318px" width="9" height="5"><path d="M0,0 H8 L4,4 Z" fill="#a0a0a0"/></svg>
<span class="t" style="left:1055.80px;top:322.08px;font-family:'Liberation Sans', sans-serif;font-size:9.8px;line-height:9.8px;color:#000;font-weight:normal;transform:scaleX(0.9207);transform-origin:0 0;-webkit-text-stroke:0.08px currentColor;">Volume_Scalping_Ea_fix</span>
<svg style="left:1156px;top:319px" width="14" height="14"><circle cx="7.5" cy="7" r="5.3" fill="none" stroke="#000" stroke-width="1.1"/><rect x="5.2" y="4.6" width="1.2" height="1.6" fill="#000"/><rect x="8.6" y="4.6" width="1.2" height="1.6" fill="#000"/><path d="M4.6,7.8 Q7.5,11.2 10.4,7.8" fill="none" stroke="#000" stroke-width="1.1"/></svg>
<div style="left:1175px;top:335px;width:3px;height:1px;background:#000;"></div>
<span class="t" style="left:1180.40px;top:331.28px;font-family:'Liberation Sans', sans-serif;font-size:9.8px;line-height:9.8px;color:#000;font-weight:normal;transform:scaleX(0.9203);transform-origin:0 0;-webkit-text-stroke:0.12px currentColor;">130.550</span>
<div style="left:1175px;top:368px;width:3px;height:1px;background:#000;"></div>
<span class="t" style="left:1180.40px;top:364.18px;font-family:'Liberation Sans', sans-serif;font-size:9.8px;line-height:9.8px;color:#000;font-weight:normal;transform:scaleX(0.9203);transform-origin:0 0;-webkit-text-stroke:0.12px currentColor;">130.315</span>
<div style="left:1175px;top:401px;width:3px;height:1px;background:#000;"></div>
<span class="t" style="left:1180.40px;top:396.78px;font-family:'Liberation Sans', sans-serif;font-size:9.8px;line-height:9.8px;color:#000;font-weight:normal;transform:scaleX(0.9203);transform-origin:0 0;-webkit-text-stroke:0.12px currentColor;">130.080</span>
<div style="left:1175px;top:434px;width:3px;height:1px;background:#000;"></div>
<span class="t" style="left:1180.40px;top:429.58px;font-family:'Liberation Sans', sans-serif;font-size:9.8px;line-height:9.8px;color:#000;font-weight:normal;transform:scaleX(0.9203);transform-origin:0 0;-webkit-text-stroke:0.12px currentColor;">129.845</span>
<div style="left:1176px;top:404px;width:41px;height:10px;background:#ff4a10;"></div>
<span class="t" style="left:1180.40px;top:405.08px;font-family:'Liberation Sans', sans-serif;font-size:9.8px;line-height:9.8px;color:#fff;font-weight:normal;transform:scaleX(0.9203);transform-origin:0 0;-webkit-text-stroke:0.05px currentColor;">130.023</span>
<div style="left:1176px;top:410px;width:41px;height:10px;background:#000;"></div>
<span class="t" style="left:1180.40px;top:410.08px;font-family:'Liberation Sans', sans-serif;font-size:9.8px;line-height:9.8px;color:#fff;font-weight:normal;transform:scaleX(0.9203);transform-origin:0 0;-webkit-text-stroke:0.05px currentColor;">129.991</span>
<div style="left:626px;top:437px;width:1px;height:4px;background:#000;"></div>
<span class="t" style="left:625.20px;top:442.22px;font-family:'Liberation Sans', sans-serif;font-size:9.5px;line-height:9.5px;color:#000;font-weight:normal;transform:scaleX(0.9566);transform-origin:0 0;-webkit-text-stroke:0.12px currentColor;">5 Sep 2017</span>
<div style="left:690px;top:437px;width:1px;height:4px;background:#000;"></div>
<span class="t" style="left:689.20px;top:442.22px;font-family:'Liberation Sans', sans-serif;font-size:9.5px;line-height:9.5px;color:#000;font-weight:normal;transform:scaleX(0.9620);transform-origin:0 0;-webkit-text-stroke:0.12px currentColor;">5 Sep 03:25</span>
<div style="left:754px;top:437px;width:1px;height:4px;background:#000;"></div>
<span class="t" style="left:753.20px;top:442.22px;font-family:'Liberation Sans', sans-serif;font-size:9.5px;line-height:9.5px;color:#000;font-weight:normal;transform:scaleX(0.9756);transform-origin:0 0;-webkit-text-stroke:0.12px currentColor;">5 Sep 04:45</span>
<div style="left:818px;top:437px;width:1px;height:4px;background:#000;"></div>
<span class="t" style="left:817.20px;top:442.22px;font-family:'Liberation Sans', sans-serif;font-size:9.5px;line-height:9.5px;color:#000;font-weight:normal;transform:scaleX(0.9756);transform-origin:0 0;-webkit-text-stroke:0.12px currentColor;">5 Sep 06:05</span>
<div style="left:882px;top:437px;width:1px;height:4px;background:#000;"></div>
<span class="t" style="left:881.20px;top:442.22px;font-family:'Liberation Sans', sans-serif;font-size:9.5px;line-height:9.5px;color:#000;font-weight:normal;transform:scaleX(0.9756);transform-origin:0 0;-webkit-text-stroke:0.12px currentColor;">5 Sep 07:25</span>
<div style="left:946px;top:437px;width:1px;height:4px;background:#000;"></div>
<span class="t" style="left:945.20px;top:442.22px;font-family:'Liberation Sans', sans-serif;font-size:9.5px;line-height:9.5px;color:#000;font-weight:normal;transform:scaleX(0.9561);transform-origin:0 0;-webkit-text-stroke:0.12px currentColor;">5 Sep 08:45</span>
<div style="left:1010px;top:437px;width:1px;height:4px;background:#000;"></div>
<span class="t" style="left:1009.20px;top:442.22px;font-family:'Liberation Sans', sans-serif;font-size:9.5px;line-height:9.5px;color:#000;font-weight:normal;transform:scaleX(0.9659);transform-origin:0 0;-webkit-text-stroke:0.12px currentColor;">5 Sep 10:05</span>
<div style="left:613px;top:467px;width:614px;height:186px;box-sizing:border-box;border:1px solid #3e3e3e;background:linear-gradient(#c0cee0 0px,#d0dcea 28px,#d9e4f0 40px,#dae5f1 100%);border-radius:7px 7px 0 0;box-shadow:inset 1px 1px 0 #eef4fa, inset -1px 0 0 #eef4fa;"></div>
<svg style="left:624px;top:479px" width="15" height="15"><rect x="0.6" y="0.6" width="10.4" height="8.4" fill="#fff" stroke="#3c7cf4" stroke-width="1.2"/><path d="M2.2,4.5 L3.5,3 M4.5,3 L7,5 L9,4.5" fill="none" stroke="#3c7cf4" stroke-width="1"/><rect x="3.6" y="5.6" width="10.4" height="8.4" fill="#fff" stroke="#3c7cf4" stroke-width="1.2"/><path d="M5.5,8.5 L7.5,11.5 L9,8.5 L10.5,11 L12,9.5" fill="none" stroke="#3c7cf4" stroke-width="1"/></svg>
<span class="t" style="left:643.20px;top:480.97px;font-family:'Liberation Sans', sans-serif;font-size:12.5px;line-height:12.5px;color:#2a2e36;font-weight:normal;transform:scaleX(0.8950);transform-origin:0 0;">USDCADf,M5</span>
<div style="left:1120px;top:478px;width:31px;height:17px;box-sizing:border-box;border:1px solid #7d8ba3;border-radius:3px;background:linear-gradient(#dbe4ef,#c7d3e2);box-shadow:inset 0 0 0 1px rgba(255,255,255,0.45);"></div>
<svg style="left:1120px;top:478px" width="31" height="17"><rect x="10.0" y="8.0" width="11" height="4.5" rx="1.5" fill="#fff" stroke="#3c4250" stroke-width="1.2"/></svg>
<div style="left:1153px;top:478px;width:31px;height:17px;box-sizing:border-box;border:1px solid #7d8ba3;border-radius:3px;background:linear-gradient(#dbe4ef,#c7d3e2);box-shadow:inset 0 0 0 1px rgba(255,255,255,0.45);"></div>
<svg style="left:1153px;top:478px" width="31" height="17"><rect x="10.5" y="4.0" width="10" height="8.5" rx="1.5" fill="#fff" stroke="#3c4250" stroke-width="1.3"/><rect x="13.3" y="6.7" width="4.4" height="2.8" fill="#3c4250"/></svg>
<div style="left:1186px;top:478px;width:31px;height:17px;box-sizing:border-box;border:1px solid #7d8ba3;border-radius:3px;background:linear-gradient(#dbe4ef,#c7d3e2);box-shadow:inset 0 0 0 1px rgba(255,255,255,0.45);"></div>
<svg style="left:1186px;top:478px" width="31" height="17"><path d="M11.9,5.9 L19.1,11.3 M19.1,5.9 L11.9,11.3" stroke="#2e3240" stroke-width="4.6" stroke-linecap="round"/><path d="M11.9,5.9 L19.1,11.3 M19.1,5.9 L11.9,11.3" stroke="#fff" stroke-width="2.4" stroke-linecap="round"/></svg>
<div style="left:621px;top:498px;width:598px;height:146px;background:#fff;"></div>
<div style="left:621px;top:498px;width:597px;height:1px;background:#6a6a6a;"></div>
<div style="left:621px;top:499px;width:596px;height:1px;background:#a0a0a0;"></div>
<div style="left:621px;top:498px;width:1px;height:145px;background:#6a6a6a;"></div>
<div style="left:622px;top:499px;width:1px;height:144px;background:#a0a0a0;"></div>
<div style="left:623px;top:500px;width:594px;height:143px;background:#fffbea;"></div>
<div style="left:626px;top:556px;width:548px;height:1px;background:#c0c0c0;"></div>
<div style="left:628px;top:503px;width:255px;height:99px;background:#008080;"></div>
<div style="left:633px;top:503px;width:1px;height:92px;background:#b8e8e8;"></div>
<div style="left:633px;top:595px;width:250px;height:1px;background:#b8e8e8;"></div>
<div style="left:882px;top:503px;width:1px;height:92px;background:#b8e8e8;"></div>
<span class="t" style="left:642.60px;top:505.33px;font-family:'Liberation Sans', sans-serif;font-size:12.6px;line-height:12.6px;color:#f2f2e8;font-weight:normal;transform:scaleX(1.0356);transform-origin:0 0;-webkit-text-stroke:0.05px currentColor;">Leverage: 500</span>
<span class="t" style="left:642.60px;top:523.83px;font-family:'Liberation Sans', sans-serif;font-size:12.6px;line-height:12.6px;color:#f2f2e8;font-weight:normal;transform:scaleX(1.1081);transform-origin:0 0;-webkit-text-stroke:0.05px currentColor;">VolumeOrderFlow: 1.50</span>
<span class="t" style="left:642.60px;top:542.33px;font-family:'Liberation Sans', sans-serif;font-size:12.6px;line-height:12.6px;color:#00f000;font-weight:normal;transform:scaleX(1.1005);transform-origin:0 0;-webkit-text-stroke:0.05px currentColor;">Work Demo Version</span>
<span class="t" style="left:664.50px;top:561.33px;font-family:'Liberation Sans', sans-serif;font-size:12.6px;line-height:12.6px;color:#00b4f4;font-weight:normal;transform:scaleX(1.0576);transform-origin:0 0;-webkit-text-stroke:0.05px currentColor;">Volume Scalping EA</span>
<span class="t" style="left:664.50px;top:580.63px;font-family:'Liberation Sans', sans-serif;font-size:12.6px;line-height:12.6px;color:#f2f2e8;font-weight:normal;transform:scaleX(1.1180);transform-origin:0 0;-webkit-text-stroke:0.05px currentColor;">Support: info@forex-ea.com</span>
<svg style="left:0px;top:0px" width="1275" height="986" shape-rendering="crispEdges"><rect x="626" y="527" width="1" height="5" fill="#2f4f4f"/><rect x="625" y="527" width="3" height="5" fill="#2f4f4f"/><rect x="626" y="528" width="1" height="3" fill="#f0e088"/><rect x="630" y="525" width="1" height="2" fill="#2f4f4f"/><rect x="629" y="526" width="3" height="1" fill="#2f4f4f"/><rect x="634" y="524" width="1" height="5" fill="#000000"/><rect x="633" y="525" width="3" height="3" fill="#000000"/><rect x="634" y="526" width="1" height="1" fill="#5a5a5a"/><rect x="638" y="525" width="1" height="4" fill="#2f4f4f"/><rect x="637" y="527" width="3" height="1" fill="#2f4f4f"/><rect x="642" y="524" width="1" height="5" fill="#000000"/><rect x="641" y="525" width="3" height="3" fill="#000000"/><rect x="642" y="526" width="1" height="1" fill="#5a5a5a"/><rect x="646" y="525" width="1" height="7" fill="#000000"/><rect x="645" y="526" width="3" height="3" fill="#000000"/><rect x="646" y="527" width="1" height="1" fill="#5a5a5a"/><rect x="650" y="526" width="1" height="5" fill="#2f4f4f"/><rect x="649" y="526" width="3" height="5" fill="#2f4f4f"/><rect x="650" y="527" width="1" height="3" fill="#f0e088"/><rect x="654" y="526" width="1" height="4" fill="#000000"/><rect x="653" y="526" width="3" height="4" fill="#000000"/><rect x="654" y="527" width="1" height="2" fill="#5a5a5a"/><rect x="658" y="522" width="1" height="7" fill="#2f4f4f"/><rect x="657" y="525" width="3" height="1" fill="#2f4f4f"/><rect x="662" y="522" width="1" height="6" fill="#000000"/><rect x="661" y="524" width="3" height="1" fill="#000000"/><rect x="666" y="515" width="1" height="12" fill="#2f4f4f"/><rect x="665" y="516" width="3" height="10" fill="#2f4f4f"/><rect x="666" y="517" width="1" height="8" fill="#f0e088"/><rect x="670" y="515" width="1" height="14" fill="#000000"/><rect x="669" y="515" width="3" height="13" fill="#000000"/><rect x="670" y="516" width="1" height="11" fill="#5a5a5a"/><rect x="674" y="527" width="1" height="16" fill="#000000"/><rect x="673" y="528" width="3" height="15" fill="#000000"/><rect x="674" y="529" width="1" height="13" fill="#5a5a5a"/><rect x="678" y="528" width="1" height="15" fill="#2f4f4f"/><rect x="677" y="529" width="3" height="13" fill="#2f4f4f"/><rect x="678" y="530" width="1" height="11" fill="#f0e088"/><rect x="682" y="524" width="1" height="6" fill="#2f4f4f"/><rect x="681" y="526" width="3" height="1" fill="#2f4f4f"/><rect x="686" y="525" width="1" height="5" fill="#000000"/><rect x="685" y="525" width="3" height="5" fill="#000000"/><rect x="686" y="526" width="1" height="3" fill="#5a5a5a"/><rect x="690" y="524" width="1" height="6" fill="#2f4f4f"/><rect x="689" y="526" width="3" height="3" fill="#2f4f4f"/><rect x="690" y="527" width="1" height="1" fill="#f0e088"/><rect x="694" y="525" width="1" height="10" fill="#000000"/><rect x="693" y="525" width="3" height="9" fill="#000000"/><rect x="694" y="526" width="1" height="7" fill="#5a5a5a"/><rect x="698" y="525" width="1" height="12" fill="#2f4f4f"/><rect x="697" y="525" width="3" height="9" fill="#2f4f4f"/><rect x="698" y="526" width="1" height="7" fill="#f0e088"/><rect x="702" y="518" width="1" height="9" fill="#2f4f4f"/><rect x="701" y="519" width="3" height="7" fill="#2f4f4f"/><rect x="702" y="520" width="1" height="5" fill="#f0e088"/><rect x="706" y="518" width="1" height="5" fill="#000000"/><rect x="705" y="519" width="3" height="3" fill="#000000"/><rect x="706" y="520" width="1" height="1" fill="#5a5a5a"/><rect x="710" y="521" width="1" height="9" fill="#000000"/><rect x="709" y="521" width="3" height="8" fill="#000000"/><rect x="710" y="522" width="1" height="6" fill="#5a5a5a"/><rect x="714" y="526" width="1" height="19" fill="#000000"/><rect x="713" y="527" width="3" height="18" fill="#000000"/><rect x="714" y="528" width="1" height="16" fill="#5a5a5a"/><rect x="718" y="538" width="1" height="14" fill="#000000"/><rect x="717" y="544" width="3" height="3" fill="#000000"/><rect x="718" y="545" width="1" height="1" fill="#5a5a5a"/><rect x="722" y="544" width="1" height="11" fill="#2f4f4f"/><rect x="721" y="545" width="3" height="5" fill="#2f4f4f"/><rect x="722" y="546" width="1" height="3" fill="#f0e088"/><rect x="726" y="539" width="1" height="16" fill="#000000"/><rect x="725" y="545" width="3" height="5" fill="#000000"/><rect x="726" y="546" width="1" height="3" fill="#5a5a5a"/><rect x="730" y="542" width="1" height="13" fill="#2f4f4f"/><rect x="729" y="542" width="3" height="8" fill="#2f4f4f"/><rect x="730" y="543" width="1" height="6" fill="#f0e088"/><rect x="734" y="535" width="1" height="8" fill="#2f4f4f"/><rect x="733" y="539" width="3" height="4" fill="#2f4f4f"/><rect x="734" y="540" width="1" height="2" fill="#f0e088"/><rect x="738" y="535" width="1" height="5" fill="#2f4f4f"/><rect x="737" y="535" width="3" height="5" fill="#2f4f4f"/><rect x="738" y="536" width="1" height="3" fill="#f0e088"/><rect x="742" y="535" width="1" height="30" fill="#000000"/><rect x="741" y="535" width="3" height="30" fill="#000000"/><rect x="742" y="536" width="1" height="28" fill="#5a5a5a"/><rect x="746" y="551" width="1" height="12" fill="#2f4f4f"/><rect x="745" y="557" width="3" height="6" fill="#2f4f4f"/><rect x="746" y="558" width="1" height="4" fill="#f0e088"/><rect x="750" y="557" width="1" height="36" fill="#000000"/><rect x="749" y="557" width="3" height="35" fill="#000000"/><rect x="750" y="558" width="1" height="33" fill="#5a5a5a"/><rect x="754" y="585" width="1" height="20" fill="#000000"/><rect x="753" y="588" width="3" height="10" fill="#000000"/><rect x="754" y="589" width="1" height="8" fill="#5a5a5a"/><rect x="758" y="595" width="1" height="14" fill="#000000"/><rect x="757" y="597" width="3" height="4" fill="#000000"/><rect x="758" y="598" width="1" height="2" fill="#5a5a5a"/><rect x="762" y="594" width="1" height="15" fill="#2f4f4f"/><rect x="761" y="594" width="3" height="8" fill="#2f4f4f"/><rect x="762" y="595" width="1" height="6" fill="#f0e088"/><rect x="766" y="585" width="1" height="10" fill="#2f4f4f"/><rect x="765" y="585" width="3" height="10" fill="#2f4f4f"/><rect x="766" y="586" width="1" height="8" fill="#f0e088"/><rect x="770" y="585" width="1" height="18" fill="#000000"/><rect x="769" y="585" width="3" height="13" fill="#000000"/><rect x="770" y="586" width="1" height="11" fill="#5a5a5a"/><rect x="774" y="591" width="1" height="8" fill="#000000"/><rect x="773" y="592" width="3" height="7" fill="#000000"/><rect x="774" y="593" width="1" height="5" fill="#5a5a5a"/><rect x="778" y="581" width="1" height="21" fill="#2f4f4f"/><rect x="777" y="581" width="3" height="16" fill="#2f4f4f"/><rect x="778" y="582" width="1" height="14" fill="#f0e088"/><rect x="782" y="574" width="1" height="18" fill="#2f4f4f"/><rect x="781" y="575" width="3" height="8" fill="#2f4f4f"/><rect x="782" y="576" width="1" height="6" fill="#f0e088"/><rect x="786" y="575" width="1" height="6" fill="#2f4f4f"/><rect x="785" y="577" width="3" height="1" fill="#2f4f4f"/><rect x="790" y="555" width="1" height="27" fill="#2f4f4f"/><rect x="789" y="565" width="3" height="11" fill="#2f4f4f"/><rect x="790" y="566" width="1" height="9" fill="#f0e088"/><rect x="794" y="558" width="1" height="39" fill="#000000"/><rect x="793" y="564" width="3" height="33" fill="#000000"/><rect x="794" y="565" width="1" height="31" fill="#5a5a5a"/><rect x="798" y="585" width="1" height="17" fill="#2f4f4f"/><rect x="797" y="586" width="3" height="9" fill="#2f4f4f"/><rect x="798" y="587" width="1" height="7" fill="#f0e088"/><rect x="802" y="572" width="1" height="12" fill="#2f4f4f"/><rect x="801" y="574" width="3" height="9" fill="#2f4f4f"/><rect x="802" y="575" width="1" height="7" fill="#f0e088"/><rect x="806" y="562" width="1" height="15" fill="#2f4f4f"/><rect x="805" y="568" width="3" height="8" fill="#2f4f4f"/><rect x="806" y="569" width="1" height="6" fill="#f0e088"/><rect x="810" y="564" width="1" height="9" fill="#2f4f4f"/><rect x="809" y="565" width="3" height="4" fill="#2f4f4f"/><rect x="810" y="566" width="1" height="2" fill="#f0e088"/><rect x="814" y="555" width="1" height="25" fill="#000000"/><rect x="813" y="564" width="3" height="16" fill="#000000"/><rect x="814" y="565" width="1" height="14" fill="#5a5a5a"/><rect x="818" y="568" width="1" height="12" fill="#2f4f4f"/><rect x="817" y="571" width="3" height="8" fill="#2f4f4f"/><rect x="818" y="572" width="1" height="6" fill="#f0e088"/><rect x="822" y="569" width="1" height="11" fill="#000000"/><rect x="821" y="570" width="3" height="10" fill="#000000"/><rect x="822" y="571" width="1" height="8" fill="#5a5a5a"/><rect x="826" y="576" width="1" height="9" fill="#000000"/><rect x="825" y="578" width="3" height="3" fill="#000000"/><rect x="826" y="579" width="1" height="1" fill="#5a5a5a"/><rect x="830" y="574" width="1" height="11" fill="#000000"/><rect x="829" y="581" width="3" height="3" fill="#000000"/><rect x="830" y="582" width="1" height="1" fill="#5a5a5a"/><rect x="834" y="570" width="1" height="15" fill="#2f4f4f"/><rect x="833" y="578" width="3" height="5" fill="#2f4f4f"/><rect x="834" y="579" width="1" height="3" fill="#f0e088"/><rect x="838" y="565" width="1" height="14" fill="#2f4f4f"/><rect x="837" y="572" width="3" height="7" fill="#2f4f4f"/><rect x="838" y="573" width="1" height="5" fill="#f0e088"/><rect x="842" y="572" width="1" height="7" fill="#000000"/><rect x="841" y="572" width="3" height="7" fill="#000000"/><rect x="842" y="573" width="1" height="5" fill="#5a5a5a"/><rect x="846" y="572" width="1" height="8" fill="#2f4f4f"/><rect x="845" y="574" width="3" height="5" fill="#2f4f4f"/><rect x="846" y="575" width="1" height="3" fill="#f0e088"/><rect x="850" y="574" width="1" height="8" fill="#000000"/><rect x="849" y="574" width="3" height="7" fill="#000000"/><rect x="850" y="575" width="1" height="5" fill="#5a5a5a"/><rect x="854" y="576" width="1" height="12" fill="#000000"/><rect x="853" y="582" width="3" height="1" fill="#000000"/><rect x="858" y="578" width="1" height="8" fill="#000000"/><rect x="857" y="580" width="3" height="6" fill="#000000"/><rect x="858" y="581" width="1" height="4" fill="#5a5a5a"/><rect x="862" y="581" width="1" height="5" fill="#2f4f4f"/><rect x="861" y="583" width="3" height="1" fill="#2f4f4f"/><rect x="866" y="581" width="1" height="11" fill="#000000"/><rect x="865" y="581" width="3" height="11" fill="#000000"/><rect x="866" y="582" width="1" height="9" fill="#5a5a5a"/><rect x="870" y="586" width="1" height="9" fill="#000000"/><rect x="869" y="591" width="3" height="4" fill="#000000"/><rect x="870" y="592" width="1" height="2" fill="#5a5a5a"/><rect x="874" y="586" width="1" height="11" fill="#2f4f4f"/><rect x="873" y="587" width="3" height="6" fill="#2f4f4f"/><rect x="874" y="588" width="1" height="4" fill="#f0e088"/><rect x="878" y="587" width="1" height="19" fill="#000000"/><rect x="877" y="587" width="3" height="13" fill="#000000"/><rect x="878" y="588" width="1" height="11" fill="#5a5a5a"/><rect x="882" y="598" width="1" height="5" fill="#000000"/><rect x="881" y="598" width="3" height="4" fill="#000000"/><rect x="882" y="599" width="1" height="2" fill="#5a5a5a"/><rect x="886" y="572" width="1" height="35" fill="#2f4f4f"/><rect x="885" y="586" width="3" height="16" fill="#2f4f4f"/><rect x="886" y="587" width="1" height="14" fill="#f0e088"/><rect x="890" y="582" width="1" height="27" fill="#000000"/><rect x="889" y="586" width="3" height="10" fill="#000000"/><rect x="890" y="587" width="1" height="8" fill="#5a5a5a"/><rect x="894" y="594" width="1" height="19" fill="#000000"/><rect x="893" y="594" width="3" height="13" fill="#000000"/><rect x="894" y="595" width="1" height="11" fill="#5a5a5a"/><rect x="898" y="603" width="1" height="10" fill="#2f4f4f"/><rect x="897" y="604" width="3" height="4" fill="#2f4f4f"/><rect x="898" y="605" width="1" height="2" fill="#f0e088"/><rect x="902" y="593" width="1" height="12" fill="#2f4f4f"/><rect x="901" y="594" width="3" height="10" fill="#2f4f4f"/><rect x="902" y="595" width="1" height="8" fill="#f0e088"/><rect x="906" y="577" width="1" height="20" fill="#2f4f4f"/><rect x="905" y="578" width="3" height="17" fill="#2f4f4f"/><rect x="906" y="579" width="1" height="15" fill="#f0e088"/><rect x="910" y="578" width="1" height="10" fill="#000000"/><rect x="909" y="578" width="3" height="8" fill="#000000"/><rect x="910" y="579" width="1" height="6" fill="#5a5a5a"/><rect x="914" y="585" width="1" height="11" fill="#000000"/><rect x="913" y="585" width="3" height="11" fill="#000000"/><rect x="914" y="586" width="1" height="9" fill="#5a5a5a"/><rect x="918" y="584" width="1" height="12" fill="#2f4f4f"/><rect x="917" y="591" width="3" height="4" fill="#2f4f4f"/><rect x="918" y="592" width="1" height="2" fill="#f0e088"/><rect x="922" y="564" width="1" height="28" fill="#2f4f4f"/><rect x="921" y="575" width="3" height="17" fill="#2f4f4f"/><rect x="922" y="576" width="1" height="15" fill="#f0e088"/><rect x="926" y="570" width="1" height="12" fill="#000000"/><rect x="925" y="576" width="3" height="4" fill="#000000"/><rect x="926" y="577" width="1" height="2" fill="#5a5a5a"/><rect x="930" y="571" width="1" height="11" fill="#2f4f4f"/><rect x="929" y="572" width="3" height="10" fill="#2f4f4f"/><rect x="930" y="573" width="1" height="8" fill="#f0e088"/><rect x="934" y="570" width="1" height="13" fill="#000000"/><rect x="933" y="572" width="3" height="4" fill="#000000"/><rect x="934" y="573" width="1" height="2" fill="#5a5a5a"/><rect x="938" y="568" width="1" height="8" fill="#2f4f4f"/><rect x="937" y="571" width="3" height="5" fill="#2f4f4f"/><rect x="938" y="572" width="1" height="3" fill="#f0e088"/><rect x="942" y="569" width="1" height="17" fill="#000000"/><rect x="941" y="572" width="3" height="14" fill="#000000"/><rect x="942" y="573" width="1" height="12" fill="#5a5a5a"/><rect x="946" y="578" width="1" height="8" fill="#2f4f4f"/><rect x="945" y="578" width="3" height="8" fill="#2f4f4f"/><rect x="946" y="579" width="1" height="6" fill="#f0e088"/><rect x="950" y="578" width="1" height="14" fill="#000000"/><rect x="949" y="578" width="3" height="13" fill="#000000"/><rect x="950" y="579" width="1" height="11" fill="#5a5a5a"/><rect x="954" y="587" width="1" height="13" fill="#000000"/><rect x="953" y="587" width="3" height="8" fill="#000000"/><rect x="954" y="588" width="1" height="6" fill="#5a5a5a"/><rect x="958" y="593" width="1" height="24" fill="#000000"/><rect x="957" y="594" width="3" height="15" fill="#000000"/><rect x="958" y="595" width="1" height="13" fill="#5a5a5a"/><rect x="962" y="592" width="1" height="18" fill="#2f4f4f"/><rect x="961" y="598" width="3" height="12" fill="#2f4f4f"/><rect x="962" y="599" width="1" height="10" fill="#f0e088"/><rect x="966" y="585" width="1" height="17" fill="#2f4f4f"/><rect x="965" y="586" width="3" height="15" fill="#2f4f4f"/><rect x="966" y="587" width="1" height="13" fill="#f0e088"/><rect x="970" y="576" width="1" height="19" fill="#2f4f4f"/><rect x="969" y="581" width="3" height="6" fill="#2f4f4f"/><rect x="970" y="582" width="1" height="4" fill="#f0e088"/><rect x="974" y="581" width="1" height="21" fill="#000000"/><rect x="973" y="581" width="3" height="14" fill="#000000"/><rect x="974" y="582" width="1" height="12" fill="#5a5a5a"/><rect x="978" y="580" width="1" height="16" fill="#2f4f4f"/><rect x="977" y="581" width="3" height="14" fill="#2f4f4f"/><rect x="978" y="582" width="1" height="12" fill="#f0e088"/><rect x="982" y="578" width="1" height="11" fill="#2f4f4f"/><rect x="981" y="580" width="3" height="3" fill="#2f4f4f"/><rect x="982" y="581" width="1" height="1" fill="#f0e088"/><rect x="986" y="577" width="1" height="13" fill="#000000"/><rect x="985" y="581" width="3" height="5" fill="#000000"/><rect x="986" y="582" width="1" height="3" fill="#5a5a5a"/><rect x="990" y="575" width="1" height="17" fill="#000000"/><rect x="989" y="583" width="3" height="1" fill="#000000"/><rect x="994" y="584" width="1" height="15" fill="#000000"/><rect x="993" y="585" width="3" height="7" fill="#000000"/><rect x="994" y="586" width="1" height="5" fill="#5a5a5a"/><rect x="998" y="592" width="1" height="20" fill="#000000"/><rect x="997" y="592" width="3" height="14" fill="#000000"/><rect x="998" y="593" width="1" height="12" fill="#5a5a5a"/><rect x="1002" y="595" width="1" height="20" fill="#000000"/><rect x="1001" y="605" width="3" height="10" fill="#000000"/><rect x="1002" y="606" width="1" height="8" fill="#5a5a5a"/><rect x="1006" y="608" width="1" height="12" fill="#2f4f4f"/><rect x="1005" y="609" width="3" height="6" fill="#2f4f4f"/><rect x="1006" y="610" width="1" height="4" fill="#f0e088"/><rect x="1010" y="601" width="1" height="14" fill="#2f4f4f"/><rect x="1009" y="603" width="3" height="7" fill="#2f4f4f"/><rect x="1010" y="604" width="1" height="5" fill="#f0e088"/><rect x="1014" y="589" width="1" height="18" fill="#2f4f4f"/><rect x="1013" y="599" width="3" height="5" fill="#2f4f4f"/><rect x="1014" y="600" width="1" height="3" fill="#f0e088"/><rect x="1018" y="589" width="1" height="11" fill="#2f4f4f"/><rect x="1017" y="589" width="3" height="11" fill="#2f4f4f"/><rect x="1018" y="590" width="1" height="9" fill="#f0e088"/><rect x="1022" y="579" width="1" height="18" fill="#000000"/><rect x="1021" y="588" width="3" height="1" fill="#000000"/><rect x="1026" y="579" width="1" height="13" fill="#2f4f4f"/><rect x="1025" y="581" width="3" height="7" fill="#2f4f4f"/><rect x="1026" y="582" width="1" height="5" fill="#f0e088"/><rect x="1030" y="580" width="1" height="12" fill="#000000"/><rect x="1029" y="581" width="3" height="5" fill="#000000"/><rect x="1030" y="582" width="1" height="3" fill="#5a5a5a"/><rect x="1034" y="570" width="1" height="19" fill="#2f4f4f"/><rect x="1033" y="576" width="3" height="10" fill="#2f4f4f"/><rect x="1034" y="577" width="1" height="8" fill="#f0e088"/><rect x="1038" y="562" width="1" height="16" fill="#2f4f4f"/><rect x="1037" y="562" width="3" height="16" fill="#2f4f4f"/><rect x="1038" y="563" width="1" height="14" fill="#f0e088"/><rect x="1042" y="544" width="1" height="21" fill="#2f4f4f"/><rect x="1041" y="548" width="3" height="16" fill="#2f4f4f"/><rect x="1042" y="549" width="1" height="14" fill="#f0e088"/><rect x="1046" y="539" width="1" height="24" fill="#000000"/><rect x="1045" y="548" width="3" height="9" fill="#000000"/><rect x="1046" y="549" width="1" height="7" fill="#5a5a5a"/><rect x="1050" y="547" width="1" height="16" fill="#000000"/><rect x="1049" y="556" width="3" height="7" fill="#000000"/><rect x="1050" y="557" width="1" height="5" fill="#5a5a5a"/><rect x="1054" y="554" width="1" height="11" fill="#2f4f4f"/><rect x="1053" y="555" width="3" height="8" fill="#2f4f4f"/><rect x="1054" y="556" width="1" height="6" fill="#f0e088"/></svg>
<div style="left:625px;top:502px;width:550px;height:1px;background:#000;"></div>
<div style="left:625px;top:622px;width:550px;height:1px;background:#000;"></div>
<div style="left:625px;top:502px;width:1px;height:120px;background:#000;"></div>
<div style="left:1174px;top:502px;width:1px;height:120px;background:#000;"></div>
<svg style="left:629px;top:508px" width="8" height="6"><path d="M0,0 H7 L3.5,5 Z" fill="#000"/></svg>
<span class="t" style="left:641.50px;top:506.08px;font-family:'Liberation Sans', sans-serif;font-size:9.8px;line-height:9.8px;color:#000;font-weight:normal;transform:scaleX(0.9579);transform-origin:0 0;-webkit-text-stroke:0.08px currentColor;">USDCADf,M5  1.24034 1.24053 1.24028 1.24050</span>
<svg style="left:1058px;top:503px" width="9" height="5"><path d="M0,0 H8 L4,4 Z" fill="#a0a0a0"/></svg>
<span class="t" style="left:1055.80px;top:507.08px;font-family:'Liberation Sans', sans-serif;font-size:9.8px;line-height:9.8px;color:#000;font-weight:normal;transform:scaleX(0.9207);transform-origin:0 0;-webkit-text-stroke:0.08px currentColor;">Volume_Scalping_Ea_fix</span>
<svg style="left:1156px;top:504px" width="14" height="14"><circle cx="7.5" cy="7" r="5.3" fill="none" stroke="#000" stroke-width="1.1"/><rect x="5.2" y="4.6" width="1.2" height="1.6" fill="#000"/><rect x="8.6" y="4.6" width="1.2" height="1.6" fill="#000"/><path d="M4.6,7.8 Q7.5,11.2 10.4,7.8" fill="none" stroke="#000" stroke-width="1.1"/></svg>
<div style="left:1175px;top:518px;width:3px;height:1px;background:#000;"></div>
<span class="t" style="left:1180.40px;top:514.08px;font-family:'Liberation Sans', sans-serif;font-size:9.8px;line-height:9.8px;color:#000;font-weight:normal;transform:scaleX(0.9203);transform-origin:0 0;-webkit-text-stroke:0.12px currentColor;">1.24150</span>
<div style="left:1175px;top:552px;width:3px;height:1px;background:#000;"></div>
<span class="t" style="left:1180.40px;top:547.58px;font-family:'Liberation Sans', sans-serif;font-size:9.8px;line-height:9.8px;color:#000;font-weight:normal;transform:scaleX(0.9203);transform-origin:0 0;-webkit-text-stroke:0.12px currentColor;">1.24060</span>
<div style="left:1175px;top:585px;width:3px;height:1px;background:#000;"></div>
<span class="t" style="left:1180.40px;top:580.88px;font-family:'Liberation Sans', sans-serif;font-size:9.8px;line-height:9.8px;color:#000;font-weight:normal;transform:scaleX(0.9203);transform-origin:0 0;-webkit-text-stroke:0.12px currentColor;">1.23970</span>
<div style="left:1175px;top:618px;width:3px;height:1px;background:#000;"></div>
<span class="t" style="left:1180.40px;top:613.78px;font-family:'Liberation Sans', sans-serif;font-size:9.8px;line-height:9.8px;color:#000;font-weight:normal;transform:scaleX(0.9203);transform-origin:0 0;-webkit-text-stroke:0.12px currentColor;">1.23880</span>
<div style="left:1176px;top:550px;width:41px;height:10px;background:#000;"></div>
<span class="t" style="left:1180.40px;top:551.08px;font-family:'Liberation Sans', sans-serif;font-size:9.8px;line-height:9.8px;color:#fff;font-weight:normal;transform:scaleX(0.9203);transform-origin:0 0;-webkit-text-stroke:0.05px currentColor;">1.24050</span>
<div style="left:626px;top:622px;width:1px;height:4px;background:#000;"></div>
<span class="t" style="left:625.20px;top:627.22px;font-family:'Liberation Sans', sans-serif;font-size:9.5px;line-height:9.5px;color:#000;font-weight:normal;transform:scaleX(0.9566);transform-origin:0 0;-webkit-text-stroke:0.12px currentColor;">5 Sep 2017</span>
<div style="left:690px;top:622px;width:1px;height:4px;background:#000;"></div>
<span class="t" style="left:689.20px;top:627.22px;font-family:'Liberation Sans', sans-serif;font-size:9.5px;line-height:9.5px;color:#000;font-weight:normal;transform:scaleX(0.9620);transform-origin:0 0;-webkit-text-stroke:0.12px currentColor;">5 Sep 03:25</span>
<div style="left:754px;top:622px;width:1px;height:4px;background:#000;"></div>
<span class="t" style="left:753.20px;top:627.22px;font-family:'Liberation Sans', sans-serif;font-size:9.5px;line-height:9.5px;color:#000;font-weight:normal;transform:scaleX(0.9756);transform-origin:0 0;-webkit-text-stroke:0.12px currentColor;">5 Sep 04:45</span>
<div style="left:818px;top:622px;width:1px;height:4px;background:#000;"></div>
<span class="t" style="left:817.20px;top:627.22px;font-family:'Liberation Sans', sans-serif;font-size:9.5px;line-height:9.5px;color:#000;font-weight:normal;transform:scaleX(0.9756);transform-origin:0 0;-webkit-text-stroke:0.12px currentColor;">5 Sep 06:05</span>
<div style="left:882px;top:622px;width:1px;height:4px;background:#000;"></div>
<span class="t" style="left:881.20px;top:627.22px;font-family:'Liberation Sans', sans-serif;font-size:9.5px;line-height:9.5px;color:#000;font-weight:normal;transform:scaleX(0.9756);transform-origin:0 0;-webkit-text-stroke:0.12px currentColor;">5 Sep 07:25</span>
<div style="left:946px;top:622px;width:1px;height:4px;background:#000;"></div>
<span class="t" style="left:945.20px;top:627.22px;font-family:'Liberation Sans', sans-serif;font-size:9.5px;line-height:9.5px;color:#000;font-weight:normal;transform:scaleX(0.9561);transform-origin:0 0;-webkit-text-stroke:0.12px currentColor;">5 Sep 08:45</span>
<div style="left:1010px;top:622px;width:1px;height:4px;background:#000;"></div>
<span class="t" style="left:1009.20px;top:627.22px;font-family:'Liberation Sans', sans-serif;font-size:9.5px;line-height:9.5px;color:#000;font-weight:normal;transform:scaleX(0.9659);transform-origin:0 0;-webkit-text-stroke:0.12px currentColor;">5 Sep 10:05</span>
<div style="left:0px;top:714px;width:1275px;height:1px;background:#f4f4f4;"></div>
<div style="left:0px;top:715px;width:1275px;height:1px;background:#000;"></div>
<div style="left:0px;top:716px;width:1275px;height:1px;background:#3a3a3a;"></div>
<div style="left:0px;top:717px;width:1275px;height:18px;background:#ededed;"></div>
<div style="left:355px;top:715px;width:92px;height:20px;box-sizing:border-box;background:#fbfbfb;border:1.5px solid #000;border-top:none;"></div>
<span class="t" style="left:13.40px;top:720.22px;font-family:'Liberation Sans', sans-serif;font-size:12.4px;line-height:12.4px;color:#6a6a6a;font-weight:normal;transform:scaleX(0.8636);transform-origin:0 0;">EURUSDf,M5</span>
<span class="t" style="left:103.00px;top:720.22px;font-family:'Liberation Sans', sans-serif;font-size:12.4px;line-height:12.4px;color:#6a6a6a;font-weight:normal;transform:scaleX(0.8831);transform-origin:0 0;">GBPUSDf,M5</span>
<span class="t" style="left:195.20px;top:720.22px;font-family:'Liberation Sans', sans-serif;font-size:12.4px;line-height:12.4px;color:#6a6a6a;font-weight:normal;transform:scaleX(0.8659);transform-origin:0 0;">USDJPYf,M5</span>
<span class="t" style="left:281.30px;top:720.22px;font-family:'Liberation Sans', sans-serif;font-size:12.4px;line-height:12.4px;color:#6a6a6a;font-weight:normal;transform:scaleX(0.8522);transform-origin:0 0;">EURJPYf,M5</span>
<div style="left:91.5px;top:719px;width:1px;height:14px;background:#7a7a7a;"></div>
<div style="left:183.5px;top:719px;width:1px;height:14px;background:#7a7a7a;"></div>
<div style="left:271px;top:719px;width:1px;height:14px;background:#7a7a7a;"></div>
<span class="t" style="left:366.00px;top:720.22px;font-family:'Liberation Sans', sans-serif;font-size:12.4px;line-height:12.4px;color:#000;font-weight:normal;transform:scaleX(0.9160);transform-origin:0 0;">USDCADf,M5</span>
<svg style="left:1243px;top:720px" width="30" height="10" viewBox="0 0 30 10"><path d="M5,1 L1.5,5 L5,9 Z M21,1 L24.5,5 L21,9 Z" fill="#a0a0a0"/></svg>
<div style="left:0px;top:735px;width:1275px;height:4px;background:#f5f5f5;"></div>
<div style="left:0px;top:739px;width:12px;height:219px;background:#f0f0f0;"></div>
<svg style="left:0px;top:741px" width="10" height="9" viewBox="0 0 10 9"><path d="M1.5,1.5 L7.5,7.5 M7.5,1.5 L1.5,7.5" stroke="#000" stroke-width="1.8"/></svg>
<div style="left:0px;top:754px;width:11px;height:204px;background:#98b2d2;"></div>
<div style="left:-20.5px;top:921px;width:52px;height:14px;transform:rotate(-90deg);transform-origin:26px 7px;"><span class="t" style="left:0;top:0;font-family:'Liberation Sans',sans-serif;font-size:11px;line-height:14px;color:#1a1a1a;transform:scaleX(0.95);transform-origin:0 0;">Терминал</span></div>
<div style="left:12px;top:740px;width:1263px;height:195px;background:#fff;"></div>
<div style="left:12px;top:740px;width:1263px;height:1px;background:#a8a8a8;"></div>
<div style="left:12px;top:740px;width:1px;height:195px;background:#a8a8a8;"></div>
<div style="left:13px;top:741px;width:1262px;height:22px;background:linear-gradient(#ffffff,#f3f3f3);"></div>
<div style="left:13px;top:763px;width:1262px;height:1px;background:#d5d5d5;"></div>
<div style="left:13px;top:764px;width:1262px;height:1px;background:#ffffff;"></div>
<div style="left:13px;top:765px;width:1262px;height:1px;background:#d5d5d5;"></div>
<div style="left:99px;top:741px;width:1px;height:22px;background:#e2e2e2;"></div>
<div style="left:248px;top:741px;width:1px;height:22px;background:#e2e2e2;"></div>
<div style="left:315px;top:741px;width:1px;height:22px;background:#e2e2e2;"></div>
<div style="left:369px;top:741px;width:1px;height:22px;background:#e2e2e2;"></div>
<div style="left:436px;top:741px;width:1px;height:22px;background:#e2e2e2;"></div>
<div style="left:503px;top:741px;width:1px;height:22px;background:#e2e2e2;"></div>
<div style="left:570px;top:741px;width:1px;height:22px;background:#e2e2e2;"></div>
<div style="left:637px;top:741px;width:1px;height:22px;background:#e2e2e2;"></div>
<div style="left:786px;top:741px;width:1px;height:22px;background:#e2e2e2;"></div>
<div style="left:853px;top:741px;width:1px;height:22px;background:#e2e2e2;"></div>
<div style="left:920px;top:741px;width:1px;height:22px;background:#e2e2e2;"></div>
<div style="left:987px;top:741px;width:1px;height:22px;background:#e2e2e2;"></div>
<div style="left:1061px;top:741px;width:1px;height:22px;background:#e2e2e2;"></div>
<span class="t" style="left:19.40px;top:746.62px;font-family:'Liberation Sans', sans-serif;font-size:12.4px;line-height:12.4px;color:#101010;font-weight:normal;transform:scaleX(0.9016);transform-origin:0 0;">Ордер</span>
<span class="t" style="left:209.30px;top:746.62px;font-family:'Liberation Sans', sans-serif;font-size:12.4px;line-height:12.4px;color:#101010;font-weight:normal;transform:scaleX(0.9200);transform-origin:0 0;">Время</span>
<span class="t" style="left:290.50px;top:746.62px;font-family:'Liberation Sans', sans-serif;font-size:12.4px;line-height:12.4px;color:#101010;font-weight:normal;transform:scaleX(0.9731);transform-origin:0 0;">Тип</span>
<span class="t" style="left:327.20px;top:746.62px;font-family:'Liberation Sans', sans-serif;font-size:12.4px;line-height:12.4px;color:#101010;font-weight:normal;transform:scaleX(0.9472);transform-origin:0 0;">Объем</span>
<span class="t" style="left:388.30px;top:746.62px;font-family:'Liberation Sans', sans-serif;font-size:12.4px;line-height:12.4px;color:#101010;font-weight:normal;transform:scaleX(0.9622);transform-origin:0 0;">Символ</span>
<span class="t" style="left:471.70px;top:746.62px;font-family:'Liberation Sans', sans-serif;font-size:12.4px;line-height:12.4px;color:#101010;font-weight:normal;transform:scaleX(0.9095);transform-origin:0 0;">Цена</span>
<span class="t" style="left:537.70px;top:746.62px;font-family:'Liberation Sans', sans-serif;font-size:12.4px;line-height:12.4px;color:#101010;font-weight:normal;transform:scaleX(1.1066);transform-origin:0 0;">S / L</span>
<span class="t" style="left:605.40px;top:746.62px;font-family:'Liberation Sans', sans-serif;font-size:12.4px;line-height:12.4px;color:#101010;font-weight:normal;transform:scaleX(1.0641);transform-origin:0 0;">T / P</span>
<span class="t" style="left:747.00px;top:746.62px;font-family:'Liberation Sans', sans-serif;font-size:12.4px;line-height:12.4px;color:#101010;font-weight:normal;transform:scaleX(0.9388);transform-origin:0 0;">Время</span>
<span class="t" style="left:821.80px;top:746.62px;font-family:'Liberation Sans', sans-serif;font-size:12.4px;line-height:12.4px;color:#101010;font-weight:normal;transform:scaleX(0.9128);transform-origin:0 0;">Цена</span>
<span class="t" style="left:861.00px;top:746.62px;font-family:'Liberation Sans', sans-serif;font-size:12.4px;line-height:12.4px;color:#101010;font-weight:normal;transform:scaleX(0.9788);transform-origin:0 0;">Комиссия</span>
<span class="t" style="left:956.00px;top:746.62px;font-family:'Liberation Sans', sans-serif;font-size:12.4px;line-height:12.4px;color:#101010;font-weight:normal;transform:scaleX(0.9345);transform-origin:0 0;">Своп</span>
<span class="t" style="left:1005.90px;top:746.62px;font-family:'Liberation Sans', sans-serif;font-size:12.4px;line-height:12.4px;color:#101010;font-weight:normal;transform:scaleX(0.9751);transform-origin:0 0;">Прибыль</span>
<span class="t" style="left:1190.00px;top:746.62px;font-family:'Liberation Sans', sans-serif;font-size:12.4px;line-height:12.4px;color:#101010;font-weight:normal;transform:scaleX(0.9891);transform-origin:0 0;">Комментарий</span>
<svg style="left:66px;top:748px" width="8" height="10" viewBox="0 0 8 10"><path d="M2,8 L6,2" stroke="#909090" stroke-width="1"/></svg>
<div style="left:13px;top:766px;width:1262px;height:20px;background:#ffffff;"></div>
<div style="left:13px;top:785px;width:1262px;height:1px;background:#d8d8d8;"></div>
<div style="left:99px;top:766px;width:1px;height:20px;background:#d8d8d8;"></div>
<div style="left:248px;top:766px;width:1px;height:20px;background:#d8d8d8;"></div>
<div style="left:315px;top:766px;width:1px;height:20px;background:#d8d8d8;"></div>
<div style="left:369px;top:766px;width:1px;height:20px;background:#d8d8d8;"></div>
<div style="left:436px;top:766px;width:1px;height:20px;background:#d8d8d8;"></div>
<div style="left:503px;top:766px;width:1px;height:20px;background:#d8d8d8;"></div>
<div style="left:570px;top:766px;width:1px;height:20px;background:#d8d8d8;"></div>
<div style="left:637px;top:766px;width:1px;height:20px;background:#d8d8d8;"></div>
<div style="left:786px;top:766px;width:1px;height:20px;background:#d8d8d8;"></div>
<div style="left:853px;top:766px;width:1px;height:20px;background:#d8d8d8;"></div>
<div style="left:920px;top:766px;width:1px;height:20px;background:#d8d8d8;"></div>
<div style="left:987px;top:766px;width:1px;height:20px;background:#d8d8d8;"></div>
<div style="left:1061px;top:766px;width:1px;height:20px;background:#d8d8d8;"></div>
<div style="left:316px;top:766px;width:671px;height:19px;background:#ffffff;"></div>
<svg style="left:15px;top:768px" width="14" height="15" viewBox="0 0 14 15"><rect x="1.5" y="0.5" width="11" height="12.5" rx="1" fill="#fafafa" stroke="#707070"/><path d="M7,2.5 L11,6.5 H8.8 V10 H5.2 V6.5 H3 Z" fill="#1aa81a"/></svg>
<span class="t" style="left:34.50px;top:769.02px;font-family:'Liberation Sans', sans-serif;font-size:12.2px;line-height:12.2px;color:#000;font-weight:normal;transform:scaleX(0.8758);transform-origin:0 0;">90368157</span>
<span class="t" style="left:146.33px;top:769.02px;font-family:'Liberation Sans', sans-serif;font-size:12.2px;line-height:12.2px;color:#000;font-weight:normal;transform:scaleX(0.8850);transform-origin:0 0;">2017.09.01 18:36:29</span>
<span class="t" style="left:271.28px;top:769.02px;font-family:'Liberation Sans', sans-serif;font-size:12.2px;line-height:12.2px;color:#000;font-weight:normal;transform:scaleX(0.9700);transform-origin:0 0;">balance</span>
<span class="t" style="left:1016.70px;top:769.02px;font-family:'Liberation Sans', sans-serif;font-size:12.2px;line-height:12.2px;color:#000;font-weight:normal;transform:scaleX(0.8850);transform-origin:0 0;">1 000.00</span>
<span class="t" style="left:1103.56px;top:769.02px;font-family:'Liberation Sans', sans-serif;font-size:12.2px;line-height:12.2px;color:#000;font-weight:normal;transform:scaleX(0.9100);transform-origin:0 0;">D#251838: WM(Z979465871955)</span>
<div style="left:13px;top:786px;width:1262px;height:20px;background:#ebebeb;"></div>
<div style="left:13px;top:805px;width:1262px;height:1px;background:#d8d8d8;"></div>
<div style="left:99px;top:786px;width:1px;height:20px;background:#d8d8d8;"></div>
<div style="left:248px;top:786px;width:1px;height:20px;background:#d8d8d8;"></div>
<div style="left:315px;top:786px;width:1px;height:20px;background:#d8d8d8;"></div>
<div style="left:369px;top:786px;width:1px;height:20px;background:#d8d8d8;"></div>
<div style="left:436px;top:786px;width:1px;height:20px;background:#d8d8d8;"></div>
<div style="left:503px;top:786px;width:1px;height:20px;background:#d8d8d8;"></div>
<div style="left:570px;top:786px;width:1px;height:20px;background:#d8d8d8;"></div>
<div style="left:637px;top:786px;width:1px;height:20px;background:#d8d8d8;"></div>
<div style="left:786px;top:786px;width:1px;height:20px;background:#d8d8d8;"></div>
<div style="left:853px;top:786px;width:1px;height:20px;background:#d8d8d8;"></div>
<div style="left:920px;top:786px;width:1px;height:20px;background:#d8d8d8;"></div>
<div style="left:987px;top:786px;width:1px;height:20px;background:#d8d8d8;"></div>
<div style="left:1061px;top:786px;width:1px;height:20px;background:#d8d8d8;"></div>
<svg style="left:15px;top:787px" width="16" height="17" viewBox="0 0 16 17"><path d="M1.5,1.5 H8.5 L11.5,4.5 V14 H1.5 Z" fill="#fafafa" stroke="#707070"/><path d="M8.5,1.5 V4.5 H11.5" fill="none" stroke="#707070"/><circle cx="11.5" cy="13" r="3.3" fill="#e0401a"/></svg>
<span class="t" style="left:34.50px;top:789.02px;font-family:'Liberation Sans', sans-serif;font-size:12.2px;line-height:12.2px;color:#000;font-weight:normal;transform:scaleX(0.8758);transform-origin:0 0;">90395458</span>
<span class="t" style="left:146.33px;top:789.02px;font-family:'Liberation Sans', sans-serif;font-size:12.2px;line-height:12.2px;color:#000;font-weight:normal;transform:scaleX(0.8850);transform-origin:0 0;">2017.09.04 09:02:45</span>
<span class="t" style="left:294.95px;top:789.02px;font-family:'Liberation Sans', sans-serif;font-size:12.2px;line-height:12.2px;color:#000;font-weight:normal;transform:scaleX(0.9700);transform-origin:0 0;">sell</span>
<span class="t" style="left:345.40px;top:789.02px;font-family:'Liberation Sans', sans-serif;font-size:12.2px;line-height:12.2px;color:#000;font-weight:normal;transform:scaleX(0.8850);transform-origin:0 0;">0.16</span>
<span class="t" style="left:396.03px;top:789.02px;font-family:'Liberation Sans', sans-serif;font-size:12.2px;line-height:12.2px;color:#000;font-weight:normal;transform:scaleX(0.9700);transform-origin:0 0;">usdjpyf</span>
<span class="t" style="left:461.60px;top:789.02px;font-family:'Liberation Sans', sans-serif;font-size:12.2px;line-height:12.2px;color:#000;font-weight:normal;transform:scaleX(0.8850);transform-origin:0 0;">109.486</span>
<span class="t" style="left:540.01px;top:789.02px;font-family:'Liberation Sans', sans-serif;font-size:12.2px;line-height:12.2px;color:#000;font-weight:normal;transform:scaleX(0.8850);transform-origin:0 0;">0.000</span>
<span class="t" style="left:607.01px;top:789.02px;font-family:'Liberation Sans', sans-serif;font-size:12.2px;line-height:12.2px;color:#000;font-weight:normal;transform:scaleX(0.8850);transform-origin:0 0;">0.000</span>
<span class="t" style="left:684.73px;top:789.02px;font-family:'Liberation Sans', sans-serif;font-size:12.2px;line-height:12.2px;color:#000;font-weight:normal;transform:scaleX(0.8850);transform-origin:0 0;">2017.09.04 09:02:46</span>
<span class="t" style="left:811.80px;top:789.02px;font-family:'Liberation Sans', sans-serif;font-size:12.2px;line-height:12.2px;color:#000;font-weight:normal;transform:scaleX(0.8850);transform-origin:0 0;">109.519</span>
<span class="t" style="left:896.00px;top:789.02px;font-family:'Liberation Sans', sans-serif;font-size:12.2px;line-height:12.2px;color:#000;font-weight:normal;transform:scaleX(0.8850);transform-origin:0 0;">0.00</span>
<span class="t" style="left:963.40px;top:789.02px;font-family:'Liberation Sans', sans-serif;font-size:12.2px;line-height:12.2px;color:#000;font-weight:normal;transform:scaleX(0.8850);transform-origin:0 0;">0.00</span>
<span class="t" style="left:1034.11px;top:789.02px;font-family:'Liberation Sans', sans-serif;font-size:12.2px;line-height:12.2px;color:#000;font-weight:normal;transform:scaleX(0.8850);transform-origin:0 0;">-4.82</span>
<span class="t" style="left:1253.80px;top:789.02px;font-family:'Liberation Sans', sans-serif;font-size:12.2px;line-height:12.2px;color:#000;font-weight:normal;transform:scaleX(0.8850);transform-origin:0 0;">0.1</span>
<div style="left:13px;top:806px;width:1262px;height:20px;background:#ffffff;"></div>
<div style="left:13px;top:825px;width:1262px;height:1px;background:#d8d8d8;"></div>
<div style="left:99px;top:806px;width:1px;height:20px;background:#d8d8d8;"></div>
<div style="left:248px;top:806px;width:1px;height:20px;background:#d8d8d8;"></div>
<div style="left:315px;top:806px;width:1px;height:20px;background:#d8d8d8;"></div>
<div style="left:369px;top:806px;width:1px;height:20px;background:#d8d8d8;"></div>
<div style="left:436px;top:806px;width:1px;height:20px;background:#d8d8d8;"></div>
<div style="left:503px;top:806px;width:1px;height:20px;background:#d8d8d8;"></div>
<div style="left:570px;top:806px;width:1px;height:20px;background:#d8d8d8;"></div>
<div style="left:637px;top:806px;width:1px;height:20px;background:#d8d8d8;"></div>
<div style="left:786px;top:806px;width:1px;height:20px;background:#d8d8d8;"></div>
<div style="left:853px;top:806px;width:1px;height:20px;background:#d8d8d8;"></div>
<div style="left:920px;top:806px;width:1px;height:20px;background:#d8d8d8;"></div>
<div style="left:987px;top:806px;width:1px;height:20px;background:#d8d8d8;"></div>
<div style="left:1061px;top:806px;width:1px;height:20px;background:#d8d8d8;"></div>
<svg style="left:15px;top:807px" width="16" height="17" viewBox="0 0 16 17"><path d="M1.5,1.5 H8.5 L11.5,4.5 V14 H1.5 Z" fill="#fafafa" stroke="#707070"/><path d="M8.5,1.5 V4.5 H11.5" fill="none" stroke="#707070"/><circle cx="11.5" cy="13" r="3.3" fill="#e0401a"/></svg>
<span class="t" style="left:34.50px;top:809.02px;font-family:'Liberation Sans', sans-serif;font-size:12.2px;line-height:12.2px;color:#000;font-weight:normal;transform:scaleX(0.8907);transform-origin:0 0;">90443113</span>
<span class="t" style="left:146.33px;top:809.02px;font-family:'Liberation Sans', sans-serif;font-size:12.2px;line-height:12.2px;color:#000;font-weight:normal;transform:scaleX(0.8850);transform-origin:0 0;">2017.09.05 05:18:21</span>
<span class="t" style="left:294.95px;top:809.02px;font-family:'Liberation Sans', sans-serif;font-size:12.2px;line-height:12.2px;color:#000;font-weight:normal;transform:scaleX(0.9700);transform-origin:0 0;">sell</span>
<span class="t" style="left:345.40px;top:809.02px;font-family:'Liberation Sans', sans-serif;font-size:12.2px;line-height:12.2px;color:#000;font-weight:normal;transform:scaleX(0.8850);transform-origin:0 0;">0.16</span>
<span class="t" style="left:398.00px;top:809.02px;font-family:'Liberation Sans', sans-serif;font-size:12.2px;line-height:12.2px;color:#000;font-weight:normal;transform:scaleX(0.9700);transform-origin:0 0;">eurjpyf</span>
<span class="t" style="left:461.60px;top:809.02px;font-family:'Liberation Sans', sans-serif;font-size:12.2px;line-height:12.2px;color:#000;font-weight:normal;transform:scaleX(0.8850);transform-origin:0 0;">130.014</span>
<span class="t" style="left:540.01px;top:809.02px;font-family:'Liberation Sans', sans-serif;font-size:12.2px;line-height:12.2px;color:#000;font-weight:normal;transform:scaleX(0.8850);transform-origin:0 0;">0.000</span>
<span class="t" style="left:607.01px;top:809.02px;font-family:'Liberation Sans', sans-serif;font-size:12.2px;line-height:12.2px;color:#000;font-weight:normal;transform:scaleX(0.8850);transform-origin:0 0;">0.000</span>
<span class="t" style="left:684.73px;top:809.02px;font-family:'Liberation Sans', sans-serif;font-size:12.2px;line-height:12.2px;color:#000;font-weight:normal;transform:scaleX(0.8850);transform-origin:0 0;">2017.09.05 05:38:27</span>
<span class="t" style="left:811.80px;top:809.02px;font-family:'Liberation Sans', sans-serif;font-size:12.2px;line-height:12.2px;color:#000;font-weight:normal;transform:scaleX(0.8850);transform-origin:0 0;">130.182</span>
<span class="t" style="left:896.00px;top:809.02px;font-family:'Liberation Sans', sans-serif;font-size:12.2px;line-height:12.2px;color:#000;font-weight:normal;transform:scaleX(0.8850);transform-origin:0 0;">0.00</span>
<span class="t" style="left:963.40px;top:809.02px;font-family:'Liberation Sans', sans-serif;font-size:12.2px;line-height:12.2px;color:#000;font-weight:normal;transform:scaleX(0.8850);transform-origin:0 0;">0.00</span>
<span class="t" style="left:1028.11px;top:809.02px;font-family:'Liberation Sans', sans-serif;font-size:12.2px;line-height:12.2px;color:#000;font-weight:normal;transform:scaleX(0.8850);transform-origin:0 0;">-24.58</span>
<span class="t" style="left:1253.80px;top:809.02px;font-family:'Liberation Sans', sans-serif;font-size:12.2px;line-height:12.2px;color:#000;font-weight:normal;transform:scaleX(0.8850);transform-origin:0 0;">0.5</span>
<div style="left:13px;top:826px;width:1262px;height:20px;background:#ebebeb;"></div>
<div style="left:13px;top:845px;width:1262px;height:1px;background:#d8d8d8;"></div>
<div style="left:99px;top:826px;width:1px;height:20px;background:#d8d8d8;"></div>
<div style="left:248px;top:826px;width:1px;height:20px;background:#d8d8d8;"></div>
<div style="left:315px;top:826px;width:1px;height:20px;background:#d8d8d8;"></div>
<div style="left:369px;top:826px;width:1px;height:20px;background:#d8d8d8;"></div>
<div style="left:436px;top:826px;width:1px;height:20px;background:#d8d8d8;"></div>
<div style="left:503px;top:826px;width:1px;height:20px;background:#d8d8d8;"></div>
<div style="left:570px;top:826px;width:1px;height:20px;background:#d8d8d8;"></div>
<div style="left:637px;top:826px;width:1px;height:20px;background:#d8d8d8;"></div>
<div style="left:786px;top:826px;width:1px;height:20px;background:#d8d8d8;"></div>
<div style="left:853px;top:826px;width:1px;height:20px;background:#d8d8d8;"></div>
<div style="left:920px;top:826px;width:1px;height:20px;background:#d8d8d8;"></div>
<div style="left:987px;top:826px;width:1px;height:20px;background:#d8d8d8;"></div>
<div style="left:1061px;top:826px;width:1px;height:20px;background:#d8d8d8;"></div>
<svg style="left:15px;top:827px" width="16" height="17" viewBox="0 0 16 17"><path d="M1.5,1.5 H8.5 L11.5,4.5 V14 H1.5 Z" fill="#fafafa" stroke="#707070"/><path d="M8.5,1.5 V4.5 H11.5" fill="none" stroke="#707070"/><circle cx="11.5" cy="13" r="3.3" fill="#e0401a"/></svg>
<span class="t" style="left:34.50px;top:829.02px;font-family:'Liberation Sans', sans-serif;font-size:12.2px;line-height:12.2px;color:#000;font-weight:normal;transform:scaleX(0.8758);transform-origin:0 0;">90443120</span>
<span class="t" style="left:146.33px;top:829.02px;font-family:'Liberation Sans', sans-serif;font-size:12.2px;line-height:12.2px;color:#000;font-weight:normal;transform:scaleX(0.8850);transform-origin:0 0;">2017.09.05 05:18:21</span>
<span class="t" style="left:294.95px;top:829.02px;font-family:'Liberation Sans', sans-serif;font-size:12.2px;line-height:12.2px;color:#000;font-weight:normal;transform:scaleX(0.9700);transform-origin:0 0;">sell</span>
<span class="t" style="left:345.40px;top:829.02px;font-family:'Liberation Sans', sans-serif;font-size:12.2px;line-height:12.2px;color:#000;font-weight:normal;transform:scaleX(0.8850);transform-origin:0 0;">0.16</span>
<span class="t" style="left:396.03px;top:829.02px;font-family:'Liberation Sans', sans-serif;font-size:12.2px;line-height:12.2px;color:#000;font-weight:normal;transform:scaleX(0.9700);transform-origin:0 0;">usdjpyf</span>
<span class="t" style="left:461.60px;top:829.02px;font-family:'Liberation Sans', sans-serif;font-size:12.2px;line-height:12.2px;color:#000;font-weight:normal;transform:scaleX(0.8850);transform-origin:0 0;">109.326</span>
<span class="t" style="left:540.01px;top:829.02px;font-family:'Liberation Sans', sans-serif;font-size:12.2px;line-height:12.2px;color:#000;font-weight:normal;transform:scaleX(0.8850);transform-origin:0 0;">0.000</span>
<span class="t" style="left:607.01px;top:829.02px;font-family:'Liberation Sans', sans-serif;font-size:12.2px;line-height:12.2px;color:#000;font-weight:normal;transform:scaleX(0.8850);transform-origin:0 0;">0.000</span>
<span class="t" style="left:684.73px;top:829.02px;font-family:'Liberation Sans', sans-serif;font-size:12.2px;line-height:12.2px;color:#000;font-weight:normal;transform:scaleX(0.8850);transform-origin:0 0;">2017.09.05 05:38:25</span>
<span class="t" style="left:811.80px;top:829.02px;font-family:'Liberation Sans', sans-serif;font-size:12.2px;line-height:12.2px;color:#000;font-weight:normal;transform:scaleX(0.8850);transform-origin:0 0;">109.363</span>
<span class="t" style="left:896.00px;top:829.02px;font-family:'Liberation Sans', sans-serif;font-size:12.2px;line-height:12.2px;color:#000;font-weight:normal;transform:scaleX(0.8850);transform-origin:0 0;">0.00</span>
<span class="t" style="left:963.40px;top:829.02px;font-family:'Liberation Sans', sans-serif;font-size:12.2px;line-height:12.2px;color:#000;font-weight:normal;transform:scaleX(0.8850);transform-origin:0 0;">0.00</span>
<span class="t" style="left:1034.11px;top:829.02px;font-family:'Liberation Sans', sans-serif;font-size:12.2px;line-height:12.2px;color:#000;font-weight:normal;transform:scaleX(0.8850);transform-origin:0 0;">-5.41</span>
<span class="t" style="left:1253.80px;top:829.02px;font-family:'Liberation Sans', sans-serif;font-size:12.2px;line-height:12.2px;color:#000;font-weight:normal;transform:scaleX(0.8850);transform-origin:0 0;">0.2</span>
<div style="left:13px;top:846px;width:1262px;height:20px;background:#ffffff;"></div>
<div style="left:13px;top:865px;width:1262px;height:1px;background:#d8d8d8;"></div>
<div style="left:99px;top:846px;width:1px;height:20px;background:#d8d8d8;"></div>
<div style="left:248px;top:846px;width:1px;height:20px;background:#d8d8d8;"></div>
<div style="left:315px;top:846px;width:1px;height:20px;background:#d8d8d8;"></div>
<div style="left:369px;top:846px;width:1px;height:20px;background:#d8d8d8;"></div>
<div style="left:436px;top:846px;width:1px;height:20px;background:#d8d8d8;"></div>
<div style="left:503px;top:846px;width:1px;height:20px;background:#d8d8d8;"></div>
<div style="left:570px;top:846px;width:1px;height:20px;background:#d8d8d8;"></div>
<div style="left:637px;top:846px;width:1px;height:20px;background:#d8d8d8;"></div>
<div style="left:786px;top:846px;width:1px;height:20px;background:#d8d8d8;"></div>
<div style="left:853px;top:846px;width:1px;height:20px;background:#d8d8d8;"></div>
<div style="left:920px;top:846px;width:1px;height:20px;background:#d8d8d8;"></div>
<div style="left:987px;top:846px;width:1px;height:20px;background:#d8d8d8;"></div>
<div style="left:1061px;top:846px;width:1px;height:20px;background:#d8d8d8;"></div>
<svg style="left:15px;top:847px" width="16" height="17" viewBox="0 0 16 17"><path d="M1.5,1.5 H8.5 L11.5,4.5 V14 H1.5 Z" fill="#fafafa" stroke="#707070"/><path d="M8.5,1.5 V4.5 H11.5" fill="none" stroke="#707070"/><circle cx="11.5" cy="13" r="3.3" fill="#2a8ee8"/></svg>
<span class="t" style="left:34.50px;top:849.02px;font-family:'Liberation Sans', sans-serif;font-size:12.2px;line-height:12.2px;color:#000;font-weight:normal;transform:scaleX(0.8758);transform-origin:0 0;">90443160</span>
<span class="t" style="left:146.33px;top:849.02px;font-family:'Liberation Sans', sans-serif;font-size:12.2px;line-height:12.2px;color:#000;font-weight:normal;transform:scaleX(0.8850);transform-origin:0 0;">2017.09.05 05:18:22</span>
<span class="t" style="left:293.63px;top:849.02px;font-family:'Liberation Sans', sans-serif;font-size:12.2px;line-height:12.2px;color:#000;font-weight:normal;transform:scaleX(0.9700);transform-origin:0 0;">buy</span>
<span class="t" style="left:345.40px;top:849.02px;font-family:'Liberation Sans', sans-serif;font-size:12.2px;line-height:12.2px;color:#000;font-weight:normal;transform:scaleX(0.8850);transform-origin:0 0;">0.16</span>
<span class="t" style="left:396.03px;top:849.02px;font-family:'Liberation Sans', sans-serif;font-size:12.2px;line-height:12.2px;color:#000;font-weight:normal;transform:scaleX(0.9700);transform-origin:0 0;">usdjpyf</span>
<span class="t" style="left:461.60px;top:849.02px;font-family:'Liberation Sans', sans-serif;font-size:12.2px;line-height:12.2px;color:#000;font-weight:normal;transform:scaleX(0.8850);transform-origin:0 0;">109.287</span>
<span class="t" style="left:540.01px;top:849.02px;font-family:'Liberation Sans', sans-serif;font-size:12.2px;line-height:12.2px;color:#000;font-weight:normal;transform:scaleX(0.8850);transform-origin:0 0;">0.000</span>
<span class="t" style="left:607.01px;top:849.02px;font-family:'Liberation Sans', sans-serif;font-size:12.2px;line-height:12.2px;color:#000;font-weight:normal;transform:scaleX(0.8850);transform-origin:0 0;">0.000</span>
<span class="t" style="left:684.73px;top:849.02px;font-family:'Liberation Sans', sans-serif;font-size:12.2px;line-height:12.2px;color:#000;font-weight:normal;transform:scaleX(0.8850);transform-origin:0 0;">2017.09.05 05:38:30</span>
<span class="t" style="left:811.80px;top:849.02px;font-family:'Liberation Sans', sans-serif;font-size:12.2px;line-height:12.2px;color:#000;font-weight:normal;transform:scaleX(0.8850);transform-origin:0 0;">109.346</span>
<span class="t" style="left:896.00px;top:849.02px;font-family:'Liberation Sans', sans-serif;font-size:12.2px;line-height:12.2px;color:#000;font-weight:normal;transform:scaleX(0.8850);transform-origin:0 0;">0.00</span>
<span class="t" style="left:963.40px;top:849.02px;font-family:'Liberation Sans', sans-serif;font-size:12.2px;line-height:12.2px;color:#000;font-weight:normal;transform:scaleX(0.8850);transform-origin:0 0;">0.00</span>
<span class="t" style="left:1037.70px;top:849.02px;font-family:'Liberation Sans', sans-serif;font-size:12.2px;line-height:12.2px;color:#000;font-weight:normal;transform:scaleX(0.8850);transform-origin:0 0;">8.63</span>
<span class="t" style="left:1220.39px;top:849.02px;font-family:'Liberation Sans', sans-serif;font-size:12.2px;line-height:12.2px;color:#000;font-weight:normal;transform:scaleX(0.9700);transform-origin:0 0;">VirtualTP</span>
<div style="left:13px;top:866px;width:1262px;height:20px;background:#ebebeb;"></div>
<div style="left:13px;top:885px;width:1262px;height:1px;background:#d8d8d8;"></div>
<div style="left:99px;top:866px;width:1px;height:20px;background:#d8d8d8;"></div>
<div style="left:248px;top:866px;width:1px;height:20px;background:#d8d8d8;"></div>
<div style="left:315px;top:866px;width:1px;height:20px;background:#d8d8d8;"></div>
<div style="left:369px;top:866px;width:1px;height:20px;background:#d8d8d8;"></div>
<div style="left:436px;top:866px;width:1px;height:20px;background:#d8d8d8;"></div>
<div style="left:503px;top:866px;width:1px;height:20px;background:#d8d8d8;"></div>
<div style="left:570px;top:866px;width:1px;height:20px;background:#d8d8d8;"></div>
<div style="left:637px;top:866px;width:1px;height:20px;background:#d8d8d8;"></div>
<div style="left:786px;top:866px;width:1px;height:20px;background:#d8d8d8;"></div>
<div style="left:853px;top:866px;width:1px;height:20px;background:#d8d8d8;"></div>
<div style="left:920px;top:866px;width:1px;height:20px;background:#d8d8d8;"></div>
<div style="left:987px;top:866px;width:1px;height:20px;background:#d8d8d8;"></div>
<div style="left:1061px;top:866px;width:1px;height:20px;background:#d8d8d8;"></div>
<svg style="left:15px;top:867px" width="16" height="17" viewBox="0 0 16 17"><path d="M1.5,1.5 H8.5 L11.5,4.5 V14 H1.5 Z" fill="#fafafa" stroke="#707070"/><path d="M8.5,1.5 V4.5 H11.5" fill="none" stroke="#707070"/><circle cx="11.5" cy="13" r="3.3" fill="#2a8ee8"/></svg>
<span class="t" style="left:34.50px;top:869.02px;font-family:'Liberation Sans', sans-serif;font-size:12.2px;line-height:12.2px;color:#000;font-weight:normal;transform:scaleX(0.8758);transform-origin:0 0;">90443197</span>
<span class="t" style="left:146.33px;top:869.02px;font-family:'Liberation Sans', sans-serif;font-size:12.2px;line-height:12.2px;color:#000;font-weight:normal;transform:scaleX(0.8850);transform-origin:0 0;">2017.09.05 05:18:24</span>
<span class="t" style="left:293.63px;top:869.02px;font-family:'Liberation Sans', sans-serif;font-size:12.2px;line-height:12.2px;color:#000;font-weight:normal;transform:scaleX(0.9700);transform-origin:0 0;">buy</span>
<span class="t" style="left:345.40px;top:869.02px;font-family:'Liberation Sans', sans-serif;font-size:12.2px;line-height:12.2px;color:#000;font-weight:normal;transform:scaleX(0.8850);transform-origin:0 0;">0.16</span>
<span class="t" style="left:398.00px;top:869.02px;font-family:'Liberation Sans', sans-serif;font-size:12.2px;line-height:12.2px;color:#000;font-weight:normal;transform:scaleX(0.9700);transform-origin:0 0;">eurjpyf</span>
<span class="t" style="left:461.60px;top:869.02px;font-family:'Liberation Sans', sans-serif;font-size:12.2px;line-height:12.2px;color:#000;font-weight:normal;transform:scaleX(0.8850);transform-origin:0 0;">130.089</span>
<span class="t" style="left:540.01px;top:869.02px;font-family:'Liberation Sans', sans-serif;font-size:12.2px;line-height:12.2px;color:#000;font-weight:normal;transform:scaleX(0.8850);transform-origin:0 0;">0.000</span>
<span class="t" style="left:607.01px;top:869.02px;font-family:'Liberation Sans', sans-serif;font-size:12.2px;line-height:12.2px;color:#000;font-weight:normal;transform:scaleX(0.8850);transform-origin:0 0;">0.000</span>
<span class="t" style="left:684.73px;top:869.02px;font-family:'Liberation Sans', sans-serif;font-size:12.2px;line-height:12.2px;color:#000;font-weight:normal;transform:scaleX(0.8850);transform-origin:0 0;">2017.09.05 05:38:33</span>
<span class="t" style="left:811.80px;top:869.02px;font-family:'Liberation Sans', sans-serif;font-size:12.2px;line-height:12.2px;color:#000;font-weight:normal;transform:scaleX(0.8850);transform-origin:0 0;">130.153</span>
<span class="t" style="left:896.00px;top:869.02px;font-family:'Liberation Sans', sans-serif;font-size:12.2px;line-height:12.2px;color:#000;font-weight:normal;transform:scaleX(0.8850);transform-origin:0 0;">0.00</span>
<span class="t" style="left:963.40px;top:869.02px;font-family:'Liberation Sans', sans-serif;font-size:12.2px;line-height:12.2px;color:#000;font-weight:normal;transform:scaleX(0.8850);transform-origin:0 0;">0.00</span>
<span class="t" style="left:1037.70px;top:869.02px;font-family:'Liberation Sans', sans-serif;font-size:12.2px;line-height:12.2px;color:#000;font-weight:normal;transform:scaleX(0.8850);transform-origin:0 0;">9.36</span>
<span class="t" style="left:1221.04px;top:869.02px;font-family:'Liberation Sans', sans-serif;font-size:12.2px;line-height:12.2px;color:#000;font-weight:normal;transform:scaleX(0.9700);transform-origin:0 0;">VirtualSL</span>
<div style="left:13px;top:885px;width:1262px;height:20px;background:#c6c6c6;"></div>
<svg style="left:18px;top:888px" width="12" height="12" viewBox="0 0 12 12"><circle cx="6" cy="6" r="3.6" fill="#b8b8b8" stroke="#8a8a8a" stroke-width="1.4"/></svg>
<span class="t" style="left:35.30px;top:888.72px;font-family:'Liberation Sans', sans-serif;font-size:12.2px;line-height:12.2px;color:#000;font-weight:bold;transform:scaleX(0.9682);transform-origin:0 0;white-space:pre;">Прибыль: -16.82  Кредит: 0.00  Депозит: 1 000.00  Снятие: 0.00</span>
<span class="t" style="left:1021.20px;top:888.72px;font-family:'Liberation Sans', sans-serif;font-size:12.2px;line-height:12.2px;color:#000;font-weight:bold;transform:scaleX(1.0059);transform-origin:0 0;">983.18</span>
<div style="left:1273px;top:764px;width:2px;height:141px;background:#fff;"></div>
<div style="left:12px;top:935px;width:1263px;height:1px;background:#000;"></div>
<div style="left:12px;top:936px;width:1263px;height:21px;background:#ededed;"></div>
<div style="left:148px;top:935px;width:102px;height:20px;box-sizing:border-box;background:#fbfbfb;border:1.5px solid #000;border-top:none;"></div>
<span class="t" style="left:25.40px;top:939.22px;font-family:'Liberation Sans', sans-serif;font-size:12.4px;line-height:12.4px;color:#6a6a6a;font-weight:normal;transform:scaleX(0.9891);transform-origin:0 0;">Торговля</span>
<span class="t" style="left:97.00px;top:939.22px;font-family:'Liberation Sans', sans-serif;font-size:12.4px;line-height:12.4px;color:#6a6a6a;font-weight:normal;transform:scaleX(0.9709);transform-origin:0 0;">Активы</span>
<span class="t" style="left:260.10px;top:939.22px;font-family:'Liberation Sans', sans-serif;font-size:12.4px;line-height:12.4px;color:#6a6a6a;font-weight:normal;transform:scaleX(0.9798);transform-origin:0 0;">Новости</span>
<span class="t" style="left:327.20px;top:939.22px;font-family:'Liberation Sans', sans-serif;font-size:12.4px;line-height:12.4px;color:#6a6a6a;font-weight:normal;transform:scaleX(0.9566);transform-origin:0 0;">Алерты</span>
<span class="t" style="left:389.30px;top:939.22px;font-family:'Liberation Sans', sans-serif;font-size:12.4px;line-height:12.4px;color:#6a6a6a;font-weight:normal;transform:scaleX(0.9761);transform-origin:0 0;">Почта</span>
<span class="t" style="left:455.40px;top:939.22px;font-family:'Liberation Sans', sans-serif;font-size:12.4px;line-height:12.4px;color:#6a6a6a;font-weight:normal;transform:scaleX(0.9717);transform-origin:0 0;">Компания</span>
<span class="t" style="left:531.30px;top:939.22px;font-family:'Liberation Sans', sans-serif;font-size:12.4px;line-height:12.4px;color:#6a6a6a;font-weight:normal;transform:scaleX(0.9674);transform-origin:0 0;">Маркет</span>
<span class="t" style="left:592.40px;top:939.22px;font-family:'Liberation Sans', sans-serif;font-size:12.4px;line-height:12.4px;color:#6a6a6a;font-weight:normal;transform:scaleX(0.9609);transform-origin:0 0;">Сигналы</span>
<span class="t" style="left:661.20px;top:939.22px;font-family:'Liberation Sans', sans-serif;font-size:12.4px;line-height:12.4px;color:#6a6a6a;font-weight:normal;transform:scaleX(0.9588);transform-origin:0 0;">Библиотека</span>
<span class="t" style="left:745.90px;top:939.22px;font-family:'Liberation Sans', sans-serif;font-size:12.4px;line-height:12.4px;color:#6a6a6a;font-weight:normal;transform:scaleX(0.9555);transform-origin:0 0;">Эксперты</span>
<span class="t" style="left:819.00px;top:939.22px;font-family:'Liberation Sans', sans-serif;font-size:12.4px;line-height:12.4px;color:#6a6a6a;font-weight:normal;transform:scaleX(0.9598);transform-origin:0 0;">Журнал</span>
<span class="t" style="left:158.10px;top:939.22px;font-family:'Liberation Sans', sans-serif;font-size:12.4px;line-height:12.4px;color:#000;font-weight:normal;transform:scaleX(0.9560);transform-origin:0 0;">История Счета</span>
<span class="t" style="left:424.60px;top:944.16px;font-family:'Liberation Sans', sans-serif;font-size:9px;line-height:9px;color:#e01010;font-weight:normal;transform:scaleX(1.0583);transform-origin:0 0;">14</span>
<div style="left:87.5px;top:939px;width:1px;height:15px;background:#7a7a7a;"></div>
<div style="left:317.7px;top:939px;width:1px;height:15px;background:#7a7a7a;"></div>
<div style="left:379.5px;top:939px;width:1px;height:15px;background:#7a7a7a;"></div>
<div style="left:445.5px;top:939px;width:1px;height:15px;background:#7a7a7a;"></div>
<div style="left:521px;top:939px;width:1px;height:15px;background:#7a7a7a;"></div>
<div style="left:582.5px;top:939px;width:1px;height:15px;background:#7a7a7a;"></div>
<div style="left:651.3px;top:939px;width:1px;height:15px;background:#7a7a7a;"></div>
<div style="left:736.4px;top:939px;width:1px;height:15px;background:#7a7a7a;"></div>
<div style="left:809.5px;top:939px;width:1px;height:15px;background:#7a7a7a;"></div>
<div style="left:873px;top:939px;width:1px;height:15px;background:#7a7a7a;"></div>
<div style="left:0px;top:957px;width:1275px;height:3px;background:#f8f8f8;"></div>
<div style="left:0px;top:960px;width:1275px;height:1px;background:#a0a0a0;"></div>
<div style="left:0px;top:961px;width:1275px;height:25px;background:#f0f0f0;"></div>
<div style="left:0px;top:984px;width:1275px;height:2px;background:#6a6e78;"></div>
<span class="t" style="left:0.50px;top:967.42px;font-family:'Liberation Sans', sans-serif;font-size:12.4px;line-height:12.4px;color:#000;font-weight:normal;transform:scaleX(0.9395);transform-origin:0 0;">Для вызова справки нажмите F1</span>
<span class="t" style="left:589.50px;top:967.42px;font-family:'Liberation Sans', sans-serif;font-size:12.4px;line-height:12.4px;color:#000;font-weight:normal;transform:scaleX(0.9678);transform-origin:0 0;">Default</span>
<div style="left:583px;top:964px;width:1px;height:19px;background:#a0a0a0;"></div>
<div style="left:699px;top:964px;width:1px;height:19px;background:#a0a0a0;"></div>
<div style="left:800px;top:964px;width:1px;height:19px;background:#a0a0a0;"></div>
<div style="left:873px;top:964px;width:1px;height:19px;background:#a0a0a0;"></div>
<div style="left:943px;top:964px;width:1px;height:19px;background:#a0a0a0;"></div>
<div style="left:1011px;top:964px;width:1px;height:19px;background:#a0a0a0;"></div>
<div style="left:1081px;top:964px;width:1px;height:19px;background:#a0a0a0;"></div>
<div style="left:1148px;top:964px;width:1px;height:19px;background:#a0a0a0;"></div>
<svg style="left:1152px;top:967px" width="25" height="14" viewBox="0 0 25 14"><rect x="0" y="0" width="2" height="7" fill="#5a8a10"/><rect x="0" y="11" width="2" height="3" fill="#0a3a5a"/><rect x="3" y="0" width="2" height="7" fill="#5a8a10"/><rect x="3" y="10" width="2" height="4" fill="#0a3a5a"/><rect x="6" y="0" width="2" height="7" fill="#5a8a10"/><rect x="6" y="9" width="2" height="5" fill="#0a3a5a"/><rect x="9" y="0" width="2" height="7" fill="#5a8a10"/><rect x="9" y="8" width="2" height="6" fill="#0a3a5a"/><rect x="12" y="0" width="2" height="7" fill="#5a8a10"/><rect x="12" y="7" width="2" height="7" fill="#0a3a5a"/><rect x="15" y="0" width="2" height="7" fill="#5a8a10"/><rect x="15" y="6" width="2" height="8" fill="#0a3a5a"/><rect x="18" y="0" width="2" height="7" fill="#5a8a10"/><rect x="18" y="5" width="2" height="9" fill="#0a3a5a"/><rect x="21" y="0" width="2" height="7" fill="#5a8a10"/><rect x="21" y="4" width="2" height="10" fill="#0a3a5a"/></svg>
<span class="t" style="left:1180.00px;top:967.42px;font-family:'Liberation Sans', sans-serif;font-size:12.4px;line-height:12.4px;color:#000;font-weight:normal;transform:scaleX(0.9235);transform-origin:0 0;">56040/22 kb</span>
</body></html>
